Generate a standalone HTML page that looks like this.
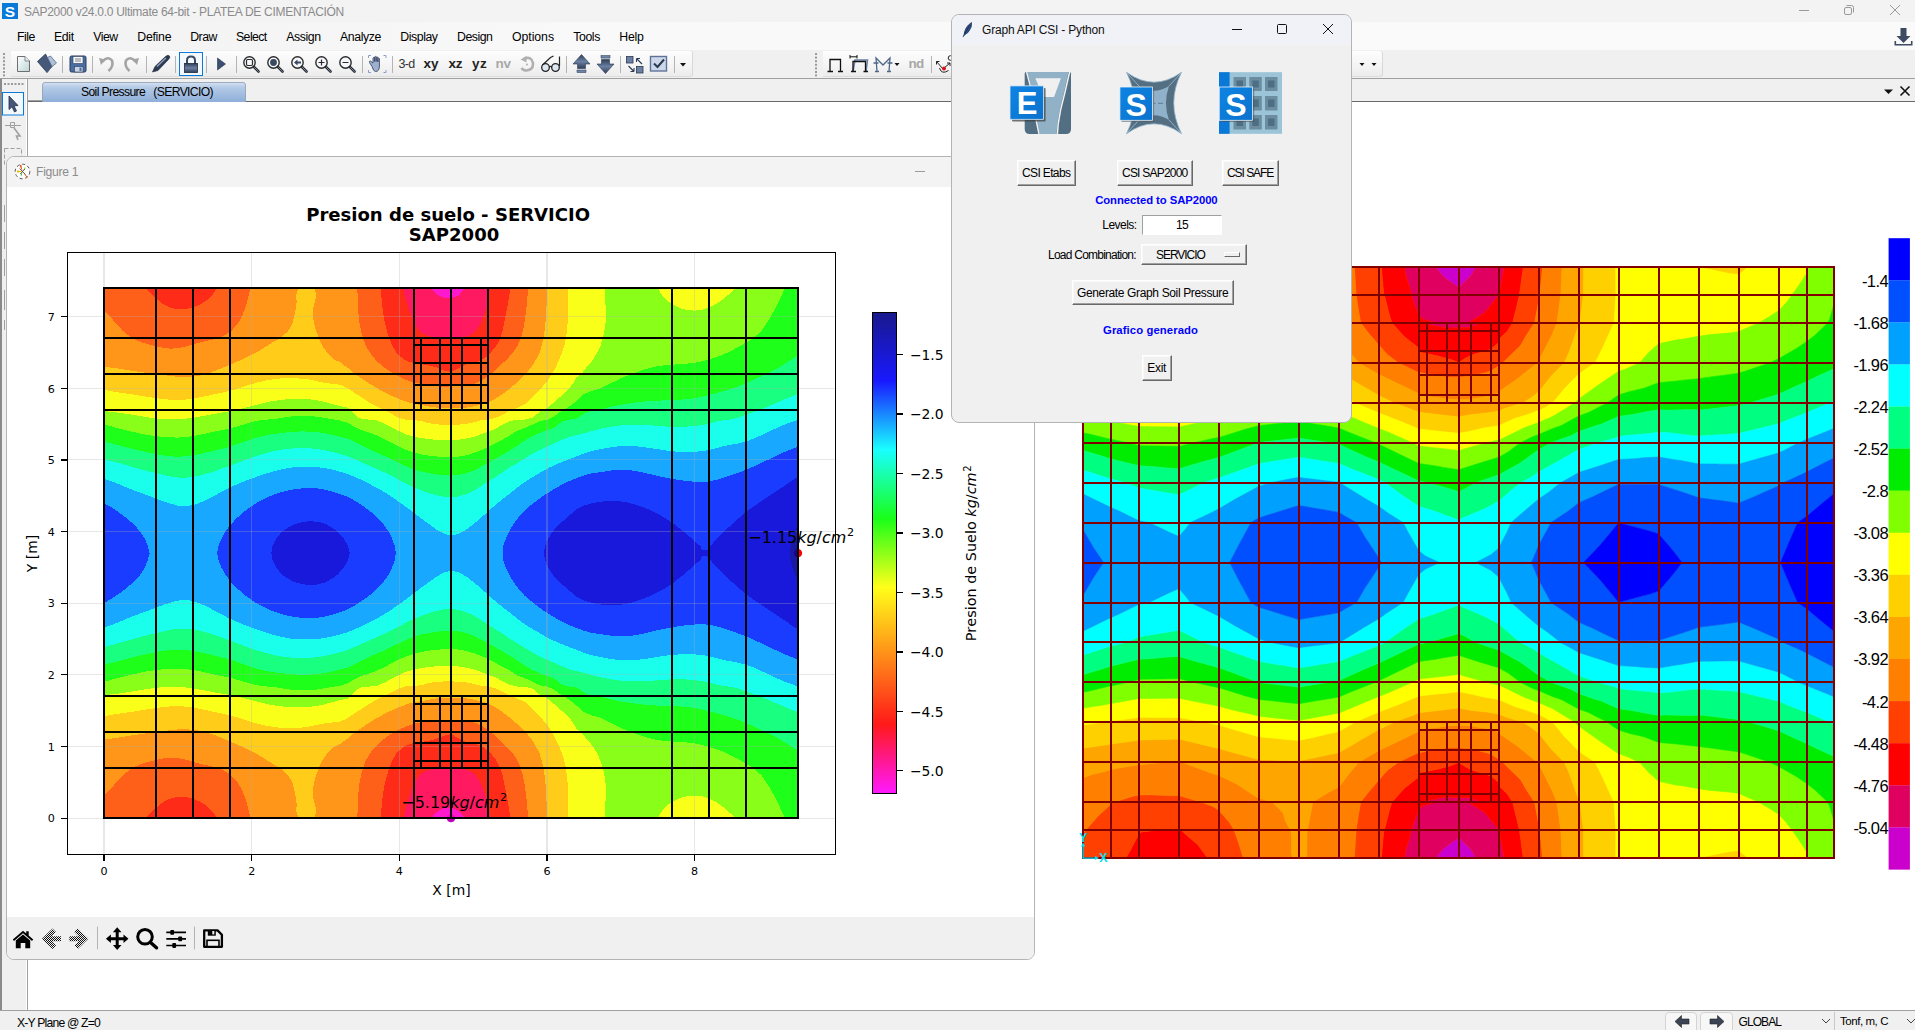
<!DOCTYPE html>
<html lang="en">
<head>
<meta charset="utf-8">
<title>SAP2000 - Soil Pressure</title>
<style>
html,body{margin:0;padding:0;}
body{width:1915px;height:1030px;overflow:hidden;background:#fff;position:relative;font-family:"Liberation Sans",sans-serif;font-size:12px;color:#000;}
.abs{position:absolute;}
.t{position:absolute;white-space:nowrap;line-height:1;}
#titlebar{left:0;top:0;width:1915px;height:22px;background:#f3f3f3;}
#menubar{left:0;top:22px;width:1915px;height:28px;background:linear-gradient(to right,#f3f3f3 0,#f3f3f3 110px,#f9f9f9 600px,#fafafa 100%);}
#toolbar{left:0;top:50px;width:1915px;height:28px;background:#f0f0f0;}
#tabrow{left:0;top:78px;width:1915px;height:24px;background:#f0f0f0;}
#leftstrip{left:0;top:79px;width:27px;height:931px;background:#f0f0f0;}
#status{left:0;top:1010px;width:1915px;height:20px;background:#f0f0f0;border-top:1px solid #a0a0a0;box-sizing:border-box;}
.menu{top:31px;font-size:12px;}
.tb{position:absolute;top:51px;height:26px;background:linear-gradient(#fdfdfd,#f4f4f4 60%,#ececec);border-right:1px solid #d8d8d8;border-bottom:1px solid #dcdcdc;box-sizing:border-box;}
.sep{position:absolute;top:55px;width:1px;height:18px;background:#b8b8b8;}
.ico{position:absolute;}
/* figure window */
#figwin{left:6px;top:156px;width:1029px;height:804px;border:1px solid #b4b4b4;border-radius:8px;box-sizing:border-box;background:#fff;overflow:hidden;}
#figtitle{left:0;top:0;width:1027px;height:30px;background:#f3f3f3;}
#figtool{left:0;top:760px;width:1027px;height:42px;background:#f0f0f0;}
/* tk window */
#tkwin{left:951px;top:14px;width:401px;height:409px;border:1px solid #b4b4b4;border-radius:8px;box-sizing:border-box;background:#f0f0f0;overflow:hidden;}
#tktitle{left:0;top:0;width:399px;height:30px;background:#f1f2f8;}
.tkbtn{position:absolute;box-sizing:border-box;background:#f0f0f0;border:1px solid;border-color:#fff #696969 #696969 #fff;box-shadow:inset -1px -1px 0 #a0a0a0, inset 1px 1px 0 #f8f8f8;font-size:12px;text-align:center;}
.tkblue{color:#1414ff;font-weight:bold;font-size:11px;}
.lg{position:absolute;left:1830px;width:58px;text-align:right;font-size:16.5px;letter-spacing:-0.6px;line-height:1;white-space:nowrap;}
</style>
</head>
<body>
<!-- ===== SAP2000 main window chrome ===== -->
<div id="titlebar" class="abs"></div>
<div id="menubar" class="abs"></div>
<div id="toolbar" class="abs"></div>
<div id="tabrow" class="abs"></div>
<div class="abs" style="left:0;top:78px;width:1915px;height:1px;background:#a0a0a0"></div>
<div class="abs" style="left:28px;top:101px;width:1887px;height:1px;background:#696969"></div>
<div id="leftstrip" class="abs"></div>
<div class="abs" style="left:0;top:79px;width:2px;height:931px;background:#8a8a8a"></div>
<div class="abs" style="left:26px;top:79px;width:1px;height:931px;background:#fff"></div>
<div class="abs" style="left:27px;top:79px;width:1px;height:931px;background:#a0a0a0"></div>
<div id="status" class="abs"></div>

<!-- toolbar backgrounds -->
<div class="tb" style="left:11px;width:682px;border-radius:0 3px 3px 0"></div>
<div class="tb" style="left:823px;width:560px;border-radius:0 3px 3px 0"></div>
<svg class="abs" style="left:0;top:0" width="1915" height="120" viewBox="0 0 1915 120">
<defs>
<linearGradient id="gdoc" x1="0" y1="0" x2="1" y2="1"><stop offset="0" stop-color="#ffffff"/><stop offset="1" stop-color="#bcd6d8"/></linearGradient>
<linearGradient id="gblue" x1="0" y1="0" x2="0" y2="1"><stop offset="0" stop-color="#2f3e58"/><stop offset="0.5" stop-color="#6b80a3"/><stop offset="1" stop-color="#2f3e58"/></linearGradient>
<linearGradient id="gtab" x1="0" y1="0" x2="0" y2="1"><stop offset="0" stop-color="#d6e2f1"/><stop offset="0.25" stop-color="#b4cae6"/><stop offset="1" stop-color="#8eafd9"/></linearGradient>
</defs>
<!-- title icon -->
<rect x="2" y="3" width="16" height="16" fill="#0a7ad8"/>
<text x="10" y="17" font-family="Liberation Sans, sans-serif" font-size="15.5" font-weight="bold" fill="#fff" text-anchor="middle">S</text>
<!-- window controls -->
<g stroke="#9a9a9a" stroke-width="1" fill="none">
<path d="M1799,10.5H1809"/>
<rect x="1844.5" y="7.5" width="7" height="7" rx="1.5"/><path d="M1846.5,5.500H1851.5Q1853.5,5.500 1853.5,7.500V12.5"/>
<path d="M1890,5L1900,15M1900,5L1890,15"/>
</g>
<!-- download icon -->
<g fill="#3d4b63" transform="translate(2.5,0)"><path d="M1898,28h6v8h4l-7,7l-7,-7h4z"/><path d="M1892,41v4.5h18V41h-1.6v2.9h-14.8V41z"/></g>
<!-- grips -->
<g fill="#9a9a9a">
<rect x="3" y="53" width="2" height="2"/><rect x="3" y="56.6" width="2" height="2"/><rect x="3" y="60.2" width="2" height="2"/><rect x="3" y="63.8" width="2" height="2"/><rect x="3" y="67.4" width="2" height="2"/><rect x="3" y="71" width="2" height="2"/><rect x="3" y="74.4" width="2" height="2"/>
<rect x="815" y="53" width="2" height="2"/><rect x="815" y="56.6" width="2" height="2"/><rect x="815" y="60.2" width="2" height="2"/><rect x="815" y="63.8" width="2" height="2"/><rect x="815" y="67.4" width="2" height="2"/><rect x="815" y="71" width="2" height="2"/><rect x="815" y="74.4" width="2" height="2"/>
<rect x="4" y="83" width="2" height="2"/><rect x="7.5" y="83" width="2" height="2"/><rect x="11" y="83" width="2" height="2"/><rect x="14.5" y="83" width="2" height="2"/><rect x="18" y="83" width="2" height="2"/><rect x="21.5" y="83" width="2" height="2"/>
</g>
<!-- separators -->
<g stroke="#b4b4b4" stroke-width="1">
<path d="M62.5,56V73M92.5,56V73M146.5,56V73M175.5,56V73M206.5,56V73M236.5,56V73M362.5,56V73M392.5,56V73M566.5,56V73M620.5,56V73M674.5,56V73M931.5,56V73"/>
</g>
<!-- new -->
<path d="M17.5,56.5H25L29.5,61V71.5H17.5Z" fill="url(#gdoc)" stroke="#6e6e6e"/><path d="M25,56.5V61H29.5" fill="#e8f0f0" stroke="#6e6e6e" stroke-width=".8"/>
<!-- open -->
<path d="M37.5,61.5L45.5,54L52,66.5L47,72.5Z" fill="#46587a" stroke="#2c3850" stroke-width=".8"/>
<path d="M47,72.5L52,66.5L56.5,63L50.5,56L47.5,57.5L52,66.5" fill="#aebfd9" stroke="#5a6c8c" stroke-width=".8"/>
<!-- save -->
<rect x="70" y="56" width="16" height="16" rx="1.5" fill="#4a6da3" stroke="#2c3c5a"/>
<rect x="73" y="56.5" width="10" height="7" fill="#f4f6fa" stroke="#2c3c5a" stroke-width=".6"/><path d="M75,59H81M75,61H81" stroke="#555" stroke-width=".7"/>
<rect x="74.5" y="66.5" width="8.5" height="5.5" fill="#c9d3e4" stroke="#2c3c5a" stroke-width=".6"/><rect x="79.5" y="67.5" width="2" height="3.5" fill="#4a6da3"/>
<!-- undo / redo -->
<g fill="none" stroke="#a4a4a4" stroke-width="2.6" stroke-linecap="butt">
<path d="M102.5,61.5Q108,55.5 112,60.5Q114,66 108.5,71"/>
<path d="M135.5,61.5Q130,55.5 126,60.5Q124,66 129.5,71"/>
</g>
<path d="M99,58L105.5,59.5L101,65Z" fill="#a4a4a4"/><path d="M139,58L132.500,59.5L137,65Z" fill="#a4a4a4"/>
<!-- pen -->
<path d="M152.500,72L155,66.500L165.500,56.500Q168,54.500 169.500,56Q170.500,57.500 168.500,59.500L158,70.500Z" fill="#2e3a52" stroke="#1e2738" stroke-width=".6"/>
<path d="M157,66.500L166,58" stroke="#8fa3c4" stroke-width="1.2"/>
<!-- lock -->
<rect x="179.5" y="52.5" width="23" height="23" fill="#f3f8fd" stroke="#0a7ad8"/>
<path d="M187,64V60.5Q187,56.500 191,56.500Q195,56.500 195,60.500V64" fill="none" stroke="#3a4962" stroke-width="2"/>
<rect x="184.500" y="63.500" width="13" height="9" fill="url(#gblue)" stroke="#1f2a3d" stroke-width=".8"/>
<!-- play -->
<path d="M217.500,58L225.500,64L217.500,70Z" fill="#3b4f73" stroke="#26344e" stroke-width=".6"/>
<!-- magnifiers -->
<g fill="#f6f8fb" stroke="#2c2c2c" stroke-width="1.4">
<circle cx="249.5" cy="62.5" r="5.7"/><circle cx="273.500" cy="62.5" r="5.7"/><circle cx="297.5" cy="62.5" r="5.7"/><circle cx="321.500" cy="62.500" r="5.7"/><circle cx="345.500" cy="62.500" r="5.7"/>
</g>
<g stroke="#2c2c2c" stroke-width="2.6" stroke-linecap="round"><path d="M254,67L258.500,71.500M278,67L282.500,71.500M302,67L306.500,71.500M326,67L330.500,71.500M350,67L354.500,71.500"/></g>
<g stroke="#6e86ad" stroke-width="1" stroke-linecap="round"><path d="M254.500,67.500L258.500,71.500M278.500,67.500L282.500,71.500M302.500,67.500L306.500,71.500M326.500,67.500L330.500,71.500M350.500,67.500L354.500,71.500"/></g>
<rect x="246.500" y="59.500" width="6" height="6" rx="1.2" fill="none" stroke="#2c2c2c" stroke-width="1.2"/>
<circle cx="273.500" cy="62.500" r="3.4" fill="#3a4860"/>
<path d="M294,62.500L297.500,59.500V61.500H301V63.500H297.500V65.500Z" fill="#3a4860"/>
<path d="M318.500,62.500H324.500M321.500,59.500V65.500M342.500,62.500H348.500" stroke="#2c2c2c" stroke-width="1.2"/>
<!-- hand -->
<path d="M368.5,58V55.5H371M383.500,55.500H386V58M368.500,70V72.500H371M383.500,72.500H386V70" fill="none" stroke="#8aa0c4" stroke-width="1"/>
<path d="M372,66.500L369.500,62.500Q369,61 370.500,61L373,63V58Q373.700,56.800 374.500,58V61.500V57Q375.300,55.800 376.100,57V61.500V57.300Q377,56.200 377.800,57.300V62V58.500Q378.600,57.500 379.400,58.500V66Q379.400,71.500 375.500,71.500Q373.500,71.500 372,66.500Z" fill="#9db0cf" stroke="#3b4a66" stroke-width=".9"/>
<!-- rotate gray -->
<path d="M524,58.500Q531.500,56 533,63Q533.500,70 526.500,70.500Q523,70.500 521.500,68" fill="none" stroke="#b0b0b0" stroke-width="2.6"/><path d="M520.500,59.500L526.500,56V62.500Z" fill="#b0b0b0"/><circle cx="527" cy="64.500" r="1" fill="#b0b0b0"/>
<!-- glasses -->
<g fill="#dfe7f3" stroke="#222" stroke-width="1.3"><circle cx="545.500" cy="67.500" r="3.800"/><circle cx="555.500" cy="67.500" r="3.800"/></g>
<path d="M542.500,65L550.500,57.500L553.500,56M559.500,66V56.500M549.300,67Q550.500,65.800 551.700,67" fill="none" stroke="#222" stroke-width="1.2"/>
<!-- up / down arrows -->
<path d="M581.500,54.500L590,64H585.500V68.500H577.500V64H573Z" fill="url(#gblue)" stroke="#2b3950" stroke-width=".6"/><rect x="577" y="70" width="9" height="2.600" fill="#6e84a8" stroke="#2b3950" stroke-width=".5"/>
<path d="M605.500,73.500L614,64H609.500V59.500H601.500V64H597Z" fill="url(#gblue)" stroke="#2b3950" stroke-width=".6"/><rect x="601" y="55.500" width="9" height="2.600" fill="#6e84a8" stroke="#2b3950" stroke-width=".5"/>
<!-- shrink -->
<rect x="626.500" y="56.500" width="6.500" height="6.500" fill="#6b80a3" stroke="#2b3950" stroke-width=".8"/><rect x="636.500" y="66.500" width="6.500" height="6.500" fill="#6b80a3" stroke="#2b3950" stroke-width=".8"/>
<path d="M636.500,58.500L642,64M636.500,58.500H640M636.500,58.500V62M634,71.500L628.500,66M634,71.500H630.500M634,71.500V68" stroke="#2b3950" stroke-width="1.1" fill="none"/>
<!-- check -->
<rect x="650.500" y="56.500" width="16" height="14.500" fill="#ccd8ea" stroke="#5f7398" stroke-width="1.400"/><path d="M654,63.500L657.500,67L664,59.500" fill="none" stroke="#2b3950" stroke-width="2"/>
<!-- dropdowns -->
<path d="M680,63H686L683,66.500Z" fill="#111"/>
<path d="M894.500,63H899.500L897,66Z" fill="#111"/>
<path d="M1359.500,63H1364.500L1362,66ZM1371.500,63H1376.500L1374,66Z" fill="#111"/>
<!-- portal frames -->
<path d="M827.500,71.500H833M830,71.500V59.500H840.500V71.500M838,71.500H843" fill="none" stroke="#111" stroke-width="1.300"/>
<path d="M850,55V58.500M850,56.800H857M857,55V58.500" fill="none" stroke="#111" stroke-width="1"/>
<path d="M853,71.500L855,60H867.500L866,71.500" fill="none" stroke="#6b80a3" stroke-width="1.600"/>
<path d="M851,71.500H856M853,71.500V61.500H865.500V71.500M863.500,71.500H868" fill="none" stroke="#111" stroke-width="1.300"/>
<path d="M875,71.500H879M887,71.500H891M877,71.500L876,58L883,65L890,58L889,71.500M873.500,63H878.500M887.500,63H892.500" fill="none" stroke="#4f6689" stroke-width="1.300"/>
<!-- snap icon -->
<path d="M936.500,61.500L943,69M936.500,61.500H939.500M936.500,61.500V64.500M939.500,68Q941.500,75 948.500,70.500M944,68L950,63M950,63H947M950,63V66" fill="none" stroke="#222" stroke-width="1"/><circle cx="944" cy="68.500" r="2" fill="#e0101a"/><circle cx="950.500" cy="58" r="2.300" fill="none" stroke="#222"/>
<!-- tab -->
<path d="M42.500,102V85Q42.500,82.500 45,82.500H243Q245.500,82.500 245.500,85V102Z" fill="url(#gtab)"/><path d="M42.500,102V85Q42.500,82.500 45,82.500H243Q245.500,82.500 245.500,85V102" fill="none" stroke="#8a9ab0" stroke-width=".8"/>
<path d="M28,100.500H42.500" stroke="#a0a0a0"/>
<!-- tab row right glyphs -->
<path d="M1884,89.500H1893L1888.500,94Z" fill="#111"/><path d="M1900.500,86.500L1909.500,95.500M1909.500,86.500L1900.500,95.500" stroke="#111" stroke-width="1.600"/>
<!-- left strip: select tool -->
<rect x="2.500" y="92.500" width="21" height="22.500" fill="#f3f8fd" stroke="#0a7ad8"/>
<path d="M9,96L18,105.500L14,105.800L16.500,111L14.500,112L12,106.800L9,109.500Z" fill="#46587a" stroke="#222d42" stroke-width=".8"/>
</svg>
<!-- left strip gray icons (mostly hidden) -->
<svg class="abs" style="left:0;top:115px" width="28" height="900" viewBox="0 115 28 900">
<g fill="none" stroke="#a0a0a0" stroke-width="1">
<path d="M5,125.500H21M10.500,122.500h4v5h-4z"/><path d="M14,128L20,136L16.500,136L18,140" stroke-width="1.6"/>
<path d="M4.500,148.500H21.500V164" stroke-dasharray="4 2"/><path d="M4.500,148.500V166" stroke-dasharray="4 2"/>
<path d="M4.500,205V222M4.500,232V249M4.500,259V276M4.500,290V310M4.500,320V330" />
</g>
</svg>
<!-- status bar items -->
<div class="abs" style="left:1665px;top:1012px;width:32px;height:22px;background:#f7f7f7;border:1px solid #d4d4d4;border-radius:4px;box-sizing:border-box"></div>
<div class="abs" style="left:1700px;top:1012px;width:33px;height:22px;background:#f7f7f7;border:1px solid #d4d4d4;border-radius:4px;box-sizing:border-box"></div>
<div class="abs" style="left:1834px;top:1012px;width:1px;height:18px;background:#c8c8c8"></div>
<svg class="abs" style="left:1660px;top:1011px" width="255" height="19" viewBox="1660 1011 255 19">
<path d="M1675,1021.500L1681.500,1015.500V1019H1689V1024H1681.500V1027.500Z" fill="#3a4454" stroke="#222" stroke-width=".6"/>
<path d="M1724,1021.500L1717.500,1015.500V1019H1710V1024H1717.500V1027.500Z" fill="#3a4454" stroke="#222" stroke-width=".6"/>
<path d="M1822,1019L1826,1023L1830,1019M1907,1019L1911,1023L1915,1019" fill="none" stroke="#444" stroke-width="1"/>
</svg>
<div class="t" style="left:24.0px;top:5.8px;font-size:12px;color:#8a8a8a;font-weight:normal;letter-spacing:-0.285px;">SAP2000 v24.0.0 Ultimate 64-bit - PLATEA DE CIMENTACIÓN</div>
<div class="t" style="left:17.0px;top:30.9px;font-size:12.3px;color:#000;font-weight:normal;letter-spacing:-0.457px;">File</div>
<div class="t" style="left:54.0px;top:30.9px;font-size:12.3px;color:#000;font-weight:normal;letter-spacing:-0.376px;">Edit</div>
<div class="t" style="left:93.2px;top:30.9px;font-size:12.3px;color:#000;font-weight:normal;letter-spacing:-0.459px;">View</div>
<div class="t" style="left:137.3px;top:30.9px;font-size:12.3px;color:#000;font-weight:normal;letter-spacing:-0.274px;">Define</div>
<div class="t" style="left:190.2px;top:30.9px;font-size:12.3px;color:#000;font-weight:normal;letter-spacing:-0.476px;">Draw</div>
<div class="t" style="left:236.0px;top:30.9px;font-size:12.3px;color:#000;font-weight:normal;letter-spacing:-0.581px;">Select</div>
<div class="t" style="left:286.2px;top:30.9px;font-size:12.3px;color:#000;font-weight:normal;letter-spacing:-0.420px;">Assign</div>
<div class="t" style="left:340.0px;top:30.9px;font-size:12.3px;color:#000;font-weight:normal;letter-spacing:-0.393px;">Analyze</div>
<div class="t" style="left:400.3px;top:30.9px;font-size:12.3px;color:#000;font-weight:normal;letter-spacing:-0.433px;">Display</div>
<div class="t" style="left:457.0px;top:30.9px;font-size:12.3px;color:#000;font-weight:normal;letter-spacing:-0.464px;">Design</div>
<div class="t" style="left:512.0px;top:30.9px;font-size:12.3px;color:#000;font-weight:normal;letter-spacing:-0.056px;">Options</div>
<div class="t" style="left:573.2px;top:30.9px;font-size:12.3px;color:#000;font-weight:normal;letter-spacing:-0.384px;">Tools</div>
<div class="t" style="left:619.3px;top:30.9px;font-size:12.3px;color:#000;font-weight:normal;letter-spacing:-0.224px;">Help</div>
<div class="t" style="left:81.0px;top:86.3px;font-size:12.2px;color:#000;font-weight:normal;letter-spacing:-0.645px;">Soil Pressure&nbsp;&nbsp;&nbsp;(SERVICIO)</div>
<div class="t" style="left:398.5px;top:57.9px;font-size:12.5px;color:#333;font-weight:normal;letter-spacing:-0.693px;">3-d</div>
<div class="t" style="left:423.6px;top:57.1px;font-size:13.5px;color:#222;font-weight:bold;letter-spacing:-0.016px;">xy</div>
<div class="t" style="left:448.6px;top:57.1px;font-size:13.5px;color:#222;font-weight:bold;letter-spacing:-0.233px;">xz</div>
<div class="t" style="left:472.0px;top:57.1px;font-size:13.5px;color:#222;font-weight:bold;letter-spacing:0.367px;">yz</div>
<div class="t" style="left:495.5px;top:57.1px;font-size:13.5px;color:#a8a8a8;font-weight:bold;letter-spacing:-0.333px;">nv</div>
<div class="t" style="left:908.6px;top:57.1px;font-size:13.5px;color:#a8a8a8;font-weight:bold;letter-spacing:-0.750px;">nd</div>
<div class="t" style="left:17.0px;top:1017.4px;font-size:12.2px;color:#000;font-weight:normal;letter-spacing:-0.809px;">X-Y Plane @ Z=0</div>
<div class="t" style="left:1738.5px;top:1015.8px;font-size:12px;color:#000;font-weight:normal;letter-spacing:-0.922px;">GLOBAL</div>
<div class="t" style="left:1840.0px;top:1016.3px;font-size:11.5px;color:#000;font-weight:normal;letter-spacing:-0.441px;">Tonf, m, C</div>

<!-- ===== SAP2000 contour view ===== -->
<svg class="abs" style="left:0;top:0" width="1915" height="1030" viewBox="0 0 1915 1030">
<rect x="1083.1" y="267.012" width="751.342" height="591.038" fill="#ffff00"/>
<path fill="#cc00cc" stroke="#cc00cc" stroke-width="0.6" fill-rule="evenodd" d="M1475.8,858 1471,849.5 1458.8,837.4 1444.1,847.8 1435.4,858 1458.8,858ZM1435.4,267 1444.1,277.3 1458.8,287.6 1471,275.5 1475.8,267 1458.8,267Z"/>
<path fill="#e00060" stroke="#e00060" stroke-width="0.6" fill-rule="evenodd" d="M1435.4,858 1444.1,847.8 1458.8,837.4 1471,849.5 1475.8,858 1498.7,858 1504.1,858 1503.7,854.6 1498.9,830.2 1498.9,830.1 1498.9,830 1498.7,829.5 1484.4,812.2 1468.4,802.1 1458.8,802.1 1436.2,802.1 1423.7,805.6 1418.8,809.1 1412.7,825.8 1411.5,830.1 1410.1,836.2 1406,849.1 1404.3,858 1418.8,858ZM1475.8,267 1471,275.5 1458.8,287.6 1444.1,277.3 1435.4,267 1418.8,267 1404.3,267 1406,276 1410.1,288.9 1411.5,295 1412.7,299.2 1418.8,315.9 1423.7,319.5 1436.2,322.9 1458.8,322.9 1468.4,322.9 1484.4,312.9 1498.7,295.5 1498.9,295.1 1498.9,295 1498.9,294.8 1503.7,270.5 1504.1,267 1498.7,267ZM1480.5,802.1 1476,800 1470.8,797.8 1465.5,797.6 1463.8,797.5 1458.8,797.4 1454.1,797.2 1451.4,797.2 1446.8,797.1 1438,798.6 1433.4,799.5 1426.8,800.7 1425.9,801.2 1424.6,802.1 1426.8,802.1 1446.8,802.1 1458.8,802.1 1470.8,802.1ZM1424.6,322.9 1425.9,323.8 1426.8,324.4 1433.4,325.6 1438,326.4 1446.8,328 1451.4,327.9 1454.1,327.8 1458.8,327.7 1463.8,327.5 1465.5,327.4 1470.8,327.3 1476,325 1480.5,322.9 1470.8,322.9 1458.8,322.9 1446.8,322.9 1426.8,322.9Z"/>
<path fill="#ff0000" stroke="#ff0000" stroke-width="0.6" fill-rule="evenodd" d="M1207.6,858 1197.9,844.8 1188.4,836.7 1181.2,830.1 1180.1,829.4 1179,828.9 1177.3,828.9 1159,830.1 1141.6,831.9 1139.1,833.6 1130.7,849.7 1126,858 1139.1,858 1179,858ZM1404.3,858 1406,849.1 1410.1,836.2 1411.5,830.1 1412.7,825.8 1418.8,809.1 1423.7,805.6 1436.2,802.1 1418.8,802.1 1418.8,776.9 1404.7,788 1391.9,802.1 1389.5,809.6 1385.6,825.4 1384.2,830.1 1383.5,833.3 1381.5,856.2 1381.1,858ZM1523.3,858 1521.6,846.1 1521.2,842.3 1519.4,830.1 1516.5,817.7 1515.5,813.8 1512.6,802.1 1507.2,793.7 1498.7,785.4 1498.7,802.1 1468.4,802.1 1484.4,812.2 1498.7,829.5 1498.9,830 1498.9,830.1 1498.9,830.2 1503.7,854.6 1504.1,858ZM1504.1,267 1503.7,270.5 1498.9,294.8 1498.9,295 1498.9,295.1 1498.7,295.5 1484.4,312.9 1468.4,322.9 1498.7,322.9 1498.7,339.6 1507.2,331.4 1512.6,322.9 1515.5,311.2 1516.5,307.4 1519.4,295 1521.2,282.7 1521.6,279 1523.3,267ZM1381.1,267 1381.5,268.8 1383.5,291.7 1384.2,295 1385.6,299.7 1389.5,315.4 1391.9,322.9 1404.7,337 1418.8,348.1 1418.8,322.9 1436.2,322.9 1423.7,319.5 1418.8,315.9 1412.7,299.2 1411.5,295 1410.1,288.9 1406,276 1404.3,267ZM1126,267 1130.7,275.4 1139.1,291.5 1141.6,293.2 1159,295 1177.3,296.1 1179,296.2 1180.1,295.7 1181.2,295 1188.4,288.4 1197.9,280.2 1207.6,267 1179,267 1139.1,267ZM1424.6,802.1 1425.9,801.2 1426.8,800.7 1433.4,799.5 1438,798.6 1446.8,797.1 1451.4,797.2 1454.1,797.2 1458.8,797.4 1463.8,797.5 1465.5,797.6 1470.8,797.8 1476,800 1480.5,802.1 1490.7,802.1 1498.7,802.1 1498.7,794.2 1498.7,782.3 1496.3,780.4 1491.7,776.5 1490.7,775.7 1489.6,775.4 1486,774.2 1475.6,771.3 1470.8,769.5 1465.9,767 1459.4,762.8 1458.8,762.4 1458.4,762.6 1450.3,765.8 1446.8,766.7 1438.1,769 1434.2,769.8 1426.8,771.4 1425.2,771.7 1420,772.5 1418.8,772.7 1418.8,774.2 1418.8,794.2 1418.8,802.1ZM1480.5,322.9 1476,325 1470.8,327.3 1465.5,327.4 1463.8,327.5 1458.8,327.7 1454.1,327.8 1451.4,327.9 1446.8,328 1438,326.4 1433.4,325.6 1426.8,324.4 1425.9,323.8 1424.6,322.9 1418.8,322.9 1418.8,330.9 1418.8,350.9 1418.8,352.4 1420,352.6 1425.2,353.3 1426.8,353.6 1434.2,355.3 1438.1,356.1 1446.8,358.4 1450.3,359.3 1458.4,362.5 1458.8,362.6 1459.4,362.2 1465.9,358 1470.8,355.6 1475.6,353.8 1486,350.9 1489.6,349.7 1490.7,349.3 1491.7,348.6 1496.3,344.7 1498.7,342.7 1498.7,330.9 1498.7,322.9 1490.7,322.9Z"/>
<path fill="#ff4000" stroke="#ff4000" stroke-width="0.6" fill-rule="evenodd" d="M1126,858 1130.7,849.7 1139.1,833.6 1141.6,831.9 1159,830.1 1177.3,828.9 1179,828.9 1180.1,829.4 1181.2,830.1 1188.4,836.7 1197.9,844.8 1207.6,858 1219,858 1243.3,858 1239.1,844.2 1239.1,844 1234.1,830.1 1229.7,822.6 1219,810.4 1213,806.4 1201.2,802.1 1184,797.1 1179,795.4 1172.5,795.6 1146.5,794.7 1139.1,794.9 1134.6,795.8 1114,802.1 1112,803.1 1111.1,803.9 1097.5,816.6 1085.7,830.1 1084.5,831.5 1083.1,833 1083.1,858 1111.1,858ZM1381.1,858 1381.5,856.2 1383.5,833.3 1384.2,830.1 1385.6,825.4 1389.5,809.6 1391.9,802.1 1404.7,788 1418.8,776.9 1418.8,762.2 1418.8,752.4 1412.2,755.6 1398.3,762.2 1387.2,770.5 1378.8,780 1368.6,791.9 1360.7,802.1 1358.3,815.7 1358.2,816.6 1356.1,830.1 1355.3,841.6 1355.1,846.7 1354.3,858 1378.8,858ZM1542.5,858 1542.4,855.5 1539.9,830.9 1539.9,830.1 1539.8,829.3 1538.7,823.9 1535,804.7 1534.4,802.1 1526.6,790.1 1520.9,780 1502.8,762.2 1500.5,760.4 1498.7,759.2 1498.7,762.2 1498.7,785.4 1507.2,793.7 1512.6,802.1 1515.5,813.8 1516.5,817.7 1519.4,830.1 1521.2,842.3 1521.6,846.1 1523.3,858 1538.7,858ZM1523.3,267 1521.6,279 1521.2,282.7 1519.4,295 1516.5,307.4 1515.5,311.2 1512.6,322.9 1507.2,331.4 1498.7,339.6 1498.7,362.9 1498.7,365.9 1500.5,364.7 1502.8,362.9 1520.9,345.1 1526.6,335 1534.4,322.9 1535,320.4 1538.7,301.2 1539.8,295.7 1539.9,295 1539.9,294.1 1542.4,269.6 1542.5,267 1538.7,267ZM1354.3,267 1355.1,278.3 1355.3,283.5 1356.1,295 1358.2,308.5 1358.3,309.4 1360.7,322.9 1368.6,333.2 1378.8,345.1 1387.2,354.5 1398.3,362.9 1412.2,369.5 1418.8,372.7 1418.8,362.9 1418.8,348.1 1404.7,337 1391.9,322.9 1389.5,315.4 1385.6,299.7 1384.2,295 1383.5,291.7 1381.5,268.8 1381.1,267 1378.8,267ZM1207.6,267 1197.9,280.2 1188.4,288.4 1181.2,295 1180.1,295.7 1179,296.2 1177.3,296.1 1159,295 1141.6,293.2 1139.1,291.5 1130.7,275.4 1126,267 1111.1,267 1083.1,267 1083.1,292.1 1084.5,293.5 1085.7,295 1097.5,308.5 1111.1,321.1 1112,322 1114,322.9 1134.6,329.2 1139.1,330.2 1146.5,330.4 1172.5,329.5 1179,329.6 1184,327.9 1201.2,322.9 1213,318.7 1219,314.7 1229.7,302.4 1234.1,295 1239.1,281.1 1239.1,280.9 1243.3,267 1219,267ZM1498.7,759.2 1495.1,756.8 1494.6,756.4 1490.7,754.1 1486.6,752.7 1476.6,750.2 1472.1,748.9 1470.8,748.6 1469.8,748.6 1460.1,748.1 1458.8,748 1457.5,748 1448.2,747.9 1446.8,748 1444.8,748.3 1433.1,750.2 1428,750.9 1426.8,751.2 1426.1,751.3 1420.3,752.4 1418.8,752.7 1418.8,762.2 1418.8,772.7 1420,772.5 1425.2,771.7 1426.8,771.4 1434.2,769.8 1438.1,769 1446.8,766.7 1450.3,765.8 1458.4,762.6 1458.8,762.4 1459.4,762.8 1465.9,767 1470.8,769.5 1475.6,771.3 1486,774.2 1489.6,775.4 1490.7,775.7 1491.7,776.5 1496.3,780.4 1498.7,782.3 1498.7,774.2 1498.7,762.2ZM1498.7,342.7 1496.3,344.7 1491.7,348.6 1490.7,349.3 1489.6,349.7 1486,350.9 1475.6,353.8 1470.8,355.6 1465.9,358 1459.4,362.2 1458.8,362.6 1458.4,362.5 1450.3,359.3 1446.8,358.4 1438.1,356.1 1434.2,355.3 1426.8,353.6 1425.2,353.3 1420,352.6 1418.8,352.4 1418.8,362.9 1418.8,372.4 1420.3,372.7 1426.1,373.7 1426.8,373.9 1428,374.1 1433.1,374.8 1444.8,376.8 1446.8,377.1 1448.2,377.1 1457.5,377 1458.8,377 1460.1,377 1469.8,376.5 1470.8,376.4 1472.1,376.1 1476.6,374.8 1486.6,372.4 1490.7,370.9 1494.6,368.6 1495.1,368.2 1498.7,365.9 1498.7,362.9 1498.7,350.9Z"/>
<path fill="#ff8000" stroke="#ff8000" stroke-width="0.6" fill-rule="evenodd" d="M1292.4,858 1291.6,852.9 1291.6,835.2 1290.4,830.1 1285.3,820.6 1283.3,813.1 1272.6,802.1 1262.1,798.9 1258.9,798.4 1248.9,792.1 1237,784.1 1219,775.4 1209,772.2 1182,762.2 1179.6,761.6 1179,761.5 1178.3,761.5 1167,762.2 1141.3,764.5 1139.1,764.6 1137.1,765 1115.5,768.5 1111.1,769.5 1104.5,771.6 1091.7,774.5 1083.1,777.7 1083.1,802.1 1083.1,830.1 1083.1,833 1084.5,831.5 1085.7,830.1 1097.5,816.6 1111.1,803.9 1112,803.1 1114,802.1 1134.6,795.8 1139.1,794.9 1146.5,794.7 1172.5,795.6 1179,795.4 1184,797.1 1201.2,802.1 1213,806.4 1219,810.4 1229.7,822.6 1234.1,830.1 1239.1,844 1239.1,844.2 1243.3,858 1258.9,858ZM1354.3,858 1355.1,846.7 1355.3,841.6 1356.1,830.1 1358.2,816.6 1358.3,815.7 1360.7,802.1 1368.6,791.9 1378.8,780 1387.2,770.5 1398.3,762.2 1412.2,755.6 1418.8,752.4 1418.8,731.3 1401.3,739.7 1397.9,741.4 1378.8,750.5 1371.4,754.8 1358.7,762.2 1349.5,772.9 1338.9,787 1328.9,792.1 1312.7,802.1 1311.2,810.7 1308.6,823.4 1307.3,830.1 1306.9,835.7 1307,852.4 1306.6,858 1338.9,858ZM1562.1,858 1561.5,846 1561.5,842.1 1560.8,830.1 1558.9,816.3 1558.9,816 1556.9,802.1 1551.6,789.2 1538.7,764 1538.1,762.9 1537.4,762.2 1516,745 1498.7,733.2 1498.7,759.2 1500.5,760.4 1502.8,762.2 1520.9,780 1526.6,790.1 1534.4,802.1 1535,804.7 1538.7,823.9 1539.8,829.3 1539.9,830.1 1539.9,830.9 1542.4,855.5 1542.5,858ZM1542.5,267 1542.4,269.6 1539.9,294.1 1539.9,295 1539.8,295.7 1538.7,301.2 1535,320.4 1534.4,322.9 1526.6,335 1520.9,345.1 1502.8,362.9 1500.5,364.7 1498.7,365.9 1498.7,391.8 1516,380.1 1537.4,362.9 1538.1,362.2 1538.7,361.1 1551.6,335.9 1556.9,322.9 1558.9,309.1 1558.9,308.8 1560.8,295 1561.5,282.9 1561.5,279 1562.1,267ZM1306.6,267 1307,272.6 1306.9,289.4 1307.3,295 1308.6,301.7 1311.2,314.4 1312.7,322.9 1328.9,332.9 1338.9,338 1349.5,352.2 1358.7,362.9 1371.4,370.3 1378.8,374.5 1397.9,383.7 1401.3,385.3 1418.8,393.7 1418.8,372.7 1412.2,369.5 1398.3,362.9 1387.2,354.5 1378.8,345.1 1368.6,333.2 1360.7,322.9 1358.3,309.4 1358.2,308.5 1356.1,295 1355.3,283.5 1355.1,278.3 1354.3,267 1338.9,267ZM1243.3,267 1239.1,280.9 1239.1,281.1 1234.1,295 1229.7,302.4 1219,314.7 1213,318.7 1201.2,322.9 1184,327.9 1179,329.6 1172.5,329.5 1146.5,330.4 1139.1,330.2 1134.6,329.2 1114,322.9 1112,322 1111.1,321.1 1097.5,308.5 1085.7,295 1084.5,293.5 1083.1,292.1 1083.1,295 1083.1,322.9 1083.1,347.3 1091.7,350.6 1104.5,353.4 1111.1,355.5 1115.5,356.6 1137.1,360.1 1139.1,360.5 1141.3,360.6 1167,362.9 1178.3,363.6 1179,363.6 1179.6,363.5 1182,362.9 1209,352.9 1219,349.7 1237,341 1248.9,332.9 1258.9,326.6 1262.1,326.1 1272.6,322.9 1283.3,312 1285.3,304.5 1290.4,295 1291.6,289.8 1291.6,272.2 1292.4,267 1258.9,267ZM1498.7,732.1 1498.1,731.8 1494.1,730.3 1491.6,729.4 1490.7,729.3 1486.3,728.5 1478.5,727.2 1470.8,725.8 1465.7,725.6 1463.7,725.5 1458.8,725.4 1453.8,725.6 1451.9,725.7 1446.8,725.9 1439.2,727.2 1432.3,728.1 1426.8,728.8 1425.6,729 1418.9,730.2 1418.8,730.2 1418.8,730.3 1418.8,750.2 1418.8,752.7 1420.3,752.4 1426.1,751.3 1426.8,751.2 1428,750.9 1433.1,750.2 1444.8,748.3 1446.8,748 1448.2,747.9 1457.5,748 1458.8,748 1460.1,748.1 1469.8,748.6 1470.8,748.6 1472.1,748.9 1476.6,750.2 1486.6,752.7 1490.7,754.1 1494.6,756.4 1495.1,756.8 1498.7,759.2 1498.7,750.2ZM1498.7,365.9 1495.1,368.2 1494.6,368.6 1490.7,370.9 1486.6,372.4 1476.6,374.8 1472.1,376.1 1470.8,376.4 1469.8,376.5 1460.1,377 1458.8,377 1457.5,377 1448.2,377.1 1446.8,377.1 1444.8,376.8 1433.1,374.8 1428,374.1 1426.8,373.9 1426.1,373.7 1420.3,372.7 1418.8,372.4 1418.8,374.8 1418.8,394.8 1418.8,394.9 1418.9,394.9 1425.6,396 1426.8,396.2 1432.3,397 1439.2,397.8 1446.8,399.1 1451.9,399.3 1453.8,399.5 1458.8,399.7 1463.7,399.5 1465.7,399.4 1470.8,399.3 1478.5,397.9 1486.3,396.6 1490.7,395.8 1491.6,395.6 1494.1,394.8 1498.1,393.2 1498.7,392.9 1498.7,374.8Z"/>
<path fill="#ffa500" stroke="#ffa500" stroke-width="0.6" fill-rule="evenodd" d="M1306.6,858 1307,852.4 1306.9,835.7 1307.3,830.1 1308.6,823.4 1311.2,810.7 1312.7,802.1 1328.9,792.1 1338.9,787 1349.5,772.9 1358.7,762.2 1371.4,754.8 1378.8,750.5 1397.9,741.4 1401.3,739.7 1418.8,731.3 1418.8,722.3 1458.8,722.3 1498.7,722.3 1498.7,733.2 1516,745 1537.4,762.2 1538.1,762.9 1538.7,764 1551.6,789.2 1556.9,802.1 1558.9,816 1558.9,816.3 1560.8,830.1 1561.5,842.1 1561.5,846 1562.1,858 1578.7,858 1583.6,858 1583.6,854.6 1583.4,833.4 1583.4,830.1 1583.1,827 1580,803.1 1579.9,802.1 1579.5,801.3 1578.7,799.6 1568.8,772.1 1564.2,762.2 1551.6,749.3 1538.7,733.2 1532.6,728.4 1523.3,722.3 1504.5,716.5 1498.7,713.9 1488.7,712.3 1470.7,710.3 1458.8,708.1 1446,709.5 1429.6,711.5 1418.8,712.7 1412.1,715.6 1393.9,722.3 1383.7,727.2 1378.8,729.5 1361.8,739.3 1358.1,741.5 1338.9,752.6 1331,754.3 1300.6,760.5 1298.9,760.9 1297.5,760.8 1261.4,759.7 1258.9,759.5 1255.2,758.5 1229.6,751.6 1219,748.5 1200.9,744.2 1197.9,743.4 1179,739 1161.8,739.5 1156.3,739.5 1139.1,740 1125.2,742.1 1125,742.1 1111.1,744.1 1099.6,745.8 1094.1,746.5 1083.1,748.1 1083.1,762.2 1083.1,777.7 1091.7,774.5 1104.5,771.6 1111.1,769.5 1115.5,768.5 1137.1,765 1139.1,764.6 1141.3,764.5 1167,762.2 1178.3,761.5 1179,761.5 1179.6,761.6 1182,762.2 1209,772.2 1219,775.4 1237,784.1 1248.9,792.1 1258.9,798.4 1262.1,798.9 1272.6,802.1 1283.3,813.1 1285.3,820.6 1290.4,830.1 1291.6,835.2 1291.6,852.9 1292.4,858 1298.9,858ZM1562.1,267 1561.5,279 1561.5,282.9 1560.8,295 1558.9,308.8 1558.9,309.1 1556.9,322.9 1551.6,335.9 1538.7,361.1 1538.1,362.2 1537.4,362.9 1516,380.1 1498.7,391.8 1498.7,402.8 1458.8,402.8 1418.8,402.8 1418.8,393.7 1401.3,385.3 1397.9,383.7 1378.8,374.5 1371.4,370.3 1358.7,362.9 1349.5,352.2 1338.9,338 1328.9,332.9 1312.7,322.9 1311.2,314.4 1308.6,301.7 1307.3,295 1306.9,289.4 1307,272.6 1306.6,267 1298.9,267 1292.4,267 1291.6,272.2 1291.6,289.8 1290.4,295 1285.3,304.5 1283.3,312 1272.6,322.9 1262.1,326.1 1258.9,326.6 1248.9,332.9 1237,341 1219,349.7 1209,352.9 1182,362.9 1179.6,363.5 1179,363.6 1178.3,363.6 1167,362.9 1141.3,360.6 1139.1,360.5 1137.1,360.1 1115.5,356.6 1111.1,355.5 1104.5,353.4 1091.7,350.6 1083.1,347.3 1083.1,362.9 1083.1,377 1094.1,378.5 1099.6,379.3 1111.1,381 1125,383 1125.2,383 1139.1,385.1 1156.3,385.6 1161.8,385.6 1179,386 1197.9,381.7 1200.9,380.9 1219,376.5 1229.6,373.5 1255.2,366.6 1258.9,365.5 1261.4,365.3 1297.5,364.3 1298.9,364.2 1300.6,364.6 1331,370.7 1338.9,372.5 1358.1,383.6 1361.8,385.7 1378.8,395.6 1383.7,397.9 1393.9,402.8 1412.1,409.5 1418.8,412.3 1429.6,413.5 1446,415.5 1458.8,416.9 1470.7,414.7 1488.7,412.8 1498.7,411.2 1504.5,408.6 1523.3,402.8 1532.6,396.7 1538.7,391.9 1551.6,375.8 1564.2,362.9 1568.8,353 1578.7,325.5 1579.5,323.8 1579.9,322.9 1580,322 1583.1,298.1 1583.4,295 1583.4,291.7 1583.6,270.5 1583.6,267 1578.7,267ZM1418.8,730.2 1418.9,730.2 1425.6,729 1426.8,728.8 1432.3,728.1 1439.2,727.2 1446.8,725.9 1451.9,725.7 1453.8,725.6 1458.8,725.4 1463.7,725.5 1465.7,725.6 1470.8,725.8 1478.5,727.2 1486.3,728.5 1490.7,729.3 1491.6,729.4 1494.1,730.3 1498.1,731.8 1498.7,732.1 1498.7,730.3 1498.7,722.3 1490.7,722.3 1470.8,722.3 1458.8,722.3 1446.8,722.3 1426.8,722.3 1418.8,722.3ZM1498.7,392.9 1498.1,393.2 1494.1,394.8 1491.6,395.6 1490.7,395.8 1486.3,396.6 1478.5,397.9 1470.8,399.3 1465.7,399.4 1463.7,399.5 1458.8,399.7 1453.8,399.5 1451.9,399.3 1446.8,399.1 1439.2,397.8 1432.3,397 1426.8,396.2 1425.6,396 1418.9,394.9 1418.8,394.9 1418.8,402.8 1426.8,402.8 1446.8,402.8 1458.8,402.8 1470.8,402.8 1490.7,402.8 1498.7,402.8 1498.7,394.8Z"/>
<path fill="#ffd000" stroke="#ffd000" stroke-width="0.6" fill-rule="evenodd" d="M1615.7,858 1615.7,856 1615.9,832 1615.9,830.1 1615.7,828.1 1614.3,805.1 1614,802.1 1610,793.5 1603,777.9 1595.1,762.2 1585.2,755.6 1578.7,751 1564.5,736.4 1552.9,722.3 1544.1,716.9 1538.7,714.6 1526.5,710.1 1514.6,706.4 1498.7,699.4 1484,697 1470.3,693.8 1458.8,691.7 1448.2,692.9 1431.1,694.6 1418.8,696 1400.3,703.8 1395.6,705.5 1378.8,712.1 1371.6,715 1354.8,722.3 1344.7,728.1 1338.9,731.4 1327.1,734.1 1313.9,737.2 1298.9,740.4 1282,739.1 1274.9,738.2 1258.9,736.8 1247.6,733.6 1223,726.3 1219,725.2 1216.6,724.6 1205.8,722.3 1183.1,718.2 1179,717.4 1174.2,717.4 1144.1,717.3 1139.1,717.3 1135.9,717.8 1111.9,721.1 1111.1,721.3 1110.5,721.4 1102.1,722.3 1084.9,724.8 1083.1,725 1083.1,748.1 1094.1,746.5 1099.6,745.8 1111.1,744.1 1125,742.1 1125.2,742.1 1139.1,740 1156.3,739.5 1161.8,739.5 1179,739 1197.9,743.4 1200.9,744.2 1219,748.5 1229.6,751.6 1255.2,758.5 1258.9,759.5 1261.4,759.7 1297.5,760.8 1298.9,760.9 1300.6,760.5 1331,754.3 1338.9,752.6 1358.1,741.5 1361.8,739.3 1378.8,729.5 1383.7,727.2 1393.9,722.3 1412.1,715.6 1418.8,712.7 1429.6,711.5 1446,709.5 1458.8,708.1 1470.7,710.3 1488.7,712.3 1498.7,713.9 1504.5,716.5 1523.3,722.3 1532.6,728.4 1538.7,733.2 1551.6,749.3 1564.2,762.2 1568.8,772.1 1578.7,799.6 1579.5,801.3 1579.9,802.1 1580,803.1 1583.1,827 1583.4,830.1 1583.4,833.4 1583.6,854.6 1583.6,858ZM1748.1,858 1743.8,854.4 1738.5,850.5 1729.2,851.5 1698.9,857.8 1698.6,857.8 1698.4,857.9 1698.3,858 1698.6,858 1738.5,858ZM1698.3,267 1698.4,267.1 1698.6,267.2 1698.9,267.3 1729.2,273.5 1738.5,274.6 1743.8,270.7 1748.1,267 1738.5,267 1698.6,267ZM1583.6,267 1583.6,270.5 1583.4,291.7 1583.4,295 1583.1,298.1 1580,322 1579.9,322.9 1579.5,323.8 1578.7,325.5 1568.8,353 1564.2,362.9 1551.6,375.8 1538.7,391.9 1532.6,396.7 1523.3,402.8 1504.5,408.6 1498.7,411.2 1488.7,412.8 1470.7,414.7 1458.8,416.9 1446,415.5 1429.6,413.5 1418.8,412.3 1412.1,409.5 1393.9,402.8 1383.7,397.9 1378.8,395.6 1361.8,385.7 1358.1,383.6 1338.9,372.5 1331,370.7 1300.6,364.6 1298.9,364.2 1297.5,364.3 1261.4,365.3 1258.9,365.5 1255.2,366.6 1229.6,373.5 1219,376.5 1200.9,380.9 1197.9,381.7 1179,386 1161.8,385.6 1156.3,385.6 1139.1,385.1 1125.2,383 1125,383 1111.1,381 1099.6,379.3 1094.1,378.5 1083.1,377 1083.1,400 1084.9,400.3 1102.1,402.8 1110.5,403.7 1111.1,403.8 1111.9,403.9 1135.9,407.2 1139.1,407.8 1144.1,407.8 1174.2,407.6 1179,407.6 1183.1,406.8 1205.8,402.8 1216.6,400.5 1219,399.9 1223,398.7 1247.6,391.4 1258.9,388.2 1274.9,386.9 1282,385.9 1298.9,384.6 1313.9,387.9 1327.1,391 1338.9,393.7 1344.7,397 1354.8,402.8 1371.6,410 1378.8,413 1395.6,419.5 1400.3,421.3 1418.8,429 1431.1,430.4 1448.2,432.2 1458.8,433.3 1470.3,431.2 1484,428 1498.7,425.7 1514.6,418.6 1526.5,414.9 1538.7,410.5 1544.1,408.2 1552.9,402.8 1564.5,388.6 1578.7,374.1 1585.2,369.4 1595.1,362.9 1603,347.2 1610,331.5 1614,322.9 1614.3,319.9 1615.7,297 1615.9,295 1615.9,293.1 1615.7,269.1 1615.7,267Z"/>
<path fill="#ffff00" stroke="#ffff00" stroke-width="0.6" fill-rule="evenodd" d="M1698.3,858 1698.4,857.9 1698.6,857.8 1698.9,857.8 1729.2,851.5 1738.5,850.5 1743.8,854.4 1748.1,858 1778.5,858 1806.5,858 1809.1,858 1808.5,856 1806.5,851.4 1798,838.6 1792,830.1 1786.2,822.4 1778.5,814.2 1769.5,808.4 1758.6,802.1 1744.6,796.1 1738.5,793.3 1728.4,792 1710.3,790.4 1698.6,788.7 1682.1,785.7 1675.8,785 1658.6,781.3 1648.5,772.3 1639.6,762.2 1625.1,755.8 1618.6,753.8 1599.8,741.1 1591.7,735.3 1578.7,726.1 1576.8,724.2 1575.2,722.3 1552.5,708.5 1538.7,702.6 1523.9,697.1 1503.4,687 1498.7,684.9 1496.5,684.5 1487,682.3 1464.9,676.2 1458.8,674.2 1451.8,675.3 1422.5,678.6 1418.8,679.1 1416.6,680.2 1412.1,682.3 1389,692.5 1378.8,696.5 1360.5,704 1354.7,706.5 1338.9,713.1 1331,714.4 1301.2,720 1298.9,720.4 1296.8,720.2 1264.4,716.8 1258.9,716.2 1250.8,714.1 1231.5,709.7 1219,706.1 1199,702.3 1198.9,702.2 1179,698.2 1163.1,698.3 1155.1,698.4 1139.1,698.4 1126.1,700.8 1124.3,701.2 1111.1,703.5 1099.5,705.7 1094.3,706.3 1083.1,708.2 1083.1,722.3 1083.1,725 1084.9,724.8 1102.1,722.3 1110.5,721.4 1111.1,721.3 1111.9,721.1 1135.9,717.8 1139.1,717.3 1144.1,717.3 1174.2,717.4 1179,717.4 1183.1,718.2 1205.8,722.3 1216.6,724.6 1219,725.2 1223,726.3 1247.6,733.6 1258.9,736.8 1274.9,738.2 1282,739.1 1298.9,740.4 1313.9,737.2 1327.1,734.1 1338.9,731.4 1344.7,728.1 1354.8,722.3 1371.6,715 1378.8,712.1 1395.6,705.5 1400.3,703.8 1418.8,696 1431.1,694.6 1448.2,692.9 1458.8,691.7 1470.3,693.8 1484,697 1498.7,699.4 1514.6,706.4 1526.5,710.1 1538.7,714.6 1544.1,716.9 1552.9,722.3 1564.5,736.4 1578.7,751 1585.2,755.6 1595.1,762.2 1603,777.9 1610,793.5 1614,802.1 1614.3,805.1 1615.7,828.1 1615.9,830.1 1615.9,832 1615.7,856 1615.7,858 1618.6,858 1658.6,858ZM1748.1,267 1743.8,270.7 1738.5,274.6 1729.2,273.5 1698.9,267.3 1698.6,267.2 1698.4,267.1 1698.3,267 1658.6,267 1618.6,267 1615.7,267 1615.7,269.1 1615.9,293.1 1615.9,295 1615.7,297 1614.3,319.9 1614,322.9 1610,331.5 1603,347.2 1595.1,362.9 1585.2,369.4 1578.7,374.1 1564.5,388.6 1552.9,402.8 1544.1,408.2 1538.7,410.5 1526.5,414.9 1514.6,418.6 1498.7,425.7 1484,428 1470.3,431.2 1458.8,433.3 1448.2,432.2 1431.1,430.4 1418.8,429 1400.3,421.3 1395.6,419.5 1378.8,413 1371.6,410 1354.8,402.8 1344.7,397 1338.9,393.7 1327.1,391 1313.9,387.9 1298.9,384.6 1282,385.9 1274.9,386.9 1258.9,388.2 1247.6,391.4 1223,398.7 1219,399.9 1216.6,400.5 1205.8,402.8 1183.1,406.8 1179,407.6 1174.2,407.6 1144.1,407.8 1139.1,407.8 1135.9,407.2 1111.9,403.9 1111.1,403.8 1110.5,403.7 1102.1,402.8 1084.9,400.3 1083.1,400 1083.1,402.8 1083.1,416.9 1094.3,418.8 1099.5,419.3 1111.1,421.5 1124.3,423.8 1126.1,424.2 1139.1,426.6 1155.1,426.7 1163.1,426.8 1179,426.9 1198.9,422.8 1199,422.8 1219,418.9 1231.5,415.3 1250.8,411 1258.9,408.8 1264.4,408.2 1296.8,404.9 1298.9,404.6 1301.2,405 1331,410.6 1338.9,411.9 1354.7,418.6 1360.5,421.1 1378.8,428.6 1389,432.5 1412.1,442.7 1416.6,444.9 1418.8,445.9 1422.5,446.5 1451.8,449.7 1458.8,450.8 1464.9,448.8 1487,442.7 1496.5,440.5 1498.7,440.2 1503.4,438.1 1523.9,427.9 1538.7,422.5 1552.5,416.6 1575.2,402.8 1576.8,400.9 1578.7,399 1591.7,389.7 1599.8,384 1618.6,371.3 1625.1,369.3 1639.6,362.9 1648.5,352.7 1658.6,343.8 1675.8,340.1 1682.1,339.3 1698.6,336.3 1710.3,334.6 1728.4,333.1 1738.5,331.7 1744.6,329 1758.6,322.9 1769.5,316.6 1778.5,310.8 1786.2,302.7 1792,295 1798,286.5 1806.5,273.7 1808.5,269.1 1809.1,267 1806.5,267 1778.5,267Z"/>
<path fill="#80ff00" stroke="#80ff00" stroke-width="0.6" fill-rule="evenodd" d="M1834.4,823 1829.9,806.7 1827.7,802.1 1815,789.9 1806.5,783.3 1796.4,776.6 1783.3,769.1 1778.5,766.2 1775.7,765 1769.7,762.2 1746.4,754.3 1738.5,751.8 1726.5,750.2 1712.4,748.3 1698.6,746.4 1681,744.6 1676.8,744 1658.6,742.4 1644,736.8 1629.8,733.5 1618.6,730 1614,726.9 1607.5,722.3 1588.5,712.5 1578.7,709.1 1561.4,699.6 1553,696.7 1538.7,690.6 1532.7,688.4 1520.5,682.3 1508.1,673 1498.7,667.7 1479.2,661.9 1477.8,661.4 1458.8,655.3 1443.5,657.7 1435.6,659.2 1418.8,661.6 1404.7,668.3 1381.9,679.3 1378.8,680.8 1377.7,681.2 1375.3,682.3 1349.2,692.6 1338.9,697 1321.3,699.9 1317.2,700.6 1298.9,703.7 1279.6,701.7 1278.1,701.5 1258.9,699.4 1245.4,695.9 1226.5,689.9 1219,687.7 1214.5,686.8 1193.9,682.3 1182,679.4 1179,678.5 1175.4,678.7 1142.1,679.2 1139.1,679.4 1137.3,679.9 1127.1,682.3 1113.2,685.4 1111.1,685.8 1108.3,686.3 1089.2,691.1 1083.1,692.2 1083.1,708.2 1094.3,706.3 1099.5,705.7 1111.1,703.5 1124.3,701.2 1126.1,700.8 1139.1,698.4 1155.1,698.4 1163.1,698.3 1179,698.2 1198.9,702.2 1199,702.3 1219,706.1 1231.5,709.7 1250.8,714.1 1258.9,716.2 1264.4,716.8 1296.8,720.2 1298.9,720.4 1301.2,720 1331,714.4 1338.9,713.1 1354.7,706.5 1360.5,704 1378.8,696.5 1389,692.5 1412.1,682.3 1416.6,680.2 1418.8,679.1 1422.5,678.6 1451.8,675.3 1458.8,674.2 1464.9,676.2 1487,682.3 1496.5,684.5 1498.7,684.9 1503.4,687 1523.9,697.1 1538.7,702.6 1552.5,708.5 1575.2,722.3 1576.8,724.2 1578.7,726.1 1591.7,735.3 1599.8,741.1 1618.6,753.8 1625.1,755.8 1639.6,762.2 1648.5,772.3 1658.6,781.3 1675.8,785 1682.1,785.7 1698.6,788.7 1710.3,790.4 1728.4,792 1738.5,793.3 1744.6,796.1 1758.6,802.1 1769.5,808.4 1778.5,814.2 1786.2,822.4 1792,830.1 1798,838.6 1806.5,851.4 1808.5,856 1809.1,858 1834.4,858 1834.4,830.1ZM1809.1,267 1808.5,269.1 1806.5,273.7 1798,286.5 1792,295 1786.2,302.7 1778.5,310.8 1769.5,316.6 1758.6,322.9 1744.6,329 1738.5,331.7 1728.4,333.1 1710.3,334.6 1698.6,336.3 1682.1,339.3 1675.8,340.1 1658.6,343.8 1648.5,352.7 1639.6,362.9 1625.1,369.3 1618.6,371.3 1599.8,384 1591.7,389.7 1578.7,399 1576.8,400.9 1575.2,402.8 1552.5,416.6 1538.7,422.5 1523.9,427.9 1503.4,438.1 1498.7,440.2 1496.5,440.5 1487,442.7 1464.9,448.8 1458.8,450.8 1451.8,449.7 1422.5,446.5 1418.8,445.9 1416.6,444.9 1412.1,442.7 1389,432.5 1378.8,428.6 1360.5,421.1 1354.7,418.6 1338.9,411.9 1331,410.6 1301.2,405 1298.9,404.6 1296.8,404.9 1264.4,408.2 1258.9,408.8 1250.8,411 1231.5,415.3 1219,418.9 1199,422.8 1198.9,422.8 1179,426.9 1163.1,426.8 1155.1,426.7 1139.1,426.6 1126.1,424.2 1124.3,423.8 1111.1,421.5 1099.5,419.3 1094.3,418.8 1083.1,416.9 1083.1,432.9 1089.2,434 1108.3,438.8 1111.1,439.3 1113.2,439.7 1127.1,442.7 1137.3,445.2 1139.1,445.6 1142.1,445.8 1175.4,446.3 1179,446.6 1182,445.7 1193.9,442.7 1214.5,438.2 1219,437.4 1226.5,435.2 1245.4,429.2 1258.9,425.7 1278.1,423.6 1279.6,423.4 1298.9,421.3 1317.2,424.5 1321.3,425.1 1338.9,428.1 1349.2,432.4 1375.3,442.7 1377.7,443.8 1378.8,444.3 1381.9,445.8 1404.7,456.8 1418.8,463.5 1435.6,465.9 1443.5,467.4 1458.8,469.8 1477.8,463.7 1479.2,463.2 1498.7,457.3 1508.1,452 1520.5,442.7 1532.7,436.7 1538.7,434.5 1553,428.4 1561.4,425.5 1578.7,416 1588.5,412.6 1607.5,402.8 1614,398.2 1618.6,395 1629.8,391.6 1644,388.2 1658.6,382.7 1676.8,381.1 1681,380.4 1698.6,378.7 1712.4,376.7 1726.5,374.9 1738.5,373.2 1746.4,370.8 1769.7,362.9 1775.7,360.1 1778.5,358.9 1783.3,356 1796.4,348.4 1806.5,341.8 1815,335.2 1827.7,322.9 1829.9,318.4 1834.4,302.1 1834.4,295 1834.4,267Z"/>
<path fill="#00ec00" stroke="#00ec00" stroke-width="0.6" fill-rule="evenodd" d="M1834.4,756.6 1828.6,753.9 1816.2,748.3 1806.5,743.4 1795.1,738.4 1787.3,734.8 1778.5,730.8 1772,728.7 1750.2,722.3 1740.8,720 1738.5,719.4 1735.4,719.2 1705.2,715.6 1698.6,715 1691.7,715.4 1666,714.9 1658.6,715.3 1650.4,714.1 1630.6,710.3 1618.6,708.7 1600.4,700.6 1595.7,699.4 1578.7,693.5 1571.5,689.5 1550.9,682.3 1543.2,677.8 1538.7,675.3 1519.5,661.6 1516.4,660 1498.7,650 1492.9,648.3 1475.8,642.4 1464.9,636.2 1458.8,633.4 1452,635.6 1427.9,642.4 1420.3,643.8 1418.8,644.1 1415.6,645.6 1392.8,656.4 1378.8,663.1 1365.2,668.7 1342,679.2 1338.9,680.6 1337.4,680.8 1329.1,682.3 1302.9,686.4 1298.9,687.1 1294.6,686.6 1259.2,682.6 1258.9,682.6 1258.8,682.5 1258.2,682.3 1229.8,671.6 1219,667.7 1199.1,662.3 1198.8,662.2 1179,656.4 1164.1,657.3 1155,658.3 1139.1,659.2 1125.3,662.6 1124.8,662.8 1111.1,666.1 1101.8,669 1089.9,672.6 1083.1,674.7 1083.1,682.3 1083.1,692.2 1089.2,691.1 1108.3,686.3 1111.1,685.8 1113.2,685.4 1127.1,682.3 1137.3,679.9 1139.1,679.4 1142.1,679.2 1175.4,678.7 1179,678.5 1182,679.4 1193.9,682.3 1214.5,686.8 1219,687.7 1226.5,689.9 1245.4,695.9 1258.9,699.4 1278.1,701.5 1279.6,701.7 1298.9,703.7 1317.2,700.6 1321.3,699.9 1338.9,697 1349.2,692.6 1375.3,682.3 1377.7,681.2 1378.8,680.8 1381.9,679.3 1404.7,668.3 1418.8,661.6 1435.6,659.2 1443.5,657.7 1458.8,655.3 1477.8,661.4 1479.2,661.9 1498.7,667.7 1508.1,673 1520.5,682.3 1532.7,688.4 1538.7,690.6 1553,696.7 1561.4,699.6 1578.7,709.1 1588.5,712.5 1607.5,722.3 1614,726.9 1618.6,730 1629.8,733.5 1644,736.8 1658.6,742.4 1676.8,744 1681,744.6 1698.6,746.4 1712.4,748.3 1726.5,750.2 1738.5,751.8 1746.4,754.3 1769.7,762.2 1775.7,765 1778.5,766.2 1783.3,769.1 1796.4,776.6 1806.5,783.3 1815,789.9 1827.7,802.1 1829.9,806.7 1834.4,823 1834.4,802.1 1834.4,762.2ZM1834.4,302.1 1829.9,318.4 1827.7,322.9 1815,335.2 1806.5,341.8 1796.4,348.4 1783.3,356 1778.5,358.9 1775.7,360.1 1769.7,362.9 1746.4,370.8 1738.5,373.2 1726.5,374.9 1712.4,376.7 1698.6,378.7 1681,380.4 1676.8,381.1 1658.6,382.7 1644,388.2 1629.8,391.6 1618.6,395 1614,398.2 1607.5,402.8 1588.5,412.6 1578.7,416 1561.4,425.5 1553,428.4 1538.7,434.5 1532.7,436.7 1520.5,442.7 1508.1,452 1498.7,457.3 1479.2,463.2 1477.8,463.7 1458.8,469.8 1443.5,467.4 1435.6,465.9 1418.8,463.5 1404.7,456.8 1381.9,445.8 1378.8,444.3 1377.7,443.8 1375.3,442.7 1349.2,432.4 1338.9,428.1 1321.3,425.1 1317.2,424.5 1298.9,421.3 1279.6,423.4 1278.1,423.6 1258.9,425.7 1245.4,429.2 1226.5,435.2 1219,437.4 1214.5,438.2 1193.9,442.7 1182,445.7 1179,446.6 1175.4,446.3 1142.1,445.8 1139.1,445.6 1137.3,445.2 1127.1,442.7 1113.2,439.7 1111.1,439.3 1108.3,438.8 1089.2,434 1083.1,432.9 1083.1,442.7 1083.1,450.4 1089.9,452.5 1101.8,456 1111.1,458.9 1124.8,462.3 1125.3,462.4 1139.1,465.8 1155,466.8 1164.1,467.7 1179,468.7 1198.8,462.9 1199.1,462.8 1219,457.4 1229.8,453.5 1258.2,442.7 1258.8,442.5 1258.9,442.5 1259.2,442.5 1294.6,438.5 1298.9,438 1302.9,438.7 1329.1,442.7 1337.4,444.2 1338.9,444.5 1342,445.8 1365.2,456.4 1378.8,462 1392.8,468.7 1415.6,479.5 1418.8,481 1420.3,481.2 1427.9,482.7 1452,489.4 1458.8,491.7 1464.9,488.8 1475.8,482.7 1492.9,476.8 1498.7,475.1 1516.4,465.1 1519.5,463.4 1538.7,449.7 1543.2,447.2 1550.9,442.7 1571.5,435.5 1578.7,431.6 1595.7,425.7 1600.4,424.5 1618.6,416.4 1630.6,414.8 1650.4,411 1658.6,409.8 1666,410.2 1691.7,409.6 1698.6,410 1705.2,409.5 1735.4,405.9 1738.5,405.6 1740.8,405.1 1750.2,402.8 1772,396.3 1778.5,394.2 1787.3,390.3 1795.1,386.6 1806.5,381.7 1816.2,376.8 1828.6,371.2 1834.4,368.4 1834.4,362.9 1834.4,322.9Z"/>
<path fill="#00ff80" stroke="#00ff80" stroke-width="0.6" fill-rule="evenodd" d="M1834.4,724.6 1833.2,724 1829.8,722.3 1811.9,714.6 1806.5,712.4 1796.9,708.6 1789.9,706 1778.5,701.2 1763.3,697.5 1750.7,694.5 1738.5,691.6 1730,690.8 1705.8,689.6 1698.6,689 1691.5,689.4 1668.6,692.3 1658.6,692.8 1649.4,691.5 1625.8,689.5 1618.6,688.6 1614.3,686.6 1597.8,682.3 1583.7,677.3 1578.7,675.7 1563,666.6 1557.6,663.5 1538.7,653 1532.5,648.6 1520.5,642.4 1508.6,632.5 1498.7,623.8 1484.8,616.4 1463.7,607.4 1458.8,605.1 1454.8,606.5 1431.3,614.9 1418.8,618.8 1404.6,628.2 1385.1,642.4 1380.9,644.4 1378.8,645.4 1373.8,647.4 1352.3,655.8 1338.9,661.6 1320.8,664.3 1316.1,665.2 1298.9,667.9 1281.6,665.1 1276.9,664.4 1258.9,661.3 1245.1,656.2 1226.2,649.7 1219,647.1 1215.3,646.1 1203.8,642.4 1187.2,634.2 1179,630.2 1168.6,632 1145.6,635.8 1139.1,636.9 1136.2,638.3 1125.6,642.4 1113.3,645.5 1111.1,646.1 1107.8,647.1 1090.3,652.7 1083.1,654.9 1083.1,674.7 1089.9,672.6 1101.8,669 1111.1,666.1 1124.8,662.8 1125.3,662.6 1139.1,659.2 1155,658.3 1164.1,657.3 1179,656.4 1198.8,662.2 1199.1,662.3 1219,667.7 1229.8,671.6 1258.2,682.3 1258.8,682.5 1258.9,682.6 1259.2,682.6 1294.6,686.6 1298.9,687.1 1302.9,686.4 1329.1,682.3 1337.4,680.8 1338.9,680.6 1342,679.2 1365.2,668.7 1378.8,663.1 1392.8,656.4 1415.6,645.6 1418.8,644.1 1420.3,643.8 1427.9,642.4 1452,635.6 1458.8,633.4 1464.9,636.2 1475.8,642.4 1492.9,648.3 1498.7,650 1516.4,660 1519.5,661.6 1538.7,675.3 1543.2,677.8 1550.9,682.3 1571.5,689.5 1578.7,693.5 1595.7,699.4 1600.4,700.6 1618.6,708.7 1630.6,710.3 1650.4,714.1 1658.6,715.3 1666,714.9 1691.7,715.4 1698.6,715 1705.2,715.6 1735.4,719.2 1738.5,719.4 1740.8,720 1750.2,722.3 1772,728.7 1778.5,730.8 1787.3,734.8 1795.1,738.4 1806.5,743.4 1816.2,748.3 1828.6,753.9 1834.4,756.6ZM1834.4,368.4 1828.6,371.2 1816.2,376.8 1806.5,381.7 1795.1,386.6 1787.3,390.3 1778.5,394.2 1772,396.3 1750.2,402.8 1740.8,405.1 1738.5,405.6 1735.4,405.9 1705.2,409.5 1698.6,410 1691.7,409.6 1666,410.2 1658.6,409.8 1650.4,411 1630.6,414.8 1618.6,416.4 1600.4,424.5 1595.7,425.7 1578.7,431.6 1571.5,435.5 1550.9,442.7 1543.2,447.2 1538.7,449.7 1519.5,463.4 1516.4,465.1 1498.7,475.1 1492.9,476.8 1475.8,482.7 1464.9,488.8 1458.8,491.7 1452,489.4 1427.9,482.7 1420.3,481.2 1418.8,481 1415.6,479.5 1392.8,468.7 1378.8,462 1365.2,456.4 1342,445.8 1338.9,444.5 1337.4,444.2 1329.1,442.7 1302.9,438.7 1298.9,438 1294.6,438.5 1259.2,442.5 1258.9,442.5 1258.8,442.5 1258.2,442.7 1229.8,453.5 1219,457.4 1199.1,462.8 1198.8,462.9 1179,468.7 1164.1,467.7 1155,466.8 1139.1,465.8 1125.3,462.4 1124.8,462.3 1111.1,458.9 1101.8,456 1089.9,452.5 1083.1,450.4 1083.1,470.2 1090.3,472.4 1107.8,478 1111.1,479 1113.3,479.5 1125.6,482.7 1136.2,486.8 1139.1,488.1 1145.6,489.3 1168.6,493.1 1179,494.8 1187.2,490.9 1203.8,482.7 1215.3,479 1219,478 1226.2,475.4 1245.1,468.8 1258.9,463.7 1276.9,460.7 1281.6,460 1298.9,457.2 1316.1,459.9 1320.8,460.8 1338.9,463.4 1352.3,469.3 1373.8,477.6 1378.8,479.7 1380.9,480.7 1385.1,482.7 1404.6,496.9 1418.8,506.3 1431.3,510.1 1454.8,518.6 1458.8,519.9 1463.7,517.6 1484.8,508.7 1498.7,501.2 1508.6,492.6 1520.5,482.7 1532.5,476.5 1538.7,472 1557.6,461.6 1563,458.4 1578.7,449.4 1583.7,447.7 1597.8,442.7 1614.3,438.4 1618.6,436.5 1625.8,435.6 1649.4,433.6 1658.6,432.2 1668.6,432.7 1691.5,435.6 1698.6,436.1 1705.8,435.5 1730,434.2 1738.5,433.5 1750.7,430.5 1763.3,427.5 1778.5,423.8 1789.9,419.1 1796.9,416.5 1806.5,412.7 1811.9,410.5 1829.8,402.8 1833.2,401 1834.4,400.4Z"/>
<path fill="#00ffff" stroke="#00ffff" stroke-width="0.6" fill-rule="evenodd" d="M1834.4,696.9 1826.6,693.6 1809.6,686.8 1806.5,685.5 1804.7,684.8 1798.9,682.3 1783.9,674.6 1778.5,672 1764.2,668 1755.3,665.6 1738.5,660.8 1720,660.9 1717.3,661.1 1698.6,661.2 1680.6,664.4 1675.8,665.1 1658.6,668.1 1643.5,667.3 1634.6,666.4 1618.6,665.6 1601.3,659.7 1593.6,657.3 1578.7,652.4 1572.3,648.8 1560.6,642.4 1548.4,632.7 1538.7,626.1 1525.9,615.3 1511.2,602.5 1507.4,593.8 1498.7,576.9 1490.9,570.3 1475.9,562.5 1490.9,554.7 1498.7,548.2 1507.4,531.3 1511.2,522.6 1525.9,509.8 1538.7,499 1548.4,492.4 1560.6,482.7 1572.3,476.3 1578.7,472.6 1593.6,467.8 1601.3,465.3 1618.6,459.5 1634.6,458.7 1643.5,457.8 1658.6,457 1675.8,459.9 1680.6,460.6 1698.6,463.9 1717.3,464 1720,464.2 1738.5,464.2 1755.3,459.5 1764.2,457 1778.5,453 1783.9,450.5 1798.9,442.7 1804.7,440.2 1806.5,439.5 1809.6,438.2 1826.6,431.5 1834.4,428.2 1834.4,402.8 1834.4,400.4 1833.2,401 1829.8,402.8 1811.9,410.5 1806.5,412.7 1796.9,416.5 1789.9,419.1 1778.5,423.8 1763.3,427.5 1750.7,430.5 1738.5,433.5 1730,434.2 1705.8,435.5 1698.6,436.1 1691.5,435.6 1668.6,432.7 1658.6,432.2 1649.4,433.6 1625.8,435.6 1618.6,436.5 1614.3,438.4 1597.8,442.7 1583.7,447.7 1578.7,449.4 1563,458.4 1557.6,461.6 1538.7,472 1532.5,476.5 1520.5,482.7 1508.6,492.6 1498.7,501.2 1484.8,508.7 1463.7,517.6 1458.8,519.9 1454.8,518.6 1431.3,510.1 1418.8,506.3 1404.6,496.9 1385.1,482.7 1380.9,480.7 1378.8,479.7 1373.8,477.6 1352.3,469.3 1338.9,463.4 1320.8,460.8 1316.1,459.9 1298.9,457.2 1281.6,460 1276.9,460.7 1258.9,463.7 1245.1,468.8 1226.2,475.4 1219,478 1215.3,479 1203.8,482.7 1187.2,490.9 1179,494.8 1168.6,493.1 1145.6,489.3 1139.1,488.1 1136.2,486.8 1125.6,482.7 1113.3,479.5 1111.1,479 1107.8,478 1090.3,472.4 1083.1,470.2 1083.1,482.7 1083.1,494 1095.2,499.9 1098,501.3 1111.1,507.6 1119.1,511.1 1137.2,520 1139.1,520.8 1140.6,521.1 1149,522.6 1169.3,532.3 1179,536.5 1185.5,529.1 1190.4,522.6 1209.8,513.4 1219,508.8 1235.4,499.1 1250.9,490.7 1258.9,486.2 1261.7,485.4 1270.9,482.7 1294.4,478.1 1298.9,477.4 1303.5,478.1 1338.5,482.3 1338.9,482.4 1339.1,482.5 1339.6,482.7 1363.8,497.7 1378.8,506.4 1388.3,513.2 1403,522.6 1408.5,532.9 1418.8,550.8 1425.4,556 1439.4,562.5 1425.4,569.1 1418.8,574.3 1408.5,592.2 1403,602.5 1388.3,611.9 1378.8,618.7 1363.8,627.4 1339.6,642.4 1339.1,642.6 1338.9,642.7 1338.5,642.7 1303.5,647 1298.9,647.7 1294.4,647 1270.9,642.4 1261.7,639.7 1258.9,638.9 1250.9,634.4 1235.4,626 1219,616.2 1209.8,611.7 1190.4,602.5 1185.5,596 1179,588.5 1169.3,592.7 1149,602.5 1140.6,604 1139.1,604.2 1137.2,605.1 1119.1,614 1111.1,617.4 1098,623.8 1095.2,625.2 1083.1,631.1 1083.1,642.4 1083.1,654.9 1090.3,652.7 1107.8,647.1 1111.1,646.1 1113.3,645.5 1125.6,642.4 1136.2,638.3 1139.1,636.9 1145.6,635.8 1168.6,632 1179,630.2 1187.2,634.2 1203.8,642.4 1215.3,646.1 1219,647.1 1226.2,649.7 1245.1,656.2 1258.9,661.3 1276.9,664.4 1281.6,665.1 1298.9,667.9 1316.1,665.2 1320.8,664.3 1338.9,661.6 1352.3,655.8 1373.8,647.4 1378.8,645.4 1380.9,644.4 1385.1,642.4 1404.6,628.2 1418.8,618.8 1431.3,614.9 1454.8,606.5 1458.8,605.1 1463.7,607.4 1484.8,616.4 1498.7,623.8 1508.6,632.5 1520.5,642.4 1532.5,648.6 1538.7,653 1557.6,663.5 1563,666.6 1578.7,675.7 1583.7,677.3 1597.8,682.3 1614.3,686.6 1618.6,688.6 1625.8,689.5 1649.4,691.5 1658.6,692.8 1668.6,692.3 1691.5,689.4 1698.6,689 1705.8,689.6 1730,690.8 1738.5,691.6 1750.7,694.5 1763.3,697.5 1778.5,701.2 1789.9,706 1796.9,708.6 1806.5,712.4 1811.9,714.6 1829.8,722.3 1833.2,724 1834.4,724.6 1834.4,722.3Z"/>
<path fill="#00a0ff" stroke="#00a0ff" stroke-width="0.6" fill-rule="evenodd" d="M1834.4,667.3 1821.5,660.8 1818.1,659 1806.5,653 1801,650.2 1783.4,642.4 1780.1,640.1 1778.5,639 1772.6,636.5 1753.1,627.9 1738.5,621.9 1720.6,624.5 1716,625 1698.6,627.3 1687.4,631.3 1661.4,639.6 1658.6,640.6 1656.8,640.6 1620.3,640.7 1618.6,640.8 1615.6,639.3 1592.8,628.3 1578.7,622.1 1567.6,613.5 1551,602.5 1546.8,594.4 1538.7,579.8 1533.7,567.6 1531.2,562.5 1533.7,557.5 1538.7,545.3 1546.8,530.6 1551,522.6 1567.6,511.6 1578.7,502.9 1592.8,496.8 1615.6,485.7 1618.6,484.3 1620.3,484.4 1656.8,484.4 1658.6,484.5 1661.4,485.4 1687.4,493.8 1698.6,497.8 1716,500.1 1720.6,500.6 1738.5,503.2 1753.1,497.2 1772.6,488.6 1778.5,486 1780.1,484.9 1783.4,482.7 1801,474.8 1806.5,472.1 1818.1,466.1 1821.5,464.2 1834.4,457.8 1834.4,442.7 1834.4,428.2 1826.6,431.5 1809.6,438.2 1806.5,439.5 1804.7,440.2 1798.9,442.7 1783.9,450.5 1778.5,453 1764.2,457 1755.3,459.5 1738.5,464.2 1720,464.2 1717.3,464 1698.6,463.9 1680.6,460.6 1675.8,459.9 1658.6,457 1643.5,457.8 1634.6,458.7 1618.6,459.5 1601.3,465.3 1593.6,467.8 1578.7,472.6 1572.3,476.3 1560.6,482.7 1548.4,492.4 1538.7,499 1525.9,509.8 1511.2,522.6 1507.4,531.3 1498.7,548.2 1490.9,554.7 1475.9,562.5 1490.9,570.3 1498.7,576.9 1507.4,593.8 1511.2,602.5 1525.9,615.3 1538.7,626.1 1548.4,632.7 1560.6,642.4 1572.3,648.8 1578.7,652.4 1593.6,657.3 1601.3,659.7 1618.6,665.6 1634.6,666.4 1643.5,667.3 1658.6,668.1 1675.8,665.1 1680.6,664.4 1698.6,661.2 1717.3,661.1 1720,660.9 1738.5,660.8 1755.3,665.6 1764.2,668 1778.5,672 1783.9,674.6 1798.9,682.3 1804.7,684.8 1806.5,685.5 1809.6,686.8 1826.6,693.6 1834.4,696.9 1834.4,682.3ZM1083.1,529.9 1093.5,547.7 1103.5,562.5 1093.5,577.4 1083.1,595.2 1083.1,602.5 1083.1,631.1 1095.2,625.2 1098,623.8 1111.1,617.4 1119.1,614 1137.2,605.1 1139.1,604.2 1140.6,604 1149,602.5 1169.3,592.7 1179,588.5 1185.5,596 1190.4,602.5 1209.8,611.7 1219,616.2 1235.4,626 1250.9,634.4 1258.9,638.9 1261.7,639.7 1270.9,642.4 1294.4,647 1298.9,647.7 1303.5,647 1338.5,642.7 1338.9,642.7 1339.1,642.6 1339.6,642.4 1363.8,627.4 1378.8,618.7 1388.3,611.9 1403,602.5 1408.5,592.2 1418.8,574.3 1425.4,569.1 1439.4,562.5 1425.4,556 1418.8,550.8 1408.5,532.9 1403,522.6 1388.3,513.2 1378.8,506.4 1363.8,497.7 1339.6,482.7 1339.1,482.5 1338.9,482.4 1338.5,482.3 1303.5,478.1 1298.9,477.4 1294.4,478.1 1270.9,482.7 1261.7,485.4 1258.9,486.2 1250.9,490.7 1235.4,499.1 1219,508.8 1209.8,513.4 1190.4,522.6 1185.5,529.1 1179,536.5 1169.3,532.3 1149,522.6 1140.6,521.1 1139.1,520.8 1137.2,520 1119.1,511.1 1111.1,507.6 1098,501.3 1095.2,499.9 1083.1,494 1083.1,522.6ZM1255.9,605.5 1251,602.5 1241.5,585.1 1239.7,581.8 1229.7,562.5 1239.7,543.3 1241.5,540 1251,522.6 1255.9,519.6 1258.9,517.9 1265.7,515.8 1285.8,509.5 1298.9,505.5 1313.4,508.1 1326.5,510.2 1338.9,512.4 1345.2,516.3 1356.5,522.6 1364.7,536.7 1378.8,558.1 1380.4,561 1381.2,562.5 1380.4,564.1 1378.8,567 1364.7,588.3 1356.5,602.5 1345.2,608.8 1338.9,612.7 1326.5,614.8 1313.4,617 1298.9,619.6 1285.8,615.6 1265.7,609.2 1258.9,607.2Z"/>
<path fill="#0050ff" stroke="#0050ff" stroke-width="0.6" fill-rule="evenodd" d="M1834.4,631.6 1821.4,621 1816.7,617 1806.5,608.5 1803.6,606.6 1797.8,602.5 1790.3,585.6 1783.7,569.9 1780.5,562.5 1783.7,555.1 1790.3,539.5 1797.8,522.6 1803.6,518.5 1806.5,516.5 1816.7,508.1 1821.4,504 1834.4,493.5 1834.4,482.7 1834.4,457.8 1821.5,464.2 1818.1,466.1 1806.5,472.1 1801,474.8 1783.4,482.7 1780.1,484.9 1778.5,486 1772.6,488.6 1753.1,497.2 1738.5,503.2 1720.6,500.6 1716,500.1 1698.6,497.8 1687.4,493.8 1661.4,485.4 1658.6,484.5 1656.8,484.4 1620.3,484.4 1618.6,484.3 1615.6,485.7 1592.8,496.8 1578.7,502.9 1567.6,511.6 1551,522.6 1546.8,530.6 1538.7,545.3 1533.7,557.5 1531.2,562.5 1533.7,567.6 1538.7,579.8 1546.8,594.4 1551,602.5 1567.6,613.5 1578.7,622.1 1592.8,628.3 1615.6,639.3 1618.6,640.8 1620.3,640.7 1656.8,640.6 1658.6,640.6 1661.4,639.6 1687.4,631.3 1698.6,627.3 1716,625 1720.6,624.5 1738.5,621.9 1753.1,627.9 1772.6,636.5 1778.5,639 1780.1,640.1 1783.4,642.4 1801,650.2 1806.5,653 1818.1,659 1821.5,660.8 1834.4,667.3 1834.4,642.4ZM1083.1,595.2 1093.5,577.4 1103.5,562.5 1093.5,547.7 1083.1,529.9 1083.1,562.5ZM1258.9,607.2 1265.7,609.2 1285.8,615.6 1298.9,619.6 1313.4,617 1326.5,614.8 1338.9,612.7 1345.2,608.8 1356.5,602.5 1364.7,588.3 1378.8,567 1380.4,564.1 1381.2,562.5 1380.4,561 1378.8,558.1 1364.7,536.7 1356.5,522.6 1345.2,516.3 1338.9,512.4 1326.5,510.2 1313.4,508.1 1298.9,505.5 1285.8,509.5 1265.7,515.8 1258.9,517.9 1255.9,519.6 1251,522.6 1241.5,540 1239.7,543.3 1229.7,562.5 1239.7,581.8 1241.5,585.1 1251,602.5 1255.9,605.5ZM1600.7,580.5 1583.6,562.5 1600.7,544.6 1618.6,522.9 1619.1,523.1 1650,531.2 1658.6,534 1671.8,549.3 1682.1,562.5 1671.8,575.7 1658.6,591.1 1650,593.8 1619.1,602 1618.6,602.1Z"/>
<path fill="#0000ff" stroke="#0000ff" stroke-width="0.6" fill-rule="evenodd" d="M1834.4,493.5 1821.4,504 1816.7,508.1 1806.5,516.5 1803.6,518.5 1797.8,522.6 1790.3,539.5 1783.7,555.1 1780.5,562.5 1783.7,569.9 1790.3,585.6 1797.8,602.5 1803.6,606.6 1806.5,608.5 1816.7,617 1821.4,621 1834.4,631.6 1834.4,602.5 1834.4,562.5 1834.4,522.6ZM1618.6,602.1 1619.1,602 1650,593.8 1658.6,591.1 1671.8,575.7 1682.1,562.5 1671.8,549.3 1658.6,534 1650,531.2 1619.1,523.1 1618.6,522.9 1600.7,544.6 1583.6,562.5 1600.7,580.5Z"/>
<path d="M1083.1,267V858M1111.1,267V858M1139.1,267V858M1179,267V858M1219,267V858M1258.9,267V858M1298.9,267V858M1338.9,267V858M1378.8,267V858M1418.8,267V858M1458.8,267V858M1498.7,267V858M1538.7,267V858M1578.7,267V858M1618.6,267V858M1658.6,267V858M1698.6,267V858M1738.5,267V858M1778.5,267V858M1806.5,267V858M1834.4,267V858M1083.1,858H1834.4M1083.1,830.1H1834.4M1083.1,802.1H1834.4M1083.1,762.2H1834.4M1083.1,722.3H1834.4M1083.1,682.3H1834.4M1083.1,642.4H1834.4M1083.1,602.5H1834.4M1083.1,562.5H1834.4M1083.1,522.6H1834.4M1083.1,482.7H1834.4M1083.1,442.7H1834.4M1083.1,402.8H1834.4M1083.1,362.9H1834.4M1083.1,322.9H1834.4M1083.1,295H1834.4M1083.1,267H1834.4M1426.8,722.3V802.1M1446.8,722.3V802.1M1470.8,722.3V802.1M1490.7,722.3V802.1M1418.8,794.2H1498.7M1418.8,774.2H1498.7M1418.8,750.2H1498.7M1418.8,730.3H1498.7M1426.8,322.9V402.8M1446.8,322.9V402.8M1470.8,322.9V402.8M1490.7,322.9V402.8M1418.8,394.8H1498.7M1418.8,374.8H1498.7M1418.8,350.9H1498.7M1418.8,330.9H1498.7" fill="none" stroke="#800000" stroke-width="2" stroke-linecap="square" shape-rendering="crispEdges"/>
<path d="M1083.1,846V858.05H1097" fill="none" stroke="#00e0f0" stroke-width="1.3"/>
<path d="M1083.1,842.500L1081,846.500H1085.200ZM1099,858.050L1095,856V860.100Z" fill="#00e0f0"/>
<text x="1083.1" y="841.800" text-anchor="middle" font-family="Liberation Sans, sans-serif" font-size="12.500" font-weight="bold" fill="#00e0f0">Y</text>
<text x="1099.300" y="861.700" font-family="Liberation Sans, sans-serif" font-size="12.500" font-weight="bold" fill="#00e0f0">X</text>
<rect x="1888.6" y="238.20" width="21.3" height="42.3" fill="#0000ff"/>
<rect x="1888.6" y="280.28" width="21.3" height="42.3" fill="#0050ff"/>
<rect x="1888.6" y="322.36" width="21.3" height="42.3" fill="#00a0ff"/>
<rect x="1888.6" y="364.44" width="21.3" height="42.3" fill="#00ffff"/>
<rect x="1888.6" y="406.52" width="21.3" height="42.3" fill="#00ff80"/>
<rect x="1888.6" y="448.60" width="21.3" height="42.3" fill="#00ec00"/>
<rect x="1888.6" y="490.68" width="21.3" height="42.3" fill="#80ff00"/>
<rect x="1888.6" y="532.76" width="21.3" height="42.3" fill="#ffff00"/>
<rect x="1888.6" y="574.84" width="21.3" height="42.3" fill="#ffd000"/>
<rect x="1888.6" y="616.92" width="21.3" height="42.3" fill="#ffa500"/>
<rect x="1888.6" y="659.00" width="21.3" height="42.3" fill="#ff8000"/>
<rect x="1888.6" y="701.08" width="21.3" height="42.3" fill="#ff4000"/>
<rect x="1888.6" y="743.16" width="21.3" height="42.3" fill="#ff0000"/>
<rect x="1888.6" y="785.24" width="21.3" height="42.3" fill="#e00060"/>
<rect x="1888.6" y="827.32" width="21.3" height="42.3" fill="#cc00cc"/>
</svg>
<div class="lg" style="top:272.7px">-1.4</div>
<div class="lg" style="top:314.8px">-1.68</div>
<div class="lg" style="top:356.9px">-1.96</div>
<div class="lg" style="top:398.9px">-2.24</div>
<div class="lg" style="top:441.0px">-2.52</div>
<div class="lg" style="top:483.1px">-2.8</div>
<div class="lg" style="top:525.2px">-3.08</div>
<div class="lg" style="top:567.3px">-3.36</div>
<div class="lg" style="top:609.3px">-3.64</div>
<div class="lg" style="top:651.4px">-3.92</div>
<div class="lg" style="top:693.5px">-4.2</div>
<div class="lg" style="top:735.6px">-4.48</div>
<div class="lg" style="top:777.7px">-4.76</div>
<div class="lg" style="top:819.7px">-5.04</div>

<!-- ===== Figure 1 window ===== -->
<div id="figwin" class="abs">
 <div id="figtitle" class="abs"></div>
 <div class="t" style="left:29px;top:9px;font-size:12.2px;letter-spacing:-0.3px;color:#8c8c8c">Figure 1</div>
 <svg class="abs" style="left:0;top:0" width="60" height="30" viewBox="7 157 60 30">
<circle cx="22.500" cy="171.500" r="7.300" fill="#fff" stroke="#5a5a5a" stroke-width="1" stroke-dasharray="3.2 2.4"/>
<path d="M22.500,171.500L19.300,165.300L21.300,164.800Z" fill="#e8591a"/>
<path d="M22.500,171.500L17,170.300L17.200,172.800Z" fill="#f0b400"/>
<path d="M22.500,171.500L24.800,167.200L25.900,168Z" fill="#8cc63f"/>
<path d="M22.500,171.500L20.500,175.200L21.600,175.800Z" fill="#2ca02c"/>
<path d="M22.500,171.500L27.800,177L26.800,177.800Z" fill="#e8591a"/>
<path d="M19.500,168.500L25.500,174.500M25,169L20,174" stroke="#333" stroke-width=".7"/>
</svg>

 <div class="abs" style="left:908px;top:14px;width:10px;height:1px;background:#9a9a9a"></div>
 <div class="abs" style="left:0;top:30px;width:1027px;height:730px;background:#fff">
<svg width="1027" height="730" viewBox="0 0 739.44 525.6" style="position:absolute;left:0;top:0">
<defs>
<style type="text/css">#figure_1 *{stroke-linejoin: round; stroke-linecap: butt} #figure_1 path{shape-rendering:crispEdges} #PathCollection_1 path,#PathCollection_2 path{shape-rendering:auto}</style>
</defs>
<g id="figure_1">
<g id="patch_1">
<path d="M 0 525.6 L 739.4 525.6 L 739.4 0 L 0 0 z" style="fill: #ffffff"/>
</g>
<g id="axes_1">
<g id="patch_2">
<path d="M 43.6 480.6 L 596.5 480.6 L 596.5 47.2 L 43.6 47.2 z" style="fill: #ffffff"/>
</g>
<g id="PathCollection_1">
<defs>
<path id="mac9bf0a3c5" d="M 0 2.5 C 0.7 2.5 1.3 2.2 1.8 1.8 C 2.2 1.3 2.5 0.7 2.5 0 C 2.5 -0.7 2.2 -1.3 1.8 -1.8 C 1.3 -2.2 0.7 -2.5 0 -2.5 C -0.7 -2.5 -1.3 -2.2 -1.8 -1.8 C -2.2 -1.3 -2.5 -0.7 -2.5 0 C -2.5 0.7 -2.2 1.3 -1.8 1.8 C -1.3 2.2 -0.7 2.5 0 2.5 z" style="stroke: #bf00bf"/>
</defs>
<g>
<use href="#mac9bf0a3c5" x="319.68" y="454.46" style="fill: #bf00bf; stroke: #bf00bf"/>
</g>
</g>
<g id="PathCollection_2">
<defs>
<path id="m86cee3a490" d="M 0 2.5 C 0.7 2.5 1.3 2.2 1.8 1.8 C 2.2 1.3 2.5 0.7 2.5 0 C 2.5 -0.7 2.2 -1.3 1.8 -1.8 C 1.3 -2.2 0.7 -2.5 0 -2.5 C -0.7 -2.5 -1.3 -2.2 -1.8 -1.8 C -2.2 -1.3 -2.5 -0.7 -2.5 0 C -2.5 0.7 -2.2 1.3 -1.8 1.8 C -1.3 2.2 -0.7 2.5 0 2.5 z" style="stroke: #ff0000"/>
</defs>
<g>
<use href="#m86cee3a490" x="569.52" y="263.59" style="fill: #ff0000; stroke: #ff0000"/>
</g>
</g>
<g id="QuadContourSet_1">
<path d="M 309 454.5 L 314.4 454.5 L 319.7 454.5 L 325 454.5 L 330.2 454.5 L 325.4 449.3 L 325 449 L 319.7 446.9 L 314.4 447.3 L 310.6 449.3 L 309 450.3 L 305.3 454.5 z M 314.4 79.8 L 319.7 80.2 L 325 78.2 L 325.4 77.9 L 330.2 72.7 L 325 72.7 L 319.7 72.7 L 314.4 72.7 L 309 72.7 L 305.3 72.7 L 309 76.9 L 310.6 77.9 z" clip-path="url(#p965ad97212)" style="fill: #ff00c7; fill-opacity: 0.9"/>
<path d="M 287.8 454.5 L 293.1 454.5 L 298.4 454.5 L 303.7 454.5 L 305.3 454.5 L 309 450.3 L 310.6 449.3 L 314.4 447.3 L 319.7 446.9 L 325 449 L 325.4 449.3 L 330.2 454.5 L 330.3 454.5 L 335.6 454.5 L 340.9 454.5 L 346.3 454.5 L 348.2 454.5 L 347.3 449.3 L 346.3 444.7 L 346.1 444.1 L 344.6 439 L 342.9 433.8 L 340.9 428.8 L 340.9 428.7 L 337.4 423.5 L 335.6 421.7 L 330.3 419.4 L 325 418.9 L 319.7 419 L 314.4 418.8 L 309 418.9 L 303.7 419.7 L 298.4 422 L 296.9 423.5 L 293.5 428.7 L 293.1 429.4 L 291.4 433.8 L 289.5 439 L 287.9 444.1 L 287.8 444.4 L 286.5 449.3 L 285.2 454.5 z M 298.4 105.1 L 303.7 107.4 L 309 108.3 L 314.4 108.4 L 319.7 108.1 L 325 108.3 L 330.3 107.8 L 335.6 105.5 L 337.4 103.7 L 340.9 98.5 L 340.9 98.4 L 342.9 93.3 L 344.6 88.2 L 346.1 83 L 346.3 82.4 L 347.3 77.9 L 348.2 72.7 L 346.3 72.7 L 340.9 72.7 L 335.6 72.7 L 330.3 72.7 L 330.2 72.7 L 325.4 77.9 L 325 78.2 L 319.7 80.2 L 314.4 79.8 L 310.6 77.9 L 309 76.9 L 305.3 72.7 L 303.7 72.7 L 298.4 72.7 L 293.1 72.7 L 287.8 72.7 L 285.2 72.7 L 286.5 77.9 L 287.8 82.8 L 287.9 83 L 289.5 88.2 L 291.4 93.3 L 293.1 97.7 L 293.5 98.5 L 296.9 103.7 z" clip-path="url(#p965ad97212)" style="fill: #ff0050; fill-opacity: 0.9"/>
<path d="M 101.7 454.5 L 107.1 454.5 L 112.4 454.5 L 117.7 454.5 L 123 454.5 L 128.3 454.5 L 133.6 454.5 L 138.9 454.5 L 144.3 454.5 L 149.6 454.5 L 151.1 454.5 L 149.6 451.8 L 147.6 449.3 L 144.3 446 L 141.6 444.1 L 138.9 442.5 L 133.6 440.3 L 128.3 439.2 L 123 439.1 L 117.7 440.3 L 112.4 442.9 L 110.7 444.1 L 107.1 447.2 L 104.8 449.3 L 101.7 452.4 L 99.9 454.5 z M 271.8 454.5 L 277.2 454.5 L 282.5 454.5 L 285.2 454.5 L 286.5 449.3 L 287.8 444.4 L 287.9 444.1 L 289.5 439 L 291.4 433.8 L 293.1 429.4 L 293.5 428.7 L 296.9 423.5 L 298.4 422 L 303.7 419.7 L 309 418.9 L 314.4 418.8 L 319.7 419 L 325 418.9 L 330.3 419.4 L 335.6 421.7 L 337.4 423.5 L 340.9 428.7 L 340.9 428.8 L 342.9 433.8 L 344.6 439 L 346.1 444.1 L 346.3 444.7 L 347.3 449.3 L 348.2 454.5 L 351.6 454.5 L 356.9 454.5 L 362.2 454.5 L 362.4 454.5 L 362.2 453 L 361.7 449.3 L 360.8 444.1 L 359.9 439 L 358.9 433.8 L 357.8 428.7 L 356.9 424.1 L 356.8 423.5 L 355.2 418.4 L 352.5 413.2 L 351.6 412 L 348.4 408 L 346.3 405.8 L 342.2 402.9 L 340.9 402.1 L 335.6 400.5 L 330.3 399.4 L 326.9 397.7 L 325 396.8 L 319.7 393.9 L 314.4 395.1 L 309 397.3 L 307.6 397.7 L 303.7 398.8 L 298.4 399.5 L 293.1 400.3 L 287.8 401.9 L 286 402.9 L 282.5 405.7 L 280.3 408 L 277.2 413.2 L 277.2 413.4 L 275.2 418.4 L 273.6 423.5 L 272.3 428.7 L 271.8 431 L 271.3 433.8 L 270.5 439 L 269.9 444.1 L 269.5 449.3 L 269 454.5 z M 309 129.8 L 314.4 132.1 L 319.7 133.2 L 325 130.4 L 326.9 129.5 L 330.3 127.8 L 335.6 126.7 L 340.9 125.1 L 342.2 124.3 L 346.3 121.4 L 348.4 119.1 L 351.6 115.2 L 352.5 114 L 355.2 108.8 L 356.8 103.7 L 356.9 103 L 357.8 98.5 L 358.9 93.3 L 359.9 88.2 L 360.8 83 L 361.7 77.9 L 362.2 74.2 L 362.4 72.7 L 362.2 72.7 L 356.9 72.7 L 351.6 72.7 L 348.2 72.7 L 347.3 77.9 L 346.3 82.4 L 346.1 83 L 344.6 88.2 L 342.9 93.3 L 340.9 98.4 L 340.9 98.5 L 337.4 103.7 L 335.6 105.5 L 330.3 107.8 L 325 108.3 L 319.7 108.1 L 314.4 108.4 L 309 108.3 L 303.7 107.4 L 298.4 105.1 L 296.9 103.7 L 293.5 98.5 L 293.1 97.7 L 291.4 93.3 L 289.5 88.2 L 287.9 83 L 287.8 82.8 L 286.5 77.9 L 285.2 72.7 L 282.5 72.7 L 277.2 72.7 L 271.8 72.7 L 269 72.7 L 269.5 77.9 L 269.9 83 L 270.5 88.2 L 271.3 93.3 L 271.8 96.2 L 272.3 98.5 L 273.6 103.7 L 275.2 108.8 L 277.2 113.8 L 277.2 114 L 280.3 119.1 L 282.5 121.4 L 286 124.3 L 287.8 125.3 L 293.1 126.8 L 298.4 127.7 L 303.7 128.4 L 307.6 129.5 z M 112.4 84.3 L 117.7 86.9 L 123 88.1 L 128.3 88 L 133.6 86.8 L 138.9 84.7 L 141.6 83 L 144.3 81.1 L 147.6 77.9 L 149.6 75.3 L 151.1 72.7 L 149.6 72.7 L 144.3 72.7 L 138.9 72.7 L 133.6 72.7 L 128.3 72.7 L 123 72.7 L 117.7 72.7 L 112.4 72.7 L 107.1 72.7 L 101.7 72.7 L 99.9 72.7 L 101.7 74.7 L 104.8 77.9 L 107.1 80 L 110.7 83 z" clip-path="url(#p965ad97212)" style="fill: #ff1400; fill-opacity: 0.9"/>
<path d="M 75.2 454.5 L 80.5 454.5 L 85.8 454.5 L 91.1 454.5 L 96.4 454.5 L 99.9 454.5 L 101.7 452.4 L 104.8 449.3 L 107.1 447.2 L 110.7 444.1 L 112.4 442.9 L 117.7 440.3 L 123 439.1 L 128.3 439.2 L 133.6 440.3 L 138.9 442.5 L 141.6 444.1 L 144.3 446 L 147.6 449.3 L 149.6 451.8 L 151.1 454.5 L 154.9 454.5 L 160.2 454.5 L 165.5 454.5 L 170.8 454.5 L 175.4 454.5 L 174.1 449.3 L 172.8 444.1 L 171.1 439 L 170.8 438.2 L 169 433.8 L 166.1 428.7 L 165.5 427.9 L 161.4 423.5 L 160.2 422.6 L 154.9 419.4 L 152 418.4 L 149.6 417.6 L 144.3 416.5 L 138.9 415.3 L 133.6 413.8 L 131.6 413.2 L 128.3 412.2 L 123 411.1 L 117.7 410.8 L 112.4 411.4 L 107.1 412.6 L 104.3 413.2 L 101.7 413.9 L 96.4 415.5 L 91.1 417.8 L 90 418.4 L 85.8 421.6 L 83.5 423.5 L 80.5 426.7 L 78.6 428.7 L 75.2 432.7 L 74.1 433.8 L 69.8 438.4 L 69.8 439 L 69.8 444.1 L 69.8 449.3 L 69.8 454.5 z M 255.9 454.5 L 261.2 454.5 L 266.5 454.5 L 269 454.5 L 269.5 449.3 L 269.9 444.1 L 270.5 439 L 271.3 433.8 L 271.8 431 L 272.3 428.7 L 273.6 423.5 L 275.2 418.4 L 277.2 413.4 L 277.2 413.2 L 280.3 408 L 282.5 405.7 L 286 402.9 L 287.8 401.9 L 293.1 400.3 L 298.4 399.5 L 303.7 398.8 L 307.6 397.7 L 309 397.3 L 314.4 395.1 L 319.7 393.9 L 325 396.8 L 326.9 397.7 L 330.3 399.4 L 335.6 400.5 L 340.9 402.1 L 342.2 402.9 L 346.3 405.8 L 348.4 408 L 351.6 412 L 352.5 413.2 L 355.2 418.4 L 356.8 423.5 L 356.9 424.1 L 357.8 428.7 L 358.9 433.8 L 359.9 439 L 360.8 444.1 L 361.7 449.3 L 362.2 453 L 362.4 454.5 L 367.5 454.5 L 372.8 454.5 L 375.2 454.5 L 374.8 449.3 L 374.4 444.1 L 373.9 439 L 373.2 433.8 L 372.8 431.3 L 372.4 428.7 L 371.4 423.5 L 369.9 418.4 L 367.7 413.2 L 367.5 412.9 L 364.4 408 L 362.2 405.5 L 359.7 402.9 L 356.9 400.3 L 354.1 397.7 L 351.6 395.2 L 348.5 392.6 L 346.3 390.7 L 340.9 387.5 L 340.8 387.4 L 335.6 385.3 L 330.3 384.2 L 325 383.7 L 319.7 383.6 L 314.4 383.4 L 309 383.9 L 303.7 384.7 L 298.4 385.4 L 293.1 386.5 L 290.2 387.4 L 287.8 388.2 L 282.5 390.5 L 278.6 392.6 L 277.2 393.4 L 271.8 397.1 L 271 397.7 L 266.5 401.7 L 265.3 402.9 L 261.2 408 L 261.2 408 L 258.2 413.2 L 256.3 418.4 L 255.9 419.8 L 254.9 423.5 L 253.9 428.7 L 253.2 433.8 L 252.9 439 L 252.7 444.1 L 252.5 449.3 L 252 454.5 z M 293.1 140.7 L 298.4 141.8 L 303.7 142.4 L 309 143.3 L 314.4 143.8 L 319.7 143.6 L 325 143.5 L 330.3 143 L 335.6 141.9 L 340.8 139.8 L 340.9 139.7 L 346.3 136.5 L 348.5 134.6 L 351.6 132 L 354.1 129.5 L 356.9 126.9 L 359.7 124.3 L 362.2 121.6 L 364.4 119.1 L 367.5 114.3 L 367.7 114 L 369.9 108.8 L 371.4 103.7 L 372.4 98.5 L 372.8 95.8 L 373.2 93.3 L 373.9 88.2 L 374.4 83 L 374.8 77.9 L 375.2 72.7 L 372.8 72.7 L 367.5 72.7 L 362.4 72.7 L 362.2 74.2 L 361.7 77.9 L 360.8 83 L 359.9 88.2 L 358.9 93.3 L 357.8 98.5 L 356.9 103 L 356.8 103.7 L 355.2 108.8 L 352.5 114 L 351.6 115.2 L 348.4 119.1 L 346.3 121.4 L 342.2 124.3 L 340.9 125.1 L 335.6 126.7 L 330.3 127.8 L 326.9 129.5 L 325 130.4 L 319.7 133.2 L 314.4 132.1 L 309 129.8 L 307.6 129.5 L 303.7 128.4 L 298.4 127.7 L 293.1 126.8 L 287.8 125.3 L 286 124.3 L 282.5 121.4 L 280.3 119.1 L 277.2 114 L 277.2 113.8 L 275.2 108.8 L 273.6 103.7 L 272.3 98.5 L 271.8 96.2 L 271.3 93.3 L 270.5 88.2 L 269.9 83 L 269.5 77.9 L 269 72.7 L 266.5 72.7 L 261.2 72.7 L 255.9 72.7 L 252 72.7 L 252.5 77.9 L 252.7 83 L 252.9 88.2 L 253.2 93.3 L 253.9 98.5 L 254.9 103.7 L 255.9 107.4 L 256.3 108.8 L 258.2 114 L 261.2 119.1 L 261.2 119.1 L 265.3 124.3 L 266.5 125.5 L 271 129.5 L 271.8 130.1 L 277.2 133.8 L 278.6 134.6 L 282.5 136.7 L 287.8 139 L 290.2 139.8 z M 107.1 114.6 L 112.4 115.7 L 117.7 116.4 L 123 116.1 L 128.3 115 L 131.6 114 L 133.6 113.4 L 138.9 111.9 L 144.3 110.6 L 149.6 109.6 L 152 108.8 L 154.9 107.7 L 160.2 104.6 L 161.4 103.7 L 165.5 99.3 L 166.1 98.5 L 169 93.3 L 170.8 89 L 171.1 88.2 L 172.8 83 L 174.1 77.9 L 175.4 72.7 L 170.8 72.7 L 165.5 72.7 L 160.2 72.7 L 154.9 72.7 L 151.1 72.7 L 149.6 75.3 L 147.6 77.9 L 144.3 81.1 L 141.6 83 L 138.9 84.7 L 133.6 86.8 L 128.3 88 L 123 88.1 L 117.7 86.9 L 112.4 84.3 L 110.7 83 L 107.1 80 L 104.8 77.9 L 101.7 74.7 L 99.9 72.7 L 96.4 72.7 L 91.1 72.7 L 85.8 72.7 L 80.5 72.7 L 75.2 72.7 L 69.8 72.7 L 69.8 77.9 L 69.8 83 L 69.8 88.2 L 69.8 88.8 L 74.1 93.3 L 75.2 94.4 L 78.6 98.5 L 80.5 100.5 L 83.5 103.7 L 85.8 105.6 L 90 108.8 L 91.1 109.4 L 96.4 111.6 L 101.7 113.3 L 104.3 114 z" clip-path="url(#p965ad97212)" style="fill: #ff4f00; fill-opacity: 0.9"/>
<path d="M 176.2 454.5 L 181.5 454.5 L 186.8 454.5 L 192.1 454.5 L 197.4 454.5 L 202.7 454.5 L 208 454.5 L 209.8 454.5 L 208.2 449.3 L 208.6 444.1 L 208 441.3 L 207.8 439 L 206.8 433.8 L 205.5 428.7 L 202.7 424.1 L 202.5 423.5 L 197.4 419 L 196.6 418.4 L 192.1 415.9 L 188 413.2 L 186.8 412.5 L 181.5 409.2 L 179.6 408 L 176.2 406.3 L 170.8 403.7 L 169.2 402.9 L 165.5 401.3 L 160.2 399.1 L 157 397.7 L 154.9 396.8 L 149.6 394.7 L 144.3 392.7 L 143.6 392.6 L 138.9 391.5 L 133.6 390.8 L 128.3 390.4 L 123 390.5 L 117.7 391.1 L 112.4 391.9 L 107.9 392.6 L 107.1 392.7 L 101.7 393.2 L 96.4 393.8 L 91.1 394.7 L 85.8 395.5 L 80.5 396.4 L 75.2 397.1 L 70.7 397.7 L 69.8 397.9 L 69.8 402.9 L 69.8 408 L 69.8 413.2 L 69.8 418.4 L 69.8 423.5 L 69.8 428.7 L 69.8 433.8 L 69.8 438.4 L 74.1 433.8 L 75.2 432.7 L 78.6 428.7 L 80.5 426.7 L 83.5 423.5 L 85.8 421.6 L 90 418.4 L 91.1 417.8 L 96.4 415.5 L 101.7 413.9 L 104.3 413.2 L 107.1 412.6 L 112.4 411.4 L 117.7 410.8 L 123 411.1 L 128.3 412.2 L 131.6 413.2 L 133.6 413.8 L 138.9 415.3 L 144.3 416.5 L 149.6 417.6 L 152 418.4 L 154.9 419.4 L 160.2 422.6 L 161.4 423.5 L 165.5 427.9 L 166.1 428.7 L 169 433.8 L 170.8 438.2 L 171.1 439 L 172.8 444.1 L 174.1 449.3 L 175.4 454.5 z M 224 454.5 L 229.3 454.5 L 234.6 454.5 L 239.9 454.5 L 245.3 454.5 L 250.6 454.5 L 252 454.5 L 252.5 449.3 L 252.7 444.1 L 252.9 439 L 253.2 433.8 L 253.9 428.7 L 254.9 423.5 L 255.9 419.8 L 256.3 418.4 L 258.2 413.2 L 261.2 408 L 261.2 408 L 265.3 402.9 L 266.5 401.7 L 271 397.7 L 271.8 397.1 L 277.2 393.4 L 278.6 392.6 L 282.5 390.5 L 287.8 388.2 L 290.2 387.4 L 293.1 386.5 L 298.4 385.4 L 303.7 384.7 L 309 383.9 L 314.4 383.4 L 319.7 383.6 L 325 383.7 L 330.3 384.2 L 335.6 385.3 L 340.8 387.4 L 340.9 387.5 L 346.3 390.7 L 348.5 392.6 L 351.6 395.2 L 354.1 397.7 L 356.9 400.3 L 359.7 402.9 L 362.2 405.5 L 364.4 408 L 367.5 412.9 L 367.7 413.2 L 369.9 418.4 L 371.4 423.5 L 372.4 428.7 L 372.8 431.3 L 373.2 433.8 L 373.9 439 L 374.4 444.1 L 374.8 449.3 L 375.2 454.5 L 378.2 454.5 L 383.5 454.5 L 388.8 454.5 L 388.9 454.5 L 388.8 453.1 L 388.6 449.3 L 388.5 444.1 L 388.4 439 L 388.1 433.8 L 387.6 428.7 L 387 423.5 L 386.2 418.4 L 385.1 413.2 L 383.5 408 L 383.5 407.9 L 380.9 402.9 L 378.2 398.4 L 377.7 397.7 L 373.5 392.6 L 372.8 391.8 L 368.2 387.4 L 367.5 386.8 L 362.4 382.2 L 362.2 382.1 L 356.9 378.1 L 355.3 377.1 L 351.6 374.6 L 346.4 371.9 L 346.3 371.9 L 340.9 370.3 L 335.6 369 L 330.3 368.2 L 325 367.9 L 319.7 367.7 L 314.4 368 L 309 368.3 L 303.7 369.1 L 298.4 370.2 L 293.1 371 L 289.6 371.9 L 287.8 372.5 L 282.5 374.5 L 277.2 376.8 L 276.5 377.1 L 271.8 379.4 L 266.5 382.2 L 266.5 382.2 L 261.2 385.5 L 258.2 387.4 L 255.9 389 L 250.7 392.6 L 250.6 392.6 L 245.3 397.1 L 244.2 397.7 L 239.9 401.1 L 235.8 402.9 L 234.6 403.8 L 230.2 408 L 229.3 409.6 L 226.8 413.2 L 224.5 418.4 L 224 420.1 L 222.4 423.5 L 221.2 428.7 L 220.2 433.8 L 220.2 439 L 221.6 444.1 L 222.7 449.3 L 221.2 454.5 z M 293.1 156.1 L 298.4 157 L 303.7 158 L 309 158.8 L 314.4 159.2 L 319.7 159.4 L 325 159.3 L 330.3 158.9 L 335.6 158.1 L 340.9 156.8 L 346.3 155.3 L 346.4 155.3 L 351.6 152.5 L 355.3 150.1 L 356.9 149 L 362.2 145.1 L 362.4 144.9 L 367.5 140.4 L 368.2 139.8 L 372.8 135.3 L 373.5 134.6 L 377.7 129.5 L 378.2 128.8 L 380.9 124.3 L 383.5 119.3 L 383.5 119.1 L 385.1 114 L 386.2 108.8 L 387 103.7 L 387.6 98.5 L 388.1 93.3 L 388.4 88.2 L 388.5 83 L 388.6 77.9 L 388.8 74.1 L 388.9 72.7 L 388.8 72.7 L 383.5 72.7 L 378.2 72.7 L 375.2 72.7 L 374.8 77.9 L 374.4 83 L 373.9 88.2 L 373.2 93.3 L 372.8 95.8 L 372.4 98.5 L 371.4 103.7 L 369.9 108.8 L 367.7 114 L 367.5 114.3 L 364.4 119.1 L 362.2 121.6 L 359.7 124.3 L 356.9 126.9 L 354.1 129.5 L 351.6 132 L 348.5 134.6 L 346.3 136.5 L 340.9 139.7 L 340.8 139.8 L 335.6 141.9 L 330.3 143 L 325 143.5 L 319.7 143.6 L 314.4 143.8 L 309 143.3 L 303.7 142.4 L 298.4 141.8 L 293.1 140.7 L 290.2 139.8 L 287.8 139 L 282.5 136.7 L 278.6 134.6 L 277.2 133.8 L 271.8 130.1 L 271 129.5 L 266.5 125.5 L 265.3 124.3 L 261.2 119.1 L 261.2 119.1 L 258.2 114 L 256.3 108.8 L 255.9 107.4 L 254.9 103.7 L 253.9 98.5 L 253.2 93.3 L 252.9 88.2 L 252.7 83 L 252.5 77.9 L 252 72.7 L 250.6 72.7 L 245.3 72.7 L 239.9 72.7 L 234.6 72.7 L 229.3 72.7 L 224 72.7 L 221.2 72.7 L 222.7 77.9 L 221.6 83 L 220.2 88.2 L 220.2 93.3 L 221.2 98.5 L 222.4 103.7 L 224 107.1 L 224.5 108.8 L 226.8 114 L 229.3 117.6 L 230.2 119.1 L 234.6 123.4 L 235.8 124.3 L 239.9 126.1 L 244.2 129.5 L 245.3 130.1 L 250.6 134.5 L 250.7 134.6 L 255.9 138.2 L 258.2 139.8 L 261.2 141.6 L 266.5 144.9 L 266.5 144.9 L 271.8 147.8 L 276.5 150.1 L 277.2 150.4 L 282.5 152.7 L 287.8 154.7 L 289.6 155.3 z M 112.4 135.2 L 117.7 136.1 L 123 136.7 L 128.3 136.8 L 133.6 136.4 L 138.9 135.7 L 143.6 134.6 L 144.3 134.5 L 149.6 132.5 L 154.9 130.3 L 157 129.5 L 160.2 128.1 L 165.5 125.8 L 169.2 124.3 L 170.8 123.5 L 176.2 120.9 L 179.6 119.1 L 181.5 118 L 186.8 114.6 L 188 114 L 192.1 111.3 L 196.6 108.8 L 197.4 108.1 L 202.5 103.7 L 202.7 103.1 L 205.5 98.5 L 206.8 93.3 L 207.8 88.2 L 208 85.9 L 208.6 83 L 208.2 77.9 L 209.8 72.7 L 208 72.7 L 202.7 72.7 L 197.4 72.7 L 192.1 72.7 L 186.8 72.7 L 181.5 72.7 L 176.2 72.7 L 175.4 72.7 L 174.1 77.9 L 172.8 83 L 171.1 88.2 L 170.8 89 L 169 93.3 L 166.1 98.5 L 165.5 99.3 L 161.4 103.7 L 160.2 104.6 L 154.9 107.7 L 152 108.8 L 149.6 109.6 L 144.3 110.6 L 138.9 111.9 L 133.6 113.4 L 131.6 114 L 128.3 115 L 123 116.1 L 117.7 116.4 L 112.4 115.7 L 107.1 114.6 L 104.3 114 L 101.7 113.3 L 96.4 111.6 L 91.1 109.4 L 90 108.8 L 85.8 105.6 L 83.5 103.7 L 80.5 100.5 L 78.6 98.5 L 75.2 94.4 L 74.1 93.3 L 69.8 88.8 L 69.8 93.3 L 69.8 98.5 L 69.8 103.7 L 69.8 108.8 L 69.8 114 L 69.8 119.1 L 69.8 124.3 L 69.8 129.3 L 70.7 129.5 L 75.2 130.1 L 80.5 130.8 L 85.8 131.6 L 91.1 132.5 L 96.4 133.3 L 101.7 134 L 107.1 134.5 L 107.9 134.6 z" clip-path="url(#p965ad97212)" style="fill: #ff8b00; fill-opacity: 0.9"/>
<path d="M 213.4 454.5 L 218.7 454.5 L 221.2 454.5 L 222.7 449.3 L 221.6 444.1 L 220.2 439 L 220.2 433.8 L 221.2 428.7 L 222.4 423.5 L 224 420.1 L 224.5 418.4 L 226.8 413.2 L 229.3 409.6 L 230.2 408 L 234.6 403.8 L 235.8 402.9 L 239.9 401.1 L 244.2 397.7 L 245.3 397.1 L 250.6 392.6 L 250.7 392.6 L 255.9 389 L 258.2 387.4 L 261.2 385.5 L 266.5 382.2 L 266.5 382.2 L 271.8 379.4 L 276.5 377.1 L 277.2 376.8 L 282.5 374.5 L 287.8 372.5 L 289.6 371.9 L 293.1 371 L 298.4 370.2 L 303.7 369.1 L 309 368.3 L 314.4 368 L 319.7 367.7 L 325 367.9 L 330.3 368.2 L 335.6 369 L 340.9 370.3 L 346.3 371.9 L 346.4 371.9 L 351.6 374.6 L 355.3 377.1 L 356.9 378.1 L 362.2 382.1 L 362.4 382.2 L 367.5 386.8 L 368.2 387.4 L 372.8 391.8 L 373.5 392.6 L 377.7 397.7 L 378.2 398.4 L 380.9 402.9 L 383.5 407.9 L 383.5 408 L 385.1 413.2 L 386.2 418.4 L 387 423.5 L 387.6 428.7 L 388.1 433.8 L 388.4 439 L 388.5 444.1 L 388.6 449.3 L 388.8 453.1 L 388.9 454.5 L 394.1 454.5 L 399.4 454.5 L 404 454.5 L 403.8 449.3 L 403.9 444.1 L 404 439 L 404 433.8 L 403.6 428.7 L 403.1 423.5 L 402.4 418.4 L 401.3 413.2 L 399.7 408 L 399.4 407.5 L 397.6 402.9 L 395.2 397.7 L 394.1 395.5 L 392.5 392.6 L 389 387.4 L 388.8 387.2 L 384.6 382.2 L 383.5 381 L 379.3 377.1 L 378.2 375.9 L 374.3 371.9 L 372.8 370.7 L 367.5 368.4 L 364.3 366.8 L 362.2 366.2 L 356.9 363.4 L 353.3 361.6 L 351.6 360.9 L 346.3 359.7 L 340.9 359.1 L 335.6 357.6 L 330.3 356.6 L 328.9 356.4 L 325 356.1 L 319.7 356 L 314.4 356 L 309 356.3 L 308.3 356.4 L 303.7 357.2 L 298.4 358.6 L 293.1 359.4 L 287.8 359.4 L 282.5 360.8 L 280.9 361.6 L 277.2 363.7 L 271.8 366.4 L 271 366.8 L 266.5 369 L 261.2 371.9 L 261.1 371.9 L 255.9 375.3 L 253.2 377.1 L 250.6 378.7 L 245.5 382.2 L 245.3 382.4 L 239.9 384.8 L 234.6 385.5 L 229.3 386.1 L 224 387.2 L 222.9 387.4 L 218.7 388.3 L 213.4 389.1 L 208 389.4 L 202.7 389.6 L 197.4 389.4 L 192.1 388.8 L 186.8 387.9 L 184.5 387.4 L 181.5 386.7 L 176.2 385.3 L 170.8 383.5 L 166.9 382.2 L 165.5 381.8 L 160.2 380.3 L 154.9 379.1 L 149.6 378 L 145.4 377.1 L 144.3 376.8 L 138.9 375.7 L 133.6 374.7 L 128.3 374.1 L 123 373.8 L 117.7 373.9 L 112.4 374.5 L 107.1 375.2 L 101.7 376 L 96.4 376.8 L 94.7 377.1 L 91.1 377.7 L 85.8 378.5 L 80.5 379.2 L 75.2 380 L 69.8 381.2 L 69.8 382.2 L 69.8 387.4 L 69.8 392.6 L 69.8 397.7 L 69.8 397.9 L 70.7 397.7 L 75.2 397.1 L 80.5 396.4 L 85.8 395.5 L 91.1 394.7 L 96.4 393.8 L 101.7 393.2 L 107.1 392.7 L 107.9 392.6 L 112.4 391.9 L 117.7 391.1 L 123 390.5 L 128.3 390.4 L 133.6 390.8 L 138.9 391.5 L 143.6 392.6 L 144.3 392.7 L 149.6 394.7 L 154.9 396.8 L 157 397.7 L 160.2 399.1 L 165.5 401.3 L 169.2 402.9 L 170.8 403.7 L 176.2 406.3 L 179.6 408 L 181.5 409.2 L 186.8 412.5 L 188 413.2 L 192.1 415.9 L 196.6 418.4 L 197.4 419 L 202.5 423.5 L 202.7 424.1 L 205.5 428.7 L 206.8 433.8 L 207.8 439 L 208 441.3 L 208.6 444.1 L 208.2 449.3 L 209.8 454.5 z M 309 170.9 L 314.4 171.2 L 319.7 171.2 L 325 171.1 L 328.9 170.7 L 330.3 170.6 L 335.6 169.5 L 340.9 168.1 L 346.3 167.5 L 351.6 166.3 L 353.3 165.6 L 356.9 163.8 L 362.2 161 L 364.3 160.4 L 367.5 158.8 L 372.8 156.5 L 374.3 155.3 L 378.2 151.3 L 379.3 150.1 L 383.5 146.2 L 384.6 144.9 L 388.8 140 L 389 139.8 L 392.5 134.6 L 394.1 131.7 L 395.2 129.5 L 397.6 124.3 L 399.4 119.7 L 399.7 119.1 L 401.3 114 L 402.4 108.8 L 403.1 103.7 L 403.6 98.5 L 404 93.3 L 404 88.2 L 403.9 83 L 403.8 77.9 L 404 72.7 L 399.4 72.7 L 394.1 72.7 L 388.9 72.7 L 388.8 74.1 L 388.6 77.9 L 388.5 83 L 388.4 88.2 L 388.1 93.3 L 387.6 98.5 L 387 103.7 L 386.2 108.8 L 385.1 114 L 383.5 119.1 L 383.5 119.3 L 380.9 124.3 L 378.2 128.8 L 377.7 129.5 L 373.5 134.6 L 372.8 135.3 L 368.2 139.8 L 367.5 140.4 L 362.4 144.9 L 362.2 145.1 L 356.9 149 L 355.3 150.1 L 351.6 152.5 L 346.4 155.3 L 346.3 155.3 L 340.9 156.8 L 335.6 158.1 L 330.3 158.9 L 325 159.3 L 319.7 159.4 L 314.4 159.2 L 309 158.8 L 303.7 158 L 298.4 157 L 293.1 156.1 L 289.6 155.3 L 287.8 154.7 L 282.5 152.7 L 277.2 150.4 L 276.5 150.1 L 271.8 147.8 L 266.5 144.9 L 266.5 144.9 L 261.2 141.6 L 258.2 139.8 L 255.9 138.2 L 250.7 134.6 L 250.6 134.5 L 245.3 130.1 L 244.2 129.5 L 239.9 126.1 L 235.8 124.3 L 234.6 123.4 L 230.2 119.1 L 229.3 117.6 L 226.8 114 L 224.5 108.8 L 224 107.1 L 222.4 103.7 L 221.2 98.5 L 220.2 93.3 L 220.2 88.2 L 221.6 83 L 222.7 77.9 L 221.2 72.7 L 218.7 72.7 L 213.4 72.7 L 209.8 72.7 L 208.2 77.9 L 208.6 83 L 208 85.9 L 207.8 88.2 L 206.8 93.3 L 205.5 98.5 L 202.7 103.1 L 202.5 103.7 L 197.4 108.1 L 196.6 108.8 L 192.1 111.3 L 188 114 L 186.8 114.6 L 181.5 118 L 179.6 119.1 L 176.2 120.9 L 170.8 123.5 L 169.2 124.3 L 165.5 125.8 L 160.2 128.1 L 157 129.5 L 154.9 130.3 L 149.6 132.5 L 144.3 134.5 L 143.6 134.6 L 138.9 135.7 L 133.6 136.4 L 128.3 136.8 L 123 136.7 L 117.7 136.1 L 112.4 135.2 L 107.9 134.6 L 107.1 134.5 L 101.7 134 L 96.4 133.3 L 91.1 132.5 L 85.8 131.6 L 80.5 130.8 L 75.2 130.1 L 70.7 129.5 L 69.8 129.3 L 69.8 129.5 L 69.8 134.6 L 69.8 139.8 L 69.8 144.9 L 69.8 145.9 L 75.2 147.1 L 80.5 148 L 85.8 148.7 L 91.1 149.5 L 94.7 150.1 L 96.4 150.4 L 101.7 151.2 L 107.1 151.9 L 112.4 152.7 L 117.7 153.2 L 123 153.4 L 128.3 153.1 L 133.6 152.5 L 138.9 151.5 L 144.3 150.3 L 145.4 150.1 L 149.6 149.2 L 154.9 148.1 L 160.2 146.8 L 165.5 145.4 L 166.9 144.9 L 170.8 143.6 L 176.2 141.9 L 181.5 140.4 L 184.5 139.8 L 186.8 139.3 L 192.1 138.3 L 197.4 137.8 L 202.7 137.6 L 208 137.7 L 213.4 138.1 L 218.7 138.8 L 222.9 139.8 L 224 140 L 229.3 141.1 L 234.6 141.7 L 239.9 142.4 L 245.3 144.8 L 245.5 144.9 L 250.6 148.5 L 253.2 150.1 L 255.9 151.9 L 261.1 155.3 L 261.2 155.3 L 266.5 158.2 L 271 160.4 L 271.8 160.8 L 277.2 163.5 L 280.9 165.6 L 282.5 166.4 L 287.8 167.7 L 293.1 167.8 L 298.4 168.6 L 303.7 170 L 308.3 170.7 z" clip-path="url(#p965ad97212)" style="fill: #ffc600; fill-opacity: 0.9"/>
<path d="M 404.7 454.5 L 410 454.5 L 415.4 454.5 L 420.7 454.5 L 426 454.5 L 430.9 454.5 L 430.3 449.3 L 430.7 444.1 L 431.3 439.2 L 431.3 439 L 431.4 433.8 L 431.3 433.2 L 430.9 428.7 L 430.1 423.5 L 429 418.4 L 427.4 413.2 L 426 410.2 L 425 408 L 421.9 402.9 L 420.7 401.3 L 417.4 397.7 L 415.4 394.8 L 413.6 392.6 L 410 390.1 L 408.7 387.4 L 404.9 382.2 L 404.7 382.1 L 399.4 377.1 L 399.4 377.1 L 394.1 372.5 L 393.5 371.9 L 388.8 368 L 387.1 366.8 L 383.5 365.4 L 379 361.6 L 378.2 361.1 L 372.8 359.8 L 367.5 359.7 L 362.2 358.5 L 357.4 356.4 L 356.9 356.1 L 351.6 352.9 L 346.8 351.3 L 346.3 351.1 L 340.9 349 L 335.6 347.2 L 331 346.1 L 330.3 346 L 325 345.2 L 319.7 344.9 L 314.4 344.9 L 309 345.1 L 303.7 345.6 L 300 346.1 L 298.4 346.3 L 293.1 347.4 L 287.8 348.9 L 282.5 351.1 L 282.2 351.3 L 277.2 354 L 272.6 356.4 L 271.8 356.8 L 266.5 359.1 L 261.2 359.7 L 255.9 360 L 252.2 361.6 L 250.6 363 L 247.1 366.8 L 245.3 368.4 L 239.9 369.4 L 234.6 370.8 L 230.6 371.9 L 229.3 372.3 L 224 373.5 L 218.7 374.2 L 213.4 374.6 L 208 374.7 L 202.7 374.4 L 197.4 373.9 L 192.1 373.2 L 186.8 372.2 L 185.9 371.9 L 181.5 370.8 L 176.2 369.4 L 170.8 368.1 L 165.5 366.8 L 165.3 366.8 L 160.2 365.7 L 154.9 364.8 L 149.6 363.9 L 144.3 362.9 L 138.9 361.9 L 137.5 361.6 L 133.6 361 L 128.3 360.3 L 123 359.9 L 117.7 359.9 L 112.4 360.1 L 107.1 360.6 L 101.7 361.3 L 99.9 361.6 L 96.4 362.2 L 91.1 363.1 L 85.8 363.9 L 80.5 364.7 L 75.2 365.3 L 69.8 365.9 L 69.8 366.8 L 69.8 371.9 L 69.8 377.1 L 69.8 381.2 L 75.2 380 L 80.5 379.2 L 85.8 378.5 L 91.1 377.7 L 94.7 377.1 L 96.4 376.8 L 101.7 376 L 107.1 375.2 L 112.4 374.5 L 117.7 373.9 L 123 373.8 L 128.3 374.1 L 133.6 374.7 L 138.9 375.7 L 144.3 376.8 L 145.4 377.1 L 149.6 378 L 154.9 379.1 L 160.2 380.3 L 165.5 381.8 L 166.9 382.2 L 170.8 383.5 L 176.2 385.3 L 181.5 386.7 L 184.5 387.4 L 186.8 387.9 L 192.1 388.8 L 197.4 389.4 L 202.7 389.6 L 208 389.4 L 213.4 389.1 L 218.7 388.3 L 222.9 387.4 L 224 387.2 L 229.3 386.1 L 234.6 385.5 L 239.9 384.8 L 245.3 382.4 L 245.5 382.2 L 250.6 378.7 L 253.2 377.1 L 255.9 375.3 L 261.1 371.9 L 261.2 371.9 L 266.5 369 L 271 366.8 L 271.8 366.4 L 277.2 363.7 L 280.9 361.6 L 282.5 360.8 L 287.8 359.4 L 293.1 359.4 L 298.4 358.6 L 303.7 357.2 L 308.3 356.4 L 309 356.3 L 314.4 356 L 319.7 356 L 325 356.1 L 328.9 356.4 L 330.3 356.6 L 335.6 357.6 L 340.9 359.1 L 346.3 359.7 L 351.6 360.9 L 353.3 361.6 L 356.9 363.4 L 362.2 366.2 L 364.3 366.8 L 367.5 368.4 L 372.8 370.7 L 374.3 371.9 L 378.2 375.9 L 379.3 377.1 L 383.5 381 L 384.6 382.2 L 388.8 387.2 L 389 387.4 L 392.5 392.6 L 394.1 395.5 L 395.2 397.7 L 397.6 402.9 L 399.4 407.5 L 399.7 408 L 401.3 413.2 L 402.4 418.4 L 403.1 423.5 L 403.6 428.7 L 404 433.8 L 404 439 L 403.9 444.1 L 403.8 449.3 L 404 454.5 z M 468.5 454.5 L 473.8 454.5 L 479.2 454.5 L 484.5 454.5 L 489.8 454.5 L 495.1 454.5 L 500.4 454.5 L 505.7 454.5 L 511 454.5 L 516.4 454.5 L 521.7 454.5 L 524.8 454.5 L 521.7 451.7 L 519 449.3 L 516.4 447.1 L 512.5 444.1 L 511 443.1 L 505.7 440.4 L 501.2 439 L 500.4 438.7 L 495.1 438.2 L 489.8 438.6 L 488.1 439 L 484.5 440 L 479.2 442.7 L 476.8 444.1 L 473.8 446.7 L 471.6 449.3 L 468.5 454.4 L 468.5 454.5 z M 303.7 181.5 L 309 182.1 L 314.4 182.3 L 319.7 182.3 L 325 182 L 330.3 181.2 L 331 181 L 335.6 180 L 340.9 178.2 L 346.3 176.1 L 346.8 175.9 L 351.6 174.3 L 356.9 171 L 357.4 170.7 L 362.2 168.6 L 367.5 167.5 L 372.8 167.4 L 378.2 166.1 L 379 165.6 L 383.5 161.8 L 387.1 160.4 L 388.8 159.1 L 393.5 155.3 L 394.1 154.7 L 399.4 150.1 L 399.4 150.1 L 404.7 145.1 L 404.9 144.9 L 408.7 139.8 L 410 137.1 L 413.6 134.6 L 415.4 132.4 L 417.4 129.5 L 420.7 125.9 L 421.9 124.3 L 425 119.1 L 426 117 L 427.4 114 L 429 108.8 L 430.1 103.7 L 430.9 98.5 L 431.3 93.9 L 431.4 93.3 L 431.3 88.2 L 431.3 88 L 430.7 83 L 430.3 77.9 L 430.9 72.7 L 426 72.7 L 420.7 72.7 L 415.4 72.7 L 410 72.7 L 404.7 72.7 L 404 72.7 L 403.8 77.9 L 403.9 83 L 404 88.2 L 404 93.3 L 403.6 98.5 L 403.1 103.7 L 402.4 108.8 L 401.3 114 L 399.7 119.1 L 399.4 119.7 L 397.6 124.3 L 395.2 129.5 L 394.1 131.7 L 392.5 134.6 L 389 139.8 L 388.8 140 L 384.6 144.9 L 383.5 146.2 L 379.3 150.1 L 378.2 151.3 L 374.3 155.3 L 372.8 156.5 L 367.5 158.8 L 364.3 160.4 L 362.2 161 L 356.9 163.8 L 353.3 165.6 L 351.6 166.3 L 346.3 167.5 L 340.9 168.1 L 335.6 169.5 L 330.3 170.6 L 328.9 170.7 L 325 171.1 L 319.7 171.2 L 314.4 171.2 L 309 170.9 L 308.3 170.7 L 303.7 170 L 298.4 168.6 L 293.1 167.8 L 287.8 167.7 L 282.5 166.4 L 280.9 165.6 L 277.2 163.5 L 271.8 160.8 L 271 160.4 L 266.5 158.2 L 261.2 155.3 L 261.1 155.3 L 255.9 151.9 L 253.2 150.1 L 250.6 148.5 L 245.5 144.9 L 245.3 144.8 L 239.9 142.4 L 234.6 141.7 L 229.3 141.1 L 224 140 L 222.9 139.8 L 218.7 138.8 L 213.4 138.1 L 208 137.7 L 202.7 137.6 L 197.4 137.8 L 192.1 138.3 L 186.8 139.3 L 184.5 139.8 L 181.5 140.4 L 176.2 141.9 L 170.8 143.6 L 166.9 144.9 L 165.5 145.4 L 160.2 146.8 L 154.9 148.1 L 149.6 149.2 L 145.4 150.1 L 144.3 150.3 L 138.9 151.5 L 133.6 152.5 L 128.3 153.1 L 123 153.4 L 117.7 153.2 L 112.4 152.7 L 107.1 151.9 L 101.7 151.2 L 96.4 150.4 L 94.7 150.1 L 91.1 149.5 L 85.8 148.7 L 80.5 148 L 75.2 147.1 L 69.8 145.9 L 69.8 150.1 L 69.8 155.3 L 69.8 160.4 L 69.8 161.3 L 75.2 161.9 L 80.5 162.5 L 85.8 163.3 L 91.1 164.1 L 96.4 165 L 99.9 165.6 L 101.7 165.9 L 107.1 166.6 L 112.4 167.1 L 117.7 167.3 L 123 167.2 L 128.3 166.9 L 133.6 166.2 L 137.5 165.6 L 138.9 165.3 L 144.3 164.3 L 149.6 163.3 L 154.9 162.4 L 160.2 161.5 L 165.3 160.4 L 165.5 160.4 L 170.8 159.1 L 176.2 157.8 L 181.5 156.3 L 185.9 155.3 L 186.8 155 L 192.1 154 L 197.4 153.3 L 202.7 152.7 L 208 152.5 L 213.4 152.6 L 218.7 153 L 224 153.7 L 229.3 154.9 L 230.6 155.3 L 234.6 156.4 L 239.9 157.8 L 245.3 158.8 L 247.1 160.4 L 250.6 164.2 L 252.2 165.6 L 255.9 167.2 L 261.2 167.5 L 266.5 168.1 L 271.8 170.4 L 272.6 170.7 L 277.2 173.2 L 282.2 175.9 L 282.5 176 L 287.8 178.3 L 293.1 179.8 L 298.4 180.8 L 300 181 z M 489.8 88.6 L 495.1 89 L 500.4 88.4 L 501.2 88.2 L 505.7 86.8 L 511 84 L 512.5 83 L 516.4 80.1 L 519 77.9 L 521.7 75.5 L 524.8 72.7 L 521.7 72.7 L 516.4 72.7 L 511 72.7 L 505.7 72.7 L 500.4 72.7 L 495.1 72.7 L 489.8 72.7 L 484.5 72.7 L 479.2 72.7 L 473.8 72.7 L 468.5 72.7 L 468.5 72.7 L 468.5 72.8 L 471.6 77.9 L 473.8 80.4 L 476.8 83 L 479.2 84.5 L 484.5 87.2 L 488.1 88.2 z" clip-path="url(#p965ad97212)" style="fill: #faff00; fill-opacity: 0.9"/>
<path d="M 431.3 454.5 L 436.6 454.5 L 441.9 454.5 L 447.3 454.5 L 452.6 454.5 L 457.9 454.5 L 463.2 454.5 L 468.5 454.5 L 468.5 454.4 L 471.6 449.3 L 473.8 446.7 L 476.8 444.1 L 479.2 442.7 L 484.5 440 L 488.1 439 L 489.8 438.6 L 495.1 438.2 L 500.4 438.7 L 501.2 439 L 505.7 440.4 L 511 443.1 L 512.5 444.1 L 516.4 447.1 L 519 449.3 L 521.7 451.7 L 524.8 454.5 L 527 454.5 L 532.3 454.5 L 537.6 454.5 L 542.9 454.5 L 548.3 454.5 L 553.6 454.5 L 558.9 454.5 L 560 454.5 L 558.9 451.5 L 557.8 449.3 L 555.3 444.1 L 553.6 440.5 L 552.8 439 L 549.9 433.8 L 548.3 431.1 L 546.7 428.7 L 543.1 423.5 L 542.9 423.3 L 537.6 418.4 L 537.6 418.4 L 532.3 415.3 L 528.7 413.2 L 527 412.2 L 521.7 409.4 L 519 408 L 516.4 406.9 L 511 404.8 L 505.7 403.1 L 505.1 402.9 L 500.4 401.7 L 495.1 400.6 L 489.8 400 L 484.5 399.6 L 479.2 399.3 L 473.8 398.9 L 468.5 398.2 L 466.5 397.7 L 463.2 397 L 457.9 395.5 L 452.6 393.6 L 450.2 392.6 L 447.3 391.6 L 441.9 389.4 L 438.1 387.4 L 436.6 386.8 L 431.3 384.1 L 427.5 382.2 L 426 381.7 L 420.7 380.3 L 415.4 378.2 L 414.1 377.1 L 410 373.3 L 408.6 371.9 L 404.7 369.1 L 401.3 366.8 L 399.4 365.9 L 394.1 362.1 L 393.2 361.6 L 388.8 359.6 L 383.5 358.7 L 379 356.4 L 378.2 356 L 372.8 353.8 L 367.5 351.7 L 366.6 351.3 L 362.2 348.3 L 358.3 346.1 L 356.9 345.4 L 351.6 342.6 L 348.5 341 L 346.3 339.8 L 340.9 337.5 L 336.4 335.8 L 335.6 335.5 L 330.3 334 L 325 333 L 319.7 332.7 L 314.4 332.8 L 309 333.2 L 303.7 333.8 L 298.4 334.7 L 293.7 335.8 L 293.1 336 L 287.8 337.8 L 282.5 340.1 L 280.7 341 L 277.2 342.8 L 271.8 345.7 L 270.9 346.1 L 266.5 348.2 L 261.2 350.2 L 258.1 351.3 L 255.9 351.8 L 250.6 354.2 L 246.9 356.4 L 245.3 357.4 L 239.9 359 L 234.6 359.9 L 229.3 360.8 L 224.5 361.6 L 224 361.7 L 218.7 362.2 L 213.4 362.4 L 208 362.3 L 202.7 361.7 L 202 361.6 L 197.4 360.9 L 192.1 360 L 186.8 359.6 L 181.5 359 L 176.2 357.8 L 171.2 356.4 L 170.8 356.3 L 165.5 354.7 L 160.2 353.3 L 154.9 352.1 L 150.6 351.3 L 149.6 351.1 L 144.3 349.9 L 138.9 348.7 L 133.6 347.7 L 128.3 347.1 L 123 346.8 L 117.7 346.9 L 112.4 347.2 L 107.1 347.8 L 101.7 348.6 L 96.4 349.6 L 91.1 350.8 L 88.9 351.3 L 85.8 352 L 80.5 353.4 L 75.2 354.8 L 69.8 356.2 L 69.8 356.4 L 69.8 361.6 L 69.8 365.9 L 75.2 365.3 L 80.5 364.7 L 85.8 363.9 L 91.1 363.1 L 96.4 362.2 L 99.9 361.6 L 101.7 361.3 L 107.1 360.6 L 112.4 360.1 L 117.7 359.9 L 123 359.9 L 128.3 360.3 L 133.6 361 L 137.5 361.6 L 138.9 361.9 L 144.3 362.9 L 149.6 363.9 L 154.9 364.8 L 160.2 365.7 L 165.3 366.8 L 165.5 366.8 L 170.8 368.1 L 176.2 369.4 L 181.5 370.8 L 185.9 371.9 L 186.8 372.2 L 192.1 373.2 L 197.4 373.9 L 202.7 374.4 L 208 374.7 L 213.4 374.6 L 218.7 374.2 L 224 373.5 L 229.3 372.3 L 230.6 371.9 L 234.6 370.8 L 239.9 369.4 L 245.3 368.4 L 247.1 366.8 L 250.6 363 L 252.2 361.6 L 255.9 360 L 261.2 359.7 L 266.5 359.1 L 271.8 356.8 L 272.6 356.4 L 277.2 354 L 282.2 351.3 L 282.5 351.1 L 287.8 348.9 L 293.1 347.4 L 298.4 346.3 L 300 346.1 L 303.7 345.6 L 309 345.1 L 314.4 344.9 L 319.7 344.9 L 325 345.2 L 330.3 346 L 331 346.1 L 335.6 347.2 L 340.9 349 L 346.3 351.1 L 346.8 351.3 L 351.6 352.9 L 356.9 356.1 L 357.4 356.4 L 362.2 358.5 L 367.5 359.7 L 372.8 359.8 L 378.2 361.1 L 379 361.6 L 383.5 365.4 L 387.1 366.8 L 388.8 368 L 393.5 371.9 L 394.1 372.5 L 399.4 377.1 L 399.4 377.1 L 404.7 382.1 L 404.9 382.2 L 408.7 387.4 L 410 390.1 L 413.6 392.6 L 415.4 394.8 L 417.4 397.7 L 420.7 401.3 L 421.9 402.9 L 425 408 L 426 410.2 L 427.4 413.2 L 429 418.4 L 430.1 423.5 L 430.9 428.7 L 431.3 433.2 L 431.4 433.8 L 431.3 439 L 431.3 439.2 L 430.7 444.1 L 430.3 449.3 L 430.9 454.5 z M 298.4 192.5 L 303.7 193.4 L 309 194 L 314.4 194.4 L 319.7 194.5 L 325 194.1 L 330.3 193.2 L 335.6 191.7 L 336.4 191.4 L 340.9 189.7 L 346.3 187.4 L 348.5 186.2 L 351.6 184.6 L 356.9 181.8 L 358.3 181 L 362.2 178.8 L 366.6 175.9 L 367.5 175.5 L 372.8 173.4 L 378.2 171.2 L 379 170.7 L 383.5 168.5 L 388.8 167.6 L 393.2 165.6 L 394.1 165 L 399.4 161.2 L 401.3 160.4 L 404.7 158.1 L 408.6 155.3 L 410 153.8 L 414.1 150.1 L 415.4 149 L 420.7 146.9 L 426 145.5 L 427.5 144.9 L 431.3 143 L 436.6 140.4 L 438.1 139.8 L 441.9 137.8 L 447.3 135.6 L 450.2 134.6 L 452.6 133.6 L 457.9 131.7 L 463.2 130.2 L 466.5 129.5 L 468.5 129 L 473.8 128.3 L 479.2 127.9 L 484.5 127.6 L 489.8 127.2 L 495.1 126.5 L 500.4 125.5 L 505.1 124.3 L 505.7 124.1 L 511 122.4 L 516.4 120.3 L 519 119.1 L 521.7 117.8 L 527 114.9 L 528.7 114 L 532.3 111.9 L 537.6 108.8 L 537.6 108.8 L 542.9 103.9 L 543.1 103.7 L 546.7 98.5 L 548.3 96.1 L 549.9 93.3 L 552.8 88.2 L 553.6 86.7 L 555.3 83 L 557.8 77.9 L 558.9 75.6 L 560 72.7 L 558.9 72.7 L 553.6 72.7 L 548.3 72.7 L 542.9 72.7 L 537.6 72.7 L 532.3 72.7 L 527 72.7 L 524.8 72.7 L 521.7 75.5 L 519 77.9 L 516.4 80.1 L 512.5 83 L 511 84 L 505.7 86.8 L 501.2 88.2 L 500.4 88.4 L 495.1 89 L 489.8 88.6 L 488.1 88.2 L 484.5 87.2 L 479.2 84.5 L 476.8 83 L 473.8 80.4 L 471.6 77.9 L 468.5 72.8 L 468.5 72.7 L 463.2 72.7 L 457.9 72.7 L 452.6 72.7 L 447.3 72.7 L 441.9 72.7 L 436.6 72.7 L 431.3 72.7 L 430.9 72.7 L 430.3 77.9 L 430.7 83 L 431.3 88 L 431.3 88.2 L 431.4 93.3 L 431.3 93.9 L 430.9 98.5 L 430.1 103.7 L 429 108.8 L 427.4 114 L 426 117 L 425 119.1 L 421.9 124.3 L 420.7 125.9 L 417.4 129.5 L 415.4 132.4 L 413.6 134.6 L 410 137.1 L 408.7 139.8 L 404.9 144.9 L 404.7 145.1 L 399.4 150.1 L 399.4 150.1 L 394.1 154.7 L 393.5 155.3 L 388.8 159.1 L 387.1 160.4 L 383.5 161.8 L 379 165.6 L 378.2 166.1 L 372.8 167.4 L 367.5 167.5 L 362.2 168.6 L 357.4 170.7 L 356.9 171 L 351.6 174.3 L 346.8 175.9 L 346.3 176.1 L 340.9 178.2 L 335.6 180 L 331 181 L 330.3 181.2 L 325 182 L 319.7 182.3 L 314.4 182.3 L 309 182.1 L 303.7 181.5 L 300 181 L 298.4 180.8 L 293.1 179.8 L 287.8 178.3 L 282.5 176 L 282.2 175.9 L 277.2 173.2 L 272.6 170.7 L 271.8 170.4 L 266.5 168.1 L 261.2 167.5 L 255.9 167.2 L 252.2 165.6 L 250.6 164.2 L 247.1 160.4 L 245.3 158.8 L 239.9 157.8 L 234.6 156.4 L 230.6 155.3 L 229.3 154.9 L 224 153.7 L 218.7 153 L 213.4 152.6 L 208 152.5 L 202.7 152.7 L 197.4 153.3 L 192.1 154 L 186.8 155 L 185.9 155.3 L 181.5 156.3 L 176.2 157.8 L 170.8 159.1 L 165.5 160.4 L 165.3 160.4 L 160.2 161.5 L 154.9 162.4 L 149.6 163.3 L 144.3 164.3 L 138.9 165.3 L 137.5 165.6 L 133.6 166.2 L 128.3 166.9 L 123 167.2 L 117.7 167.3 L 112.4 167.1 L 107.1 166.6 L 101.7 165.9 L 99.9 165.6 L 96.4 165 L 91.1 164.1 L 85.8 163.3 L 80.5 162.5 L 75.2 161.9 L 69.8 161.3 L 69.8 165.6 L 69.8 170.7 L 69.8 170.9 L 75.2 172.4 L 80.5 173.8 L 85.8 175.1 L 88.9 175.9 L 91.1 176.4 L 96.4 177.6 L 101.7 178.6 L 107.1 179.4 L 112.4 180 L 117.7 180.3 L 123 180.4 L 128.3 180.1 L 133.6 179.4 L 138.9 178.4 L 144.3 177.2 L 149.6 176.1 L 150.6 175.9 L 154.9 175 L 160.2 173.8 L 165.5 172.4 L 170.8 170.9 L 171.2 170.7 L 176.2 169.3 L 181.5 168.1 L 186.8 167.5 L 192.1 167.1 L 197.4 166.3 L 202 165.6 L 202.7 165.4 L 208 164.9 L 213.4 164.7 L 218.7 164.9 L 224 165.5 L 224.5 165.6 L 229.3 166.3 L 234.6 167.3 L 239.9 168.2 L 245.3 169.8 L 246.9 170.7 L 250.6 173 L 255.9 175.3 L 258.1 175.9 L 261.2 177 L 266.5 179 L 270.9 181 L 271.8 181.5 L 277.2 184.4 L 280.7 186.2 L 282.5 187.1 L 287.8 189.4 L 293.1 191.2 L 293.7 191.4 z" clip-path="url(#p965ad97212)" style="fill: #7cff00; fill-opacity: 0.9"/>
<path d="M 558.9 451.5 L 560 454.5 L 564.2 454.5 L 569.5 454.5 L 569.5 449.3 L 569.5 444.1 L 569.5 439 L 569.5 433.8 L 569.5 428.7 L 569.5 423.5 L 569.5 418.4 L 569.5 413.2 L 569.5 408 L 569.5 406.2 L 564.9 402.9 L 564.2 402.4 L 558.9 399.2 L 556.4 397.7 L 553.6 396.1 L 548.3 393.4 L 546.5 392.6 L 542.9 390.8 L 537.6 388.3 L 535.5 387.4 L 532.3 386 L 527 383.9 L 522.4 382.2 L 521.7 382 L 516.4 380.4 L 511 378.9 L 505.7 377.5 L 503.9 377.1 L 500.4 376.2 L 495.1 375.1 L 489.8 374.4 L 484.5 374 L 479.2 373.8 L 473.8 373.6 L 468.5 373.4 L 463.2 373.1 L 457.9 372.6 L 452.6 372 L 452.1 371.9 L 447.3 371.2 L 441.9 370.4 L 436.6 369.3 L 431.3 368 L 427.4 366.8 L 426 366.3 L 420.7 365.9 L 415.4 364.1 L 412.1 361.6 L 410 360.4 L 404.7 359.7 L 399.4 358.3 L 397.1 356.4 L 394.1 354 L 388.8 351.9 L 386.6 351.3 L 383.5 350.1 L 378.2 347.8 L 375.3 346.1 L 372.8 344.6 L 367.5 341 L 367.5 341 L 362.2 337.6 L 359 335.8 L 356.9 334.5 L 351.6 331.4 L 350.2 330.7 L 346.3 328.4 L 340.9 325.6 L 340.8 325.5 L 335.6 322.9 L 330.3 321 L 327.1 320.3 L 325 319.9 L 319.7 319.4 L 314.4 319.6 L 309 320.3 L 308.9 320.3 L 303.7 321.2 L 298.4 322.2 L 293.1 323.7 L 288.8 325.5 L 287.8 325.9 L 282.5 328.4 L 277.8 330.7 L 277.2 330.9 L 271.8 333.5 L 266.6 335.8 L 266.5 335.8 L 261.2 338.2 L 255.9 340.8 L 255.5 341 L 250.6 343.6 L 245.3 346 L 244.8 346.1 L 239.9 347.3 L 234.6 348.7 L 229.3 349.8 L 224 350.6 L 218.7 351 L 213.4 351.2 L 208 351.1 L 202.7 350.6 L 197.4 350 L 192.1 349.4 L 186.8 348.6 L 181.5 347.3 L 177.7 346.1 L 176.2 345.6 L 170.8 343.8 L 165.5 341.9 L 162.7 341 L 160.2 340.1 L 154.9 338.7 L 149.6 337.5 L 144.3 336.2 L 142.5 335.8 L 138.9 335 L 133.6 334 L 128.3 333.2 L 123 333 L 117.7 333.3 L 112.4 334 L 107.1 334.9 L 102.5 335.8 L 101.7 336 L 96.4 337.2 L 91.1 338.4 L 85.8 339.8 L 81.5 341 L 80.5 341.2 L 75.2 342.7 L 69.8 344 L 69.8 346.1 L 69.8 351.3 L 69.8 356.2 L 75.2 354.8 L 80.5 353.4 L 85.8 352 L 88.9 351.3 L 91.1 350.8 L 96.4 349.6 L 101.7 348.6 L 107.1 347.8 L 112.4 347.2 L 117.7 346.9 L 123 346.8 L 128.3 347.1 L 133.6 347.7 L 138.9 348.7 L 144.3 349.9 L 149.6 351.1 L 150.6 351.3 L 154.9 352.1 L 160.2 353.3 L 165.5 354.7 L 170.8 356.3 L 171.2 356.4 L 176.2 357.8 L 181.5 359 L 186.8 359.6 L 192.1 360 L 197.4 360.9 L 202 361.6 L 202.7 361.7 L 208 362.3 L 213.4 362.4 L 218.7 362.2 L 224 361.7 L 224.5 361.6 L 229.3 360.8 L 234.6 359.9 L 239.9 359 L 245.3 357.4 L 246.9 356.4 L 250.6 354.2 L 255.9 351.8 L 258.1 351.3 L 261.2 350.2 L 266.5 348.2 L 270.9 346.1 L 271.8 345.7 L 277.2 342.8 L 280.7 341 L 282.5 340.1 L 287.8 337.8 L 293.1 336 L 293.7 335.8 L 298.4 334.7 L 303.7 333.8 L 309 333.2 L 314.4 332.8 L 319.7 332.7 L 325 333 L 330.3 334 L 335.6 335.5 L 336.4 335.8 L 340.9 337.5 L 346.3 339.8 L 348.5 341 L 351.6 342.6 L 356.9 345.4 L 358.3 346.1 L 362.2 348.3 L 366.6 351.3 L 367.5 351.7 L 372.8 353.8 L 378.2 356 L 379 356.4 L 383.5 358.7 L 388.8 359.6 L 393.2 361.6 L 394.1 362.1 L 399.4 365.9 L 401.3 366.8 L 404.7 369.1 L 408.6 371.9 L 410 373.3 L 414.1 377.1 L 415.4 378.2 L 420.7 380.3 L 426 381.7 L 427.5 382.2 L 431.3 384.1 L 436.6 386.8 L 438.1 387.4 L 441.9 389.4 L 447.3 391.6 L 450.2 392.6 L 452.6 393.6 L 457.9 395.5 L 463.2 397 L 466.5 397.7 L 468.5 398.2 L 473.8 398.9 L 479.2 399.3 L 484.5 399.6 L 489.8 400 L 495.1 400.6 L 500.4 401.7 L 505.1 402.9 L 505.7 403.1 L 511 404.8 L 516.4 406.9 L 519 408 L 521.7 409.4 L 527 412.2 L 528.7 413.2 L 532.3 415.3 L 537.6 418.4 L 537.6 418.4 L 542.9 423.3 L 543.1 423.5 L 546.7 428.7 L 548.3 431.1 L 549.9 433.8 L 552.8 439 L 553.6 440.5 L 555.3 444.1 L 557.8 449.3 z M 309 206.9 L 314.4 207.5 L 319.7 207.8 L 325 207.3 L 327.1 206.8 L 330.3 206.2 L 335.6 204.3 L 340.8 201.7 L 340.9 201.6 L 346.3 198.8 L 350.2 196.5 L 351.6 195.8 L 356.9 192.7 L 359 191.4 L 362.2 189.5 L 367.5 186.2 L 367.5 186.2 L 372.8 182.5 L 375.3 181 L 378.2 179.4 L 383.5 177 L 386.6 175.9 L 388.8 175.3 L 394.1 173.2 L 397.1 170.7 L 399.4 168.9 L 404.7 167.5 L 410 166.8 L 412.1 165.6 L 415.4 163.1 L 420.7 161.3 L 426 160.9 L 427.4 160.4 L 431.3 159.2 L 436.6 157.8 L 441.9 156.8 L 447.3 156 L 452.1 155.3 L 452.6 155.2 L 457.9 154.5 L 463.2 154.1 L 468.5 153.8 L 473.8 153.6 L 479.2 153.4 L 484.5 153.2 L 489.8 152.8 L 495.1 152.1 L 500.4 151 L 503.9 150.1 L 505.7 149.6 L 511 148.3 L 516.4 146.8 L 521.7 145.2 L 522.4 144.9 L 527 143.3 L 532.3 141.1 L 535.5 139.8 L 537.6 138.8 L 542.9 136.3 L 546.5 134.6 L 548.3 133.8 L 553.6 131 L 556.4 129.5 L 558.9 128 L 564.2 124.7 L 564.9 124.3 L 569.5 121 L 569.5 119.1 L 569.5 114 L 569.5 108.8 L 569.5 103.7 L 569.5 98.5 L 569.5 93.3 L 569.5 88.2 L 569.5 83 L 569.5 77.9 L 569.5 72.7 L 564.2 72.7 L 560 72.7 L 558.9 75.6 L 557.8 77.9 L 555.3 83 L 553.6 86.7 L 552.8 88.2 L 549.9 93.3 L 548.3 96.1 L 546.7 98.5 L 543.1 103.7 L 542.9 103.9 L 537.6 108.8 L 537.6 108.8 L 532.3 111.9 L 528.7 114 L 527 114.9 L 521.7 117.8 L 519 119.1 L 516.4 120.3 L 511 122.4 L 505.7 124.1 L 505.1 124.3 L 500.4 125.5 L 495.1 126.5 L 489.8 127.2 L 484.5 127.6 L 479.2 127.9 L 473.8 128.3 L 468.5 129 L 466.5 129.5 L 463.2 130.2 L 457.9 131.7 L 452.6 133.6 L 450.2 134.6 L 447.3 135.6 L 441.9 137.8 L 438.1 139.8 L 436.6 140.4 L 431.3 143 L 427.5 144.9 L 426 145.5 L 420.7 146.9 L 415.4 149 L 414.1 150.1 L 410 153.8 L 408.6 155.3 L 404.7 158.1 L 401.3 160.4 L 399.4 161.2 L 394.1 165 L 393.2 165.6 L 388.8 167.6 L 383.5 168.5 L 379 170.7 L 378.2 171.2 L 372.8 173.4 L 367.5 175.5 L 366.6 175.9 L 362.2 178.8 L 358.3 181 L 356.9 181.8 L 351.6 184.6 L 348.5 186.2 L 346.3 187.4 L 340.9 189.7 L 336.4 191.4 L 335.6 191.7 L 330.3 193.2 L 325 194.1 L 319.7 194.5 L 314.4 194.4 L 309 194 L 303.7 193.4 L 298.4 192.5 L 293.7 191.4 L 293.1 191.2 L 287.8 189.4 L 282.5 187.1 L 280.7 186.2 L 277.2 184.4 L 271.8 181.5 L 270.9 181 L 266.5 179 L 261.2 177 L 258.1 175.9 L 255.9 175.3 L 250.6 173 L 246.9 170.7 L 245.3 169.8 L 239.9 168.2 L 234.6 167.3 L 229.3 166.3 L 224.5 165.6 L 224 165.5 L 218.7 164.9 L 213.4 164.7 L 208 164.9 L 202.7 165.4 L 202 165.6 L 197.4 166.3 L 192.1 167.1 L 186.8 167.5 L 181.5 168.1 L 176.2 169.3 L 171.2 170.7 L 170.8 170.9 L 165.5 172.4 L 160.2 173.8 L 154.9 175 L 150.6 175.9 L 149.6 176.1 L 144.3 177.2 L 138.9 178.4 L 133.6 179.4 L 128.3 180.1 L 123 180.4 L 117.7 180.3 L 112.4 180 L 107.1 179.4 L 101.7 178.6 L 96.4 177.6 L 91.1 176.4 L 88.9 175.9 L 85.8 175.1 L 80.5 173.8 L 75.2 172.4 L 69.8 170.9 L 69.8 175.9 L 69.8 181 L 69.8 183.2 L 75.2 184.5 L 80.5 185.9 L 81.5 186.2 L 85.8 187.4 L 91.1 188.8 L 96.4 190 L 101.7 191.2 L 102.5 191.4 L 107.1 192.3 L 112.4 193.2 L 117.7 193.9 L 123 194.2 L 128.3 193.9 L 133.6 193.2 L 138.9 192.2 L 142.5 191.4 L 144.3 191 L 149.6 189.7 L 154.9 188.4 L 160.2 187 L 162.7 186.2 L 165.5 185.3 L 170.8 183.4 L 176.2 181.5 L 177.7 181 L 181.5 179.9 L 186.8 178.6 L 192.1 177.8 L 197.4 177.2 L 202.7 176.6 L 208 176.1 L 213.4 176 L 218.7 176.2 L 224 176.6 L 229.3 177.4 L 234.6 178.5 L 239.9 179.8 L 244.8 181 L 245.3 181.2 L 250.6 183.5 L 255.5 186.2 L 255.9 186.4 L 261.2 189 L 266.5 191.3 L 266.6 191.4 L 271.8 193.7 L 277.2 196.2 L 277.8 196.5 L 282.5 198.8 L 287.8 201.3 L 288.8 201.7 L 293.1 203.5 L 298.4 204.9 L 303.7 206 L 308.9 206.8 z" clip-path="url(#p965ad97212)" style="fill: #05ff00; fill-opacity: 0.9"/>
<path d="M 569.5 406.2 L 569.5 402.9 L 569.5 397.7 L 569.5 392.6 L 569.5 387.4 L 569.5 382.2 L 569.5 378.5 L 566.7 377.1 L 564.2 376 L 558.9 373.8 L 554.3 371.9 L 553.6 371.6 L 548.3 369.3 L 542.9 367 L 542.4 366.8 L 537.6 365.2 L 532.3 363.3 L 527.9 361.6 L 527 361.3 L 521.7 359.8 L 516.4 359.5 L 511 358.3 L 505.7 356.8 L 504.1 356.4 L 500.4 355.8 L 495.1 355.1 L 489.8 354.6 L 484.5 354.4 L 479.2 354.4 L 473.8 354.8 L 468.5 355.2 L 463.2 355.6 L 457.9 355.9 L 452.6 356 L 447.3 355.8 L 441.9 355.4 L 436.6 354.8 L 431.3 353.8 L 426 352.7 L 420.7 351.4 L 420.5 351.3 L 415.4 349.8 L 410 348.5 L 404.7 347.2 L 402.1 346.1 L 399.4 345 L 394.1 342.6 L 390.3 341 L 388.8 340.3 L 383.5 337.9 L 379.5 335.8 L 378.2 335 L 372.8 331.8 L 371 330.7 L 367.5 328.5 L 362.4 325.5 L 362.2 325.4 L 356.9 321.7 L 354.6 320.3 L 351.6 318.3 L 346.3 315.2 L 346.2 315.2 L 340.9 311.5 L 338.4 310 L 335.6 308.3 L 330.3 305.9 L 326.5 304.9 L 325 304.4 L 319.7 303.8 L 314.4 304.1 L 311.1 304.9 L 309 305.3 L 303.7 306.8 L 298.4 308.7 L 295.4 310 L 293.1 310.9 L 287.8 313.4 L 284.5 315.2 L 282.5 316.2 L 277.2 319.1 L 274.6 320.3 L 271.8 321.6 L 266.5 324 L 263.2 325.5 L 261.2 326.3 L 255.9 328.7 L 251.6 330.7 L 250.6 331.1 L 245.3 333.3 L 239.9 335 L 236.7 335.8 L 234.6 336.4 L 229.3 337.5 L 224 338.4 L 218.7 339 L 213.4 339.2 L 208 339.1 L 202.7 338.7 L 197.4 338 L 192.1 337 L 187.2 335.8 L 186.8 335.7 L 181.5 334.1 L 176.2 332.4 L 171.4 330.7 L 170.8 330.4 L 165.5 328.4 L 160.2 326.4 L 157.6 325.5 L 154.9 324.5 L 149.6 322.6 L 144.3 320.9 L 142.1 320.3 L 138.9 319.5 L 133.6 318.4 L 128.3 317.9 L 123 318 L 117.7 318.8 L 112.4 320 L 111.1 320.3 L 107.1 321.3 L 101.7 322.5 L 96.4 323.9 L 91.1 325.4 L 90.8 325.5 L 85.8 326.9 L 80.5 328.4 L 75.2 329.9 L 72.2 330.7 L 69.8 331.2 L 69.8 335.8 L 69.8 341 L 69.8 344 L 75.2 342.7 L 80.5 341.2 L 81.5 341 L 85.8 339.8 L 91.1 338.4 L 96.4 337.2 L 101.7 336 L 102.5 335.8 L 107.1 334.9 L 112.4 334 L 117.7 333.3 L 123 333 L 128.3 333.2 L 133.6 334 L 138.9 335 L 142.5 335.8 L 144.3 336.2 L 149.6 337.5 L 154.9 338.7 L 160.2 340.1 L 162.7 341 L 165.5 341.9 L 170.8 343.8 L 176.2 345.6 L 177.7 346.1 L 181.5 347.3 L 186.8 348.6 L 192.1 349.4 L 197.4 350 L 202.7 350.6 L 208 351.1 L 213.4 351.2 L 218.7 351 L 224 350.6 L 229.3 349.8 L 234.6 348.7 L 239.9 347.3 L 244.8 346.1 L 245.3 346 L 250.6 343.6 L 255.5 341 L 255.9 340.8 L 261.2 338.2 L 266.5 335.8 L 266.6 335.8 L 271.8 333.5 L 277.2 330.9 L 277.8 330.7 L 282.5 328.4 L 287.8 325.9 L 288.8 325.5 L 293.1 323.7 L 298.4 322.2 L 303.7 321.2 L 308.9 320.3 L 309 320.3 L 314.4 319.6 L 319.7 319.4 L 325 319.9 L 327.1 320.3 L 330.3 321 L 335.6 322.9 L 340.8 325.5 L 340.9 325.6 L 346.3 328.4 L 350.2 330.7 L 351.6 331.4 L 356.9 334.5 L 359 335.8 L 362.2 337.6 L 367.5 341 L 367.5 341 L 372.8 344.6 L 375.3 346.1 L 378.2 347.8 L 383.5 350.1 L 386.6 351.3 L 388.8 351.9 L 394.1 354 L 397.1 356.4 L 399.4 358.3 L 404.7 359.7 L 410 360.4 L 412.1 361.6 L 415.4 364.1 L 420.7 365.9 L 426 366.3 L 427.4 366.8 L 431.3 368 L 436.6 369.3 L 441.9 370.4 L 447.3 371.2 L 452.1 371.9 L 452.6 372 L 457.9 372.6 L 463.2 373.1 L 468.5 373.4 L 473.8 373.6 L 479.2 373.8 L 484.5 374 L 489.8 374.4 L 495.1 375.1 L 500.4 376.2 L 503.9 377.1 L 505.7 377.5 L 511 378.9 L 516.4 380.4 L 521.7 382 L 522.4 382.2 L 527 383.9 L 532.3 386 L 535.5 387.4 L 537.6 388.3 L 542.9 390.8 L 546.5 392.6 L 548.3 393.4 L 553.6 396.1 L 556.4 397.7 L 558.9 399.2 L 564.2 402.4 L 564.9 402.9 z M 314.4 223 L 319.7 223.4 L 325 222.8 L 326.5 222.3 L 330.3 221.3 L 335.6 218.9 L 338.4 217.2 L 340.9 215.7 L 346.2 212 L 346.3 212 L 351.6 208.9 L 354.6 206.8 L 356.9 205.4 L 362.2 201.8 L 362.4 201.7 L 367.5 198.7 L 371 196.5 L 372.8 195.4 L 378.2 192.1 L 379.5 191.4 L 383.5 189.3 L 388.8 186.9 L 390.3 186.2 L 394.1 184.6 L 399.4 182.1 L 402.1 181 L 404.7 180 L 410 178.7 L 415.4 177.4 L 420.5 175.9 L 420.7 175.8 L 426 174.4 L 431.3 173.3 L 436.6 172.4 L 441.9 171.7 L 447.3 171.4 L 452.6 171.2 L 457.9 171.3 L 463.2 171.6 L 468.5 172 L 473.8 172.4 L 479.2 172.7 L 484.5 172.8 L 489.8 172.5 L 495.1 172.1 L 500.4 171.4 L 504.1 170.7 L 505.7 170.4 L 511 168.9 L 516.4 167.7 L 521.7 167.3 L 527 165.9 L 527.9 165.6 L 532.3 163.9 L 537.6 162 L 542.4 160.4 L 542.9 160.2 L 548.3 157.9 L 553.6 155.6 L 554.3 155.3 L 558.9 153.3 L 564.2 151.2 L 566.7 150.1 L 569.5 148.6 L 569.5 144.9 L 569.5 139.8 L 569.5 134.6 L 569.5 129.5 L 569.5 124.3 L 569.5 121 L 564.9 124.3 L 564.2 124.7 L 558.9 128 L 556.4 129.5 L 553.6 131 L 548.3 133.8 L 546.5 134.6 L 542.9 136.3 L 537.6 138.8 L 535.5 139.8 L 532.3 141.1 L 527 143.3 L 522.4 144.9 L 521.7 145.2 L 516.4 146.8 L 511 148.3 L 505.7 149.6 L 503.9 150.1 L 500.4 151 L 495.1 152.1 L 489.8 152.8 L 484.5 153.2 L 479.2 153.4 L 473.8 153.6 L 468.5 153.8 L 463.2 154.1 L 457.9 154.5 L 452.6 155.2 L 452.1 155.3 L 447.3 156 L 441.9 156.8 L 436.6 157.8 L 431.3 159.2 L 427.4 160.4 L 426 160.9 L 420.7 161.3 L 415.4 163.1 L 412.1 165.6 L 410 166.8 L 404.7 167.5 L 399.4 168.9 L 397.1 170.7 L 394.1 173.2 L 388.8 175.3 L 386.6 175.9 L 383.5 177 L 378.2 179.4 L 375.3 181 L 372.8 182.5 L 367.5 186.2 L 367.5 186.2 L 362.2 189.5 L 359 191.4 L 356.9 192.7 L 351.6 195.8 L 350.2 196.5 L 346.3 198.8 L 340.9 201.6 L 340.8 201.7 L 335.6 204.3 L 330.3 206.2 L 327.1 206.8 L 325 207.3 L 319.7 207.8 L 314.4 207.5 L 309 206.9 L 308.9 206.8 L 303.7 206 L 298.4 204.9 L 293.1 203.5 L 288.8 201.7 L 287.8 201.3 L 282.5 198.8 L 277.8 196.5 L 277.2 196.2 L 271.8 193.7 L 266.6 191.4 L 266.5 191.3 L 261.2 189 L 255.9 186.4 L 255.5 186.2 L 250.6 183.5 L 245.3 181.2 L 244.8 181 L 239.9 179.8 L 234.6 178.5 L 229.3 177.4 L 224 176.6 L 218.7 176.2 L 213.4 176 L 208 176.1 L 202.7 176.6 L 197.4 177.2 L 192.1 177.8 L 186.8 178.6 L 181.5 179.9 L 177.7 181 L 176.2 181.5 L 170.8 183.4 L 165.5 185.3 L 162.7 186.2 L 160.2 187 L 154.9 188.4 L 149.6 189.7 L 144.3 191 L 142.5 191.4 L 138.9 192.2 L 133.6 193.2 L 128.3 193.9 L 123 194.2 L 117.7 193.9 L 112.4 193.2 L 107.1 192.3 L 102.5 191.4 L 101.7 191.2 L 96.4 190 L 91.1 188.8 L 85.8 187.4 L 81.5 186.2 L 80.5 185.9 L 75.2 184.5 L 69.8 183.2 L 69.8 186.2 L 69.8 191.4 L 69.8 196 L 72.2 196.5 L 75.2 197.3 L 80.5 198.7 L 85.8 200.2 L 90.8 201.7 L 91.1 201.8 L 96.4 203.3 L 101.7 204.7 L 107.1 205.9 L 111.1 206.8 L 112.4 207.2 L 117.7 208.4 L 123 209.2 L 128.3 209.3 L 133.6 208.8 L 138.9 207.7 L 142.1 206.8 L 144.3 206.3 L 149.6 204.6 L 154.9 202.7 L 157.6 201.7 L 160.2 200.8 L 165.5 198.8 L 170.8 196.8 L 171.4 196.5 L 176.2 194.8 L 181.5 193 L 186.8 191.5 L 187.2 191.4 L 192.1 190.2 L 197.4 189.2 L 202.7 188.5 L 208 188 L 213.4 187.9 L 218.7 188.2 L 224 188.8 L 229.3 189.7 L 234.6 190.8 L 236.7 191.4 L 239.9 192.2 L 245.3 193.9 L 250.6 196 L 251.6 196.5 L 255.9 198.5 L 261.2 200.8 L 263.2 201.7 L 266.5 203.2 L 271.8 205.5 L 274.6 206.8 L 277.2 208.1 L 282.5 211 L 284.5 212 L 287.8 213.8 L 293.1 216.3 L 295.4 217.2 L 298.4 218.5 L 303.7 220.4 L 309 221.9 L 311.1 222.3 z" clip-path="url(#p965ad97212)" style="fill: #00ff72; fill-opacity: 0.9"/>
<path d="M 569.5 378.5 L 569.5 377.1 L 569.5 371.9 L 569.5 366.8 L 569.5 361.6 L 569.5 359.6 L 564.2 357.7 L 560.6 356.4 L 558.9 355.8 L 553.6 353.4 L 549.1 351.3 L 548.3 350.9 L 542.9 348.4 L 537.9 346.1 L 537.6 346 L 532.3 344 L 527 342.6 L 521.7 341.6 L 517.9 341 L 516.4 340.7 L 511 339.2 L 505.7 337.9 L 500.4 337 L 495.1 336.5 L 489.8 336.4 L 484.5 336.5 L 479.2 336.9 L 473.8 337.5 L 468.5 338.3 L 463.2 339.2 L 457.9 340 L 452.6 340.5 L 447.3 340.7 L 441.9 340.6 L 436.6 340.1 L 431.3 339.2 L 426 338.2 L 420.7 337.1 L 416.9 335.8 L 415.4 335.3 L 410 333.2 L 404.7 331.2 L 403.4 330.7 L 399.4 329.1 L 394.1 326.9 L 391.1 325.5 L 388.8 324.3 L 383.5 321.2 L 382 320.3 L 378.2 318.1 L 373.4 315.2 L 372.8 314.8 L 367.5 310.9 L 366.4 310 L 362.2 306.5 L 359.9 304.9 L 356.9 302.5 L 353.3 299.7 L 351.6 298.2 L 347.4 294.5 L 346.3 293.4 L 341.6 289.4 L 340.9 288.7 L 335.6 284.2 L 335.6 284.2 L 330.3 280.2 L 328.2 279.1 L 325 277.4 L 319.7 276.3 L 314.4 277.7 L 311.9 279.1 L 309 280.7 L 304.2 284.2 L 303.7 284.5 L 298.4 288.4 L 297.3 289.4 L 293.1 292.4 L 290.4 294.5 L 287.8 296.4 L 283.4 299.7 L 282.5 300.3 L 277.2 304 L 276 304.9 L 271.8 307.4 L 267.5 310 L 266.5 310.5 L 261.2 313.3 L 257.6 315.2 L 255.9 316 L 250.6 318.3 L 245.7 320.3 L 245.3 320.5 L 239.9 322.2 L 234.6 323.6 L 229.3 324.6 L 224 325.4 L 222 325.5 L 218.7 325.7 L 213.4 325.8 L 208 325.6 L 207.3 325.5 L 202.7 324.9 L 197.4 323.9 L 192.1 322.5 L 186.8 320.9 L 184.9 320.3 L 181.5 319.2 L 176.2 317.3 L 170.8 315.3 L 170.6 315.2 L 165.5 313 L 160.2 310.7 L 158.7 310 L 154.9 307.9 L 149.6 305.1 L 149.1 304.9 L 144.3 302.2 L 138.9 299.9 L 138.3 299.7 L 133.6 298.1 L 128.3 297.2 L 123 297.8 L 117.7 299.2 L 116.3 299.7 L 112.4 300.9 L 107.1 302.9 L 102.1 304.9 L 101.7 305 L 96.4 306.9 L 91.1 308.9 L 88.3 310 L 85.8 311 L 80.5 313.3 L 75.7 315.2 L 75.2 315.4 L 69.8 317 L 69.8 320.3 L 69.8 325.5 L 69.8 330.7 L 69.8 331.2 L 72.2 330.7 L 75.2 329.9 L 80.5 328.4 L 85.8 326.9 L 90.8 325.5 L 91.1 325.4 L 96.4 323.9 L 101.7 322.5 L 107.1 321.3 L 111.1 320.3 L 112.4 320 L 117.7 318.8 L 123 318 L 128.3 317.9 L 133.6 318.4 L 138.9 319.5 L 142.1 320.3 L 144.3 320.9 L 149.6 322.6 L 154.9 324.5 L 157.6 325.5 L 160.2 326.4 L 165.5 328.4 L 170.8 330.4 L 171.4 330.7 L 176.2 332.4 L 181.5 334.1 L 186.8 335.7 L 187.2 335.8 L 192.1 337 L 197.4 338 L 202.7 338.7 L 208 339.1 L 213.4 339.2 L 218.7 339 L 224 338.4 L 229.3 337.5 L 234.6 336.4 L 236.7 335.8 L 239.9 335 L 245.3 333.3 L 250.6 331.1 L 251.6 330.7 L 255.9 328.7 L 261.2 326.3 L 263.2 325.5 L 266.5 324 L 271.8 321.6 L 274.6 320.3 L 277.2 319.1 L 282.5 316.2 L 284.5 315.2 L 287.8 313.4 L 293.1 310.9 L 295.4 310 L 298.4 308.7 L 303.7 306.8 L 309 305.3 L 311.1 304.9 L 314.4 304.1 L 319.7 303.8 L 325 304.4 L 326.5 304.9 L 330.3 305.9 L 335.6 308.3 L 338.4 310 L 340.9 311.5 L 346.2 315.2 L 346.3 315.2 L 351.6 318.3 L 354.6 320.3 L 356.9 321.7 L 362.2 325.4 L 362.4 325.5 L 367.5 328.5 L 371 330.7 L 372.8 331.8 L 378.2 335 L 379.5 335.8 L 383.5 337.9 L 388.8 340.3 L 390.3 341 L 394.1 342.6 L 399.4 345 L 402.1 346.1 L 404.7 347.2 L 410 348.5 L 415.4 349.8 L 420.5 351.3 L 420.7 351.4 L 426 352.7 L 431.3 353.8 L 436.6 354.8 L 441.9 355.4 L 447.3 355.8 L 452.6 356 L 457.9 355.9 L 463.2 355.6 L 468.5 355.2 L 473.8 354.8 L 479.2 354.4 L 484.5 354.4 L 489.8 354.6 L 495.1 355.1 L 500.4 355.8 L 504.1 356.4 L 505.7 356.8 L 511 358.3 L 516.4 359.5 L 521.7 359.8 L 527 361.3 L 527.9 361.6 L 532.3 363.3 L 537.6 365.2 L 542.4 366.8 L 542.9 367 L 548.3 369.3 L 553.6 371.6 L 554.3 371.9 L 558.9 373.8 L 564.2 376 L 566.7 377.1 z M 314.4 249.5 L 319.7 250.9 L 325 249.8 L 328.2 248.1 L 330.3 247 L 335.6 243 L 335.6 242.9 L 340.9 238.5 L 341.6 237.8 L 346.3 233.7 L 347.4 232.6 L 351.6 229 L 353.3 227.5 L 356.9 224.7 L 359.9 222.3 L 362.2 220.6 L 366.4 217.2 L 367.5 216.3 L 372.8 212.4 L 373.4 212 L 378.2 209.1 L 382 206.8 L 383.5 205.9 L 388.8 202.9 L 391.1 201.7 L 394.1 200.3 L 399.4 198.1 L 403.4 196.5 L 404.7 196 L 410 194 L 415.4 191.9 L 416.9 191.4 L 420.7 190.1 L 426 189 L 431.3 188 L 436.6 187.1 L 441.9 186.6 L 447.3 186.5 L 452.6 186.7 L 457.9 187.2 L 463.2 188 L 468.5 188.8 L 473.8 189.6 L 479.2 190.3 L 484.5 190.7 L 489.8 190.8 L 495.1 190.7 L 500.4 190.2 L 505.7 189.3 L 511 188 L 516.4 186.5 L 517.9 186.2 L 521.7 185.5 L 527 184.6 L 532.3 183.2 L 537.6 181.2 L 537.9 181 L 542.9 178.8 L 548.3 176.3 L 549.1 175.9 L 553.6 173.8 L 558.9 171.4 L 560.6 170.7 L 564.2 169.5 L 569.5 167.6 L 569.5 165.6 L 569.5 160.4 L 569.5 155.3 L 569.5 150.1 L 569.5 148.6 L 566.7 150.1 L 564.2 151.2 L 558.9 153.3 L 554.3 155.3 L 553.6 155.6 L 548.3 157.9 L 542.9 160.2 L 542.4 160.4 L 537.6 162 L 532.3 163.9 L 527.9 165.6 L 527 165.9 L 521.7 167.3 L 516.4 167.7 L 511 168.9 L 505.7 170.4 L 504.1 170.7 L 500.4 171.4 L 495.1 172.1 L 489.8 172.5 L 484.5 172.8 L 479.2 172.7 L 473.8 172.4 L 468.5 172 L 463.2 171.6 L 457.9 171.3 L 452.6 171.2 L 447.3 171.4 L 441.9 171.7 L 436.6 172.4 L 431.3 173.3 L 426 174.4 L 420.7 175.8 L 420.5 175.9 L 415.4 177.4 L 410 178.7 L 404.7 180 L 402.1 181 L 399.4 182.1 L 394.1 184.6 L 390.3 186.2 L 388.8 186.9 L 383.5 189.3 L 379.5 191.4 L 378.2 192.1 L 372.8 195.4 L 371 196.5 L 367.5 198.7 L 362.4 201.7 L 362.2 201.8 L 356.9 205.4 L 354.6 206.8 L 351.6 208.9 L 346.3 212 L 346.2 212 L 340.9 215.7 L 338.4 217.2 L 335.6 218.9 L 330.3 221.3 L 326.5 222.3 L 325 222.8 L 319.7 223.4 L 314.4 223 L 311.1 222.3 L 309 221.9 L 303.7 220.4 L 298.4 218.5 L 295.4 217.2 L 293.1 216.3 L 287.8 213.8 L 284.5 212 L 282.5 211 L 277.2 208.1 L 274.6 206.8 L 271.8 205.5 L 266.5 203.2 L 263.2 201.7 L 261.2 200.8 L 255.9 198.5 L 251.6 196.5 L 250.6 196 L 245.3 193.9 L 239.9 192.2 L 236.7 191.4 L 234.6 190.8 L 229.3 189.7 L 224 188.8 L 218.7 188.2 L 213.4 187.9 L 208 188 L 202.7 188.5 L 197.4 189.2 L 192.1 190.2 L 187.2 191.4 L 186.8 191.5 L 181.5 193 L 176.2 194.8 L 171.4 196.5 L 170.8 196.8 L 165.5 198.8 L 160.2 200.8 L 157.6 201.7 L 154.9 202.7 L 149.6 204.6 L 144.3 206.3 L 142.1 206.8 L 138.9 207.7 L 133.6 208.8 L 128.3 209.3 L 123 209.2 L 117.7 208.4 L 112.4 207.2 L 111.1 206.8 L 107.1 205.9 L 101.7 204.7 L 96.4 203.3 L 91.1 201.8 L 90.8 201.7 L 85.8 200.2 L 80.5 198.7 L 75.2 197.3 L 72.2 196.5 L 69.8 196 L 69.8 196.5 L 69.8 201.7 L 69.8 206.8 L 69.8 210.2 L 75.2 211.8 L 75.7 212 L 80.5 213.9 L 85.8 216.2 L 88.3 217.2 L 91.1 218.3 L 96.4 220.2 L 101.7 222.2 L 102.1 222.3 L 107.1 224.3 L 112.4 226.2 L 116.3 227.5 L 117.7 228 L 123 229.4 L 128.3 229.9 L 133.6 229.1 L 138.3 227.5 L 138.9 227.3 L 144.3 224.9 L 149.1 222.3 L 149.6 222.1 L 154.9 219.3 L 158.7 217.2 L 160.2 216.5 L 165.5 214.1 L 170.6 212 L 170.8 211.9 L 176.2 209.9 L 181.5 208 L 184.9 206.8 L 186.8 206.2 L 192.1 204.7 L 197.4 203.3 L 202.7 202.3 L 207.3 201.7 L 208 201.6 L 213.4 201.3 L 218.7 201.4 L 222 201.7 L 224 201.8 L 229.3 202.5 L 234.6 203.6 L 239.9 205 L 245.3 206.7 L 245.7 206.8 L 250.6 208.8 L 255.9 211.2 L 257.6 212 L 261.2 213.9 L 266.5 216.7 L 267.5 217.2 L 271.8 219.8 L 276 222.3 L 277.2 223.2 L 282.5 226.9 L 283.4 227.5 L 287.8 230.8 L 290.4 232.6 L 293.1 234.8 L 297.3 237.8 L 298.4 238.7 L 303.7 242.6 L 304.2 243 L 309 246.5 L 311.9 248.1 z" clip-path="url(#p965ad97212)" style="fill: #00ffe9; fill-opacity: 0.9"/>
<path d="M 564.2 357.7 L 569.5 359.6 L 569.5 356.4 L 569.5 351.3 L 569.5 346.1 L 569.5 341 L 569.5 340.2 L 564.2 338.2 L 558.9 336 L 558.5 335.8 L 553.6 333.5 L 548.3 331 L 547.4 330.7 L 542.9 328.4 L 537.6 326 L 536.5 325.5 L 532.3 323.6 L 527 321.6 L 523.3 320.3 L 521.7 319.7 L 516.4 317.9 L 511 316.3 L 505.7 315.2 L 505.6 315.2 L 500.4 314.8 L 495.1 315 L 493.1 315.2 L 489.8 315.5 L 484.5 316.1 L 479.2 317 L 473.8 318 L 468.5 319.1 L 463.5 320.3 L 463.2 320.4 L 457.9 321.6 L 452.6 322.7 L 447.3 323.4 L 441.9 323.6 L 436.6 323.3 L 431.3 322.5 L 426 321.7 L 420.7 321 L 418.3 320.3 L 415.4 319.5 L 410 317.5 L 404.7 315.4 L 404.3 315.2 L 399.4 312.8 L 394.4 310 L 394.1 309.9 L 388.8 306.5 L 386.2 304.9 L 383.5 302.9 L 379.1 299.7 L 378.2 298.9 L 373 294.5 L 372.8 294.4 L 368.4 289.4 L 367.5 288.2 L 364.5 284.2 L 362.2 280.3 L 361.5 279.1 L 359.1 273.9 L 357.4 268.7 L 356.9 264.6 L 356.8 263.6 L 356.9 262.6 L 357.4 258.4 L 359.1 253.3 L 361.5 248.1 L 362.2 246.9 L 364.5 243 L 367.5 238.9 L 368.4 237.8 L 372.8 232.8 L 373 232.6 L 378.2 228.2 L 379.1 227.5 L 383.5 224.3 L 386.2 222.3 L 388.8 220.7 L 394.1 217.3 L 394.4 217.2 L 399.4 214.4 L 404.3 212 L 404.7 211.8 L 410 209.7 L 415.4 207.7 L 418.3 206.8 L 420.7 206.2 L 426 205.5 L 431.3 204.7 L 436.6 203.9 L 441.9 203.5 L 447.3 203.8 L 452.6 204.5 L 457.9 205.5 L 463.2 206.8 L 463.5 206.8 L 468.5 208.1 L 473.8 209.2 L 479.2 210.2 L 484.5 211 L 489.8 211.7 L 493.1 212 L 495.1 212.2 L 500.4 212.4 L 505.6 212 L 505.7 212 L 511 210.8 L 516.4 209.2 L 521.7 207.4 L 523.3 206.8 L 527 205.6 L 532.3 203.5 L 536.5 201.7 L 537.6 201.2 L 542.9 198.7 L 547.4 196.5 L 548.3 196.2 L 553.6 193.7 L 558.5 191.4 L 558.9 191.2 L 564.2 189 L 569.5 187 L 569.5 186.2 L 569.5 181 L 569.5 175.9 L 569.5 170.7 L 569.5 167.6 L 564.2 169.5 L 560.6 170.7 L 558.9 171.4 L 553.6 173.8 L 549.1 175.9 L 548.3 176.3 L 542.9 178.8 L 537.9 181 L 537.6 181.2 L 532.3 183.2 L 527 184.6 L 521.7 185.5 L 517.9 186.2 L 516.4 186.5 L 511 188 L 505.7 189.3 L 500.4 190.2 L 495.1 190.7 L 489.8 190.8 L 484.5 190.7 L 479.2 190.3 L 473.8 189.6 L 468.5 188.8 L 463.2 188 L 457.9 187.2 L 452.6 186.7 L 447.3 186.5 L 441.9 186.6 L 436.6 187.1 L 431.3 188 L 426 189 L 420.7 190.1 L 416.9 191.4 L 415.4 191.9 L 410 194 L 404.7 196 L 403.4 196.5 L 399.4 198.1 L 394.1 200.3 L 391.1 201.7 L 388.8 202.9 L 383.5 205.9 L 382 206.8 L 378.2 209.1 L 373.4 212 L 372.8 212.4 L 367.5 216.3 L 366.4 217.2 L 362.2 220.6 L 359.9 222.3 L 356.9 224.7 L 353.3 227.5 L 351.6 229 L 347.4 232.6 L 346.3 233.7 L 341.6 237.8 L 340.9 238.5 L 335.6 242.9 L 335.6 243 L 330.3 247 L 328.2 248.1 L 325 249.8 L 319.7 250.9 L 314.4 249.5 L 311.9 248.1 L 309 246.5 L 304.2 243 L 303.7 242.6 L 298.4 238.7 L 297.3 237.8 L 293.1 234.8 L 290.4 232.6 L 287.8 230.8 L 283.4 227.5 L 282.5 226.9 L 277.2 223.2 L 276 222.3 L 271.8 219.8 L 267.5 217.2 L 266.5 216.7 L 261.2 213.9 L 257.6 212 L 255.9 211.2 L 250.6 208.8 L 245.7 206.8 L 245.3 206.7 L 239.9 205 L 234.6 203.6 L 229.3 202.5 L 224 201.8 L 222 201.7 L 218.7 201.4 L 213.4 201.3 L 208 201.6 L 207.3 201.7 L 202.7 202.3 L 197.4 203.3 L 192.1 204.7 L 186.8 206.2 L 184.9 206.8 L 181.5 208 L 176.2 209.9 L 170.8 211.9 L 170.6 212 L 165.5 214.1 L 160.2 216.5 L 158.7 217.2 L 154.9 219.3 L 149.6 222.1 L 149.1 222.3 L 144.3 224.9 L 138.9 227.3 L 138.3 227.5 L 133.6 229.1 L 128.3 229.9 L 123 229.4 L 117.7 228 L 116.3 227.5 L 112.4 226.2 L 107.1 224.3 L 102.1 222.3 L 101.7 222.2 L 96.4 220.2 L 91.1 218.3 L 88.3 217.2 L 85.8 216.2 L 80.5 213.9 L 75.7 212 L 75.2 211.8 L 69.8 210.2 L 69.8 212 L 69.8 217.2 L 69.8 222.3 L 69.8 227.5 L 69.8 227.6 L 75.2 230.7 L 78.3 232.6 L 80.5 234.3 L 85.3 237.8 L 85.8 238.2 L 91.1 242.8 L 91.3 243 L 96 248.1 L 96.4 248.9 L 99.3 253.3 L 101.4 258.4 L 101.7 259.7 L 102.7 263.6 L 101.7 267.5 L 101.4 268.7 L 99.3 273.9 L 96.4 278.3 L 96 279.1 L 91.3 284.2 L 91.1 284.4 L 85.8 288.9 L 85.3 289.4 L 80.5 292.9 L 78.3 294.5 L 75.2 296.5 L 69.8 299.5 L 69.8 299.7 L 69.8 304.9 L 69.8 310 L 69.8 315.2 L 69.8 317 L 75.2 315.4 L 75.7 315.2 L 80.5 313.3 L 85.8 311 L 88.3 310 L 91.1 308.9 L 96.4 306.9 L 101.7 305 L 102.1 304.9 L 107.1 302.9 L 112.4 300.9 L 116.3 299.7 L 117.7 299.2 L 123 297.8 L 128.3 297.2 L 133.6 298.1 L 138.3 299.7 L 138.9 299.9 L 144.3 302.2 L 149.1 304.9 L 149.6 305.1 L 154.9 307.9 L 158.7 310 L 160.2 310.7 L 165.5 313 L 170.6 315.2 L 170.8 315.3 L 176.2 317.3 L 181.5 319.2 L 184.9 320.3 L 186.8 320.9 L 192.1 322.5 L 197.4 323.9 L 202.7 324.9 L 207.3 325.5 L 208 325.6 L 213.4 325.8 L 218.7 325.7 L 222 325.5 L 224 325.4 L 229.3 324.6 L 234.6 323.6 L 239.9 322.2 L 245.3 320.5 L 245.7 320.3 L 250.6 318.3 L 255.9 316 L 257.6 315.2 L 261.2 313.3 L 266.5 310.5 L 267.5 310 L 271.8 307.4 L 276 304.9 L 277.2 304 L 282.5 300.3 L 283.4 299.7 L 287.8 296.4 L 290.4 294.5 L 293.1 292.4 L 297.3 289.4 L 298.4 288.4 L 303.7 284.5 L 304.2 284.2 L 309 280.7 L 311.9 279.1 L 314.4 277.7 L 319.7 276.3 L 325 277.4 L 328.2 279.1 L 330.3 280.2 L 335.6 284.2 L 335.6 284.2 L 340.9 288.7 L 341.6 289.4 L 346.3 293.4 L 347.4 294.5 L 351.6 298.2 L 353.3 299.7 L 356.9 302.5 L 359.9 304.9 L 362.2 306.5 L 366.4 310 L 367.5 310.9 L 372.8 314.8 L 373.4 315.2 L 378.2 318.1 L 382 320.3 L 383.5 321.2 L 388.8 324.3 L 391.1 325.5 L 394.1 326.9 L 399.4 329.1 L 403.4 330.7 L 404.7 331.2 L 410 333.2 L 415.4 335.3 L 416.9 335.8 L 420.7 337.1 L 426 338.2 L 431.3 339.2 L 436.6 340.1 L 441.9 340.6 L 447.3 340.7 L 452.6 340.5 L 457.9 340 L 463.2 339.2 L 468.5 338.3 L 473.8 337.5 L 479.2 336.9 L 484.5 336.5 L 489.8 336.4 L 495.1 336.5 L 500.4 337 L 505.7 337.9 L 511 339.2 L 516.4 340.7 L 517.9 341 L 521.7 341.6 L 527 342.6 L 532.3 344 L 537.6 346 L 537.9 346.1 L 542.9 348.4 L 548.3 350.9 L 549.1 351.3 L 553.6 353.4 L 558.9 355.8 L 560.6 356.4 z M 210.3 310 L 208 309.8 L 202.7 308.8 L 197.4 307.4 L 192.1 305.7 L 190 304.9 L 186.8 303.4 L 181.5 300.7 L 179.7 299.7 L 176.2 297.4 L 172.2 294.5 L 170.8 293.4 L 166.1 289.4 L 165.5 288.8 L 161.1 284.2 L 160.2 283 L 157.2 279.1 L 154.9 274.7 L 154.4 273.9 L 152.3 268.7 L 151.3 263.6 L 152.3 258.4 L 154.4 253.3 L 154.9 252.5 L 157.2 248.1 L 160.2 244.1 L 161.1 243 L 165.5 238.3 L 166.1 237.8 L 170.8 233.7 L 172.2 232.6 L 176.2 229.8 L 179.7 227.5 L 181.5 226.5 L 186.8 223.7 L 190 222.3 L 192.1 221.5 L 197.4 219.8 L 202.7 218.4 L 208 217.4 L 210.3 217.2 L 213.4 216.9 L 218.7 216.8 L 224 217.1 L 224.2 217.2 L 229.3 218 L 234.6 219.4 L 239.9 221.1 L 243.4 222.3 L 245.3 223.1 L 250.6 226 L 253 227.5 L 255.9 229.4 L 260.4 232.6 L 261.2 233.3 L 266.5 237.8 L 266.5 237.8 L 271.2 243 L 271.8 243.8 L 274.8 248.1 L 277.2 252.9 L 277.3 253.3 L 279.2 258.4 L 279.9 263.6 L 279.2 268.7 L 277.3 273.9 L 277.2 274.3 L 274.8 279.1 L 271.8 283.3 L 271.2 284.2 L 266.5 289.3 L 266.5 289.4 L 261.2 293.9 L 260.4 294.5 L 255.9 297.7 L 253 299.7 L 250.6 301.2 L 245.3 304.1 L 243.4 304.9 L 239.9 306.1 L 234.6 307.8 L 229.3 309.2 L 224.2 310 L 224 310.1 L 218.7 310.4 L 213.4 310.3 z" clip-path="url(#p965ad97212)" style="fill: #009eff; fill-opacity: 0.9"/>
<path d="M 558.9 336 L 564.2 338.2 L 569.5 340.2 L 569.5 335.8 L 569.5 330.7 L 569.5 325.5 L 569.5 320.3 L 569.5 318.4 L 564.2 315.2 L 564.2 315.1 L 558.9 311.4 L 556.7 310 L 553.6 307.9 L 549 304.9 L 548.3 304.3 L 542.9 300.7 L 541.3 299.7 L 537.6 297.1 L 533.8 294.5 L 532.3 293.3 L 527.6 289.4 L 527 288.8 L 521.8 284.2 L 521.7 284.1 L 516.4 279.2 L 516.1 279.1 L 511.1 273.9 L 511 273.8 L 506.4 268.7 L 505.7 266.4 L 500.4 265.4 L 499.2 268.7 L 495.1 271.8 L 493.5 273.9 L 489.8 276.6 L 487.4 279.1 L 484.5 281.1 L 480.8 284.2 L 479.2 285.3 L 473.8 288.8 L 473 289.4 L 468.5 291.8 L 463.2 294.4 L 463 294.5 L 457.9 296.6 L 452.6 298.4 L 448.2 299.7 L 447.3 299.9 L 441.9 300.8 L 436.6 301.2 L 431.3 301 L 426 300.4 L 422.4 299.7 L 420.7 299.3 L 415.4 297.7 L 410 295 L 409.4 294.5 L 404.7 290.4 L 403.5 289.4 L 399.4 285.8 L 397.6 284.2 L 394.1 280.4 L 392.9 279.1 L 389.6 273.9 L 388.8 272.2 L 387.4 268.7 L 386.6 263.6 L 387.4 258.4 L 388.8 255 L 389.6 253.3 L 392.9 248.1 L 394.1 246.7 L 397.6 243 L 399.4 241.3 L 403.5 237.8 L 404.7 236.7 L 409.4 232.6 L 410 232.2 L 415.4 229.4 L 420.7 227.9 L 422.4 227.5 L 426 226.8 L 431.3 226.2 L 436.6 226 L 441.9 226.4 L 447.3 227.2 L 448.2 227.5 L 452.6 228.7 L 457.9 230.6 L 463 232.6 L 463.2 232.7 L 468.5 235.4 L 473 237.8 L 473.8 238.4 L 479.2 241.9 L 480.8 243 L 484.5 246 L 487.4 248.1 L 489.8 250.5 L 493.5 253.3 L 495.1 255.4 L 499.2 258.4 L 500.4 261.7 L 505.7 260.8 L 506.4 258.4 L 511 253.4 L 511.1 253.3 L 516.1 248.1 L 516.4 248 L 521.7 243.1 L 521.8 243 L 527 238.4 L 527.6 237.8 L 532.3 233.9 L 533.8 232.6 L 537.6 230.1 L 541.3 227.5 L 542.9 226.4 L 548.3 222.8 L 549 222.3 L 553.6 219.3 L 556.7 217.2 L 558.9 215.8 L 564.2 212 L 564.2 212 L 569.5 208.8 L 569.5 206.8 L 569.5 201.7 L 569.5 196.5 L 569.5 191.4 L 569.5 187 L 564.2 189 L 558.9 191.2 L 558.5 191.4 L 553.6 193.7 L 548.3 196.2 L 547.4 196.5 L 542.9 198.7 L 537.6 201.2 L 536.5 201.7 L 532.3 203.5 L 527 205.6 L 523.3 206.8 L 521.7 207.4 L 516.4 209.2 L 511 210.8 L 505.7 212 L 505.6 212 L 500.4 212.4 L 495.1 212.2 L 493.1 212 L 489.8 211.7 L 484.5 211 L 479.2 210.2 L 473.8 209.2 L 468.5 208.1 L 463.5 206.8 L 463.2 206.8 L 457.9 205.5 L 452.6 204.5 L 447.3 203.8 L 441.9 203.5 L 436.6 203.9 L 431.3 204.7 L 426 205.5 L 420.7 206.2 L 418.3 206.8 L 415.4 207.7 L 410 209.7 L 404.7 211.8 L 404.3 212 L 399.4 214.4 L 394.4 217.2 L 394.1 217.3 L 388.8 220.7 L 386.2 222.3 L 383.5 224.3 L 379.1 227.5 L 378.2 228.2 L 373 232.6 L 372.8 232.8 L 368.4 237.8 L 367.5 238.9 L 364.5 243 L 362.2 246.9 L 361.5 248.1 L 359.1 253.3 L 357.4 258.4 L 356.9 262.6 L 356.8 263.6 L 356.9 264.6 L 357.4 268.7 L 359.1 273.9 L 361.5 279.1 L 362.2 280.3 L 364.5 284.2 L 367.5 288.2 L 368.4 289.4 L 372.8 294.4 L 373 294.5 L 378.2 298.9 L 379.1 299.7 L 383.5 302.9 L 386.2 304.9 L 388.8 306.5 L 394.1 309.9 L 394.4 310 L 399.4 312.8 L 404.3 315.2 L 404.7 315.4 L 410 317.5 L 415.4 319.5 L 418.3 320.3 L 420.7 321 L 426 321.7 L 431.3 322.5 L 436.6 323.3 L 441.9 323.6 L 447.3 323.4 L 452.6 322.7 L 457.9 321.6 L 463.2 320.4 L 463.5 320.3 L 468.5 319.1 L 473.8 318 L 479.2 317 L 484.5 316.1 L 489.8 315.5 L 493.1 315.2 L 495.1 315 L 500.4 314.8 L 505.6 315.2 L 505.7 315.2 L 511 316.3 L 516.4 317.9 L 521.7 319.7 L 523.3 320.3 L 527 321.6 L 532.3 323.6 L 536.5 325.5 L 537.6 326 L 542.9 328.4 L 547.4 330.7 L 548.3 331 L 553.6 333.5 L 558.5 335.8 z M 213.4 310.3 L 218.7 310.4 L 224 310.1 L 224.2 310 L 229.3 309.2 L 234.6 307.8 L 239.9 306.1 L 243.4 304.9 L 245.3 304.1 L 250.6 301.2 L 253 299.7 L 255.9 297.7 L 260.4 294.5 L 261.2 293.9 L 266.5 289.4 L 266.5 289.3 L 271.2 284.2 L 271.8 283.3 L 274.8 279.1 L 277.2 274.3 L 277.3 273.9 L 279.2 268.7 L 279.9 263.6 L 279.2 258.4 L 277.3 253.3 L 277.2 252.9 L 274.8 248.1 L 271.8 243.8 L 271.2 243 L 266.5 237.8 L 266.5 237.8 L 261.2 233.3 L 260.4 232.6 L 255.9 229.4 L 253 227.5 L 250.6 226 L 245.3 223.1 L 243.4 222.3 L 239.9 221.1 L 234.6 219.4 L 229.3 218 L 224.2 217.2 L 224 217.1 L 218.7 216.8 L 213.4 216.9 L 210.3 217.2 L 208 217.4 L 202.7 218.4 L 197.4 219.8 L 192.1 221.5 L 190 222.3 L 186.8 223.7 L 181.5 226.5 L 179.7 227.5 L 176.2 229.8 L 172.2 232.6 L 170.8 233.7 L 166.1 237.8 L 165.5 238.3 L 161.1 243 L 160.2 244.1 L 157.2 248.1 L 154.9 252.5 L 154.4 253.3 L 152.3 258.4 L 151.3 263.6 L 152.3 268.7 L 154.4 273.9 L 154.9 274.7 L 157.2 279.1 L 160.2 283 L 161.1 284.2 L 165.5 288.8 L 166.1 289.4 L 170.8 293.4 L 172.2 294.5 L 176.2 297.4 L 179.7 299.7 L 181.5 300.7 L 186.8 303.4 L 190 304.9 L 192.1 305.7 L 197.4 307.4 L 202.7 308.8 L 208 309.8 L 210.3 310 z M 206.5 284.2 L 202.7 282.2 L 198.1 279.1 L 197.4 278.4 L 193.8 273.9 L 192.1 270.8 L 191.2 268.7 L 190.3 263.6 L 191.2 258.4 L 192.1 256.4 L 193.8 253.3 L 197.4 248.8 L 198.1 248.1 L 202.7 244.9 L 206.5 243 L 208 242.4 L 213.4 241.1 L 218.7 240.6 L 224 241.1 L 229.3 242.5 L 230.2 243 L 234.6 245.6 L 238 248.1 L 239.9 250.2 L 242.5 253.3 L 245.3 258 L 245.5 258.4 L 246.8 263.6 L 245.5 268.7 L 245.3 269.2 L 242.5 273.9 L 239.9 276.9 L 238 279.1 L 234.6 281.6 L 230.2 284.2 L 229.3 284.6 L 224 286.1 L 218.7 286.6 L 213.4 286.1 L 208 284.8 z M 75.2 296.5 L 78.3 294.5 L 80.5 292.9 L 85.3 289.4 L 85.8 288.9 L 91.1 284.4 L 91.3 284.2 L 96 279.1 L 96.4 278.3 L 99.3 273.9 L 101.4 268.7 L 101.7 267.5 L 102.7 263.6 L 101.7 259.7 L 101.4 258.4 L 99.3 253.3 L 96.4 248.9 L 96 248.1 L 91.3 243 L 91.1 242.8 L 85.8 238.2 L 85.3 237.8 L 80.5 234.3 L 78.3 232.6 L 75.2 230.7 L 69.8 227.6 L 69.8 232.6 L 69.8 237.8 L 69.8 243 L 69.8 248.1 L 69.8 253.3 L 69.8 258.4 L 69.8 263.6 L 69.8 268.7 L 69.8 273.9 L 69.8 279.1 L 69.8 284.2 L 69.8 289.4 L 69.8 294.5 L 69.8 299.5 z" clip-path="url(#p965ad97212)" style="fill: #0027ff; fill-opacity: 0.9"/>
<path d="M 569.5 318.4 L 569.5 315.2 L 569.5 310 L 569.5 304.9 L 569.5 299.7 L 569.5 294.5 L 569.5 289.4 L 569.5 284.2 L 569.5 283.9 L 567.3 279.1 L 565.5 273.9 L 564.2 268.7 L 564.2 268.5 L 563.5 263.6 L 564.2 258.7 L 564.2 258.4 L 565.5 253.3 L 567.3 248.1 L 569.5 243.3 L 569.5 243 L 569.5 237.8 L 569.5 232.6 L 569.5 227.5 L 569.5 222.3 L 569.5 217.2 L 569.5 212 L 569.5 208.8 L 564.2 212 L 564.2 212 L 558.9 215.8 L 556.7 217.2 L 553.6 219.3 L 549 222.3 L 548.3 222.8 L 542.9 226.4 L 541.3 227.5 L 537.6 230.1 L 533.8 232.6 L 532.3 233.9 L 527.6 237.8 L 527 238.4 L 521.8 243 L 521.7 243.1 L 516.4 248 L 516.1 248.1 L 511.1 253.3 L 511 253.4 L 506.4 258.4 L 505.7 260.8 L 500.4 261.7 L 499.2 258.4 L 495.1 255.4 L 493.5 253.3 L 489.8 250.5 L 487.4 248.1 L 484.5 246 L 480.8 243 L 479.2 241.9 L 473.8 238.4 L 473 237.8 L 468.5 235.4 L 463.2 232.7 L 463 232.6 L 457.9 230.6 L 452.6 228.7 L 448.2 227.5 L 447.3 227.2 L 441.9 226.4 L 436.6 226 L 431.3 226.2 L 426 226.8 L 422.4 227.5 L 420.7 227.9 L 415.4 229.4 L 410 232.2 L 409.4 232.6 L 404.7 236.7 L 403.5 237.8 L 399.4 241.3 L 397.6 243 L 394.1 246.7 L 392.9 248.1 L 389.6 253.3 L 388.8 255 L 387.4 258.4 L 386.6 263.6 L 387.4 268.7 L 388.8 272.2 L 389.6 273.9 L 392.9 279.1 L 394.1 280.4 L 397.6 284.2 L 399.4 285.8 L 403.5 289.4 L 404.7 290.4 L 409.4 294.5 L 410 295 L 415.4 297.7 L 420.7 299.3 L 422.4 299.7 L 426 300.4 L 431.3 301 L 436.6 301.2 L 441.9 300.8 L 447.3 299.9 L 448.2 299.7 L 452.6 298.4 L 457.9 296.6 L 463 294.5 L 463.2 294.4 L 468.5 291.8 L 473 289.4 L 473.8 288.8 L 479.2 285.3 L 480.8 284.2 L 484.5 281.1 L 487.4 279.1 L 489.8 276.6 L 493.5 273.9 L 495.1 271.8 L 499.2 268.7 L 500.4 265.4 L 505.7 266.4 L 506.4 268.7 L 511 273.8 L 511.1 273.9 L 516.1 279.1 L 516.4 279.2 L 521.7 284.1 L 521.8 284.2 L 527 288.8 L 527.6 289.4 L 532.3 293.3 L 533.8 294.5 L 537.6 297.1 L 541.3 299.7 L 542.9 300.7 L 548.3 304.3 L 549 304.9 L 553.6 307.9 L 556.7 310 L 558.9 311.4 L 564.2 315.1 L 564.2 315.2 z M 208 284.8 L 213.4 286.1 L 218.7 286.6 L 224 286.1 L 229.3 284.6 L 230.2 284.2 L 234.6 281.6 L 238 279.1 L 239.9 276.9 L 242.5 273.9 L 245.3 269.2 L 245.5 268.7 L 246.8 263.6 L 245.5 258.4 L 245.3 258 L 242.5 253.3 L 239.9 250.2 L 238 248.1 L 234.6 245.6 L 230.2 243 L 229.3 242.5 L 224 241.1 L 218.7 240.6 L 213.4 241.1 L 208 242.4 L 206.5 243 L 202.7 244.9 L 198.1 248.1 L 197.4 248.8 L 193.8 253.3 L 192.1 256.4 L 191.2 258.4 L 190.3 263.6 L 191.2 268.7 L 192.1 270.8 L 193.8 273.9 L 197.4 278.4 L 198.1 279.1 L 202.7 282.2 L 206.5 284.2 z" clip-path="url(#p965ad97212)" style="fill: #0000d7; fill-opacity: 0.9"/>
<path d="M 569.5 283.9 L 569.5 279.1 L 569.5 273.9 L 569.5 268.7 L 569.5 263.6 L 569.5 258.4 L 569.5 253.3 L 569.5 248.1 L 569.5 243.3 L 567.3 248.1 L 565.5 253.3 L 564.2 258.4 L 564.2 258.7 L 563.5 263.6 L 564.2 268.5 L 564.2 268.7 L 565.5 273.9 L 567.3 279.1 z" clip-path="url(#p965ad97212)" style="fill: #00009c; fill-opacity: 0.9"/>
</g>
<g id="matplotlib.axis_1">
<g id="xtick_1">
<g id="line2d_1">
<path d="M 69.8 480.6 L 69.8 47.2" clip-path="url(#p965ad97212)" style="fill: none; stroke: #b0b0b0; stroke-opacity: 0.3; stroke-width: 0.8; stroke-linecap: square"/>
</g>
<g id="line2d_2">
<defs>
<path id="m574fcf24b0" d="M 0 0 L 0 4.5" style="stroke: #000000; stroke-width: 0.8"/>
</defs>
<g>
<use href="#m574fcf24b0" x="69.84" y="480.60" style="stroke: #000000; stroke-width: 0.8"/>
</g>
</g>
<g id="text_1">
<text style="font-size: 8px; font-family: 'DejaVu Sans', sans-serif; text-anchor: middle" x="69.84" y="495.28" transform="rotate(-0 69.84 495.27875)">0</text>
</g>
</g>
<g id="xtick_2">
<g id="line2d_3">
<path d="M 176.2 480.6 L 176.2 47.2" clip-path="url(#p965ad97212)" style="fill: none; stroke: #b0b0b0; stroke-opacity: 0.3; stroke-width: 0.8; stroke-linecap: square"/>
</g>
<g id="line2d_4">
<g>
<use href="#m574fcf24b0" x="176.16" y="480.60" style="stroke: #000000; stroke-width: 0.8"/>
</g>
</g>
<g id="text_2">
<text style="font-size: 8px; font-family: 'DejaVu Sans', sans-serif; text-anchor: middle" x="176.16" y="495.28" transform="rotate(-0 176.1552 495.27875)">2</text>
</g>
</g>
<g id="xtick_3">
<g id="line2d_5">
<path d="M 282.5 480.6 L 282.5 47.2" clip-path="url(#p965ad97212)" style="fill: none; stroke: #b0b0b0; stroke-opacity: 0.3; stroke-width: 0.8; stroke-linecap: square"/>
</g>
<g id="line2d_6">
<g>
<use href="#m574fcf24b0" x="282.47" y="480.60" style="stroke: #000000; stroke-width: 0.8"/>
</g>
</g>
<g id="text_3">
<text style="font-size: 8px; font-family: 'DejaVu Sans', sans-serif; text-anchor: middle" x="282.47" y="495.28" transform="rotate(-0 282.4704 495.27875)">4</text>
</g>
</g>
<g id="xtick_4">
<g id="line2d_7">
<path d="M 388.8 480.6 L 388.8 47.2" clip-path="url(#p965ad97212)" style="fill: none; stroke: #b0b0b0; stroke-opacity: 0.3; stroke-width: 0.8; stroke-linecap: square"/>
</g>
<g id="line2d_8">
<g>
<use href="#m574fcf24b0" x="388.79" y="480.60" style="stroke: #000000; stroke-width: 0.8"/>
</g>
</g>
<g id="text_4">
<text style="font-size: 8px; font-family: 'DejaVu Sans', sans-serif; text-anchor: middle" x="388.79" y="495.28" transform="rotate(-0 388.7856 495.27875)">6</text>
</g>
</g>
<g id="xtick_5">
<g id="line2d_9">
<path d="M 495.1 480.6 L 495.1 47.2" clip-path="url(#p965ad97212)" style="fill: none; stroke: #b0b0b0; stroke-opacity: 0.3; stroke-width: 0.8; stroke-linecap: square"/>
</g>
<g id="line2d_10">
<g>
<use href="#m574fcf24b0" x="495.10" y="480.60" style="stroke: #000000; stroke-width: 0.8"/>
</g>
</g>
<g id="text_5">
<text style="font-size: 8px; font-family: 'DejaVu Sans', sans-serif; text-anchor: middle" x="495.10" y="495.28" transform="rotate(-0 495.1008 495.27875)">8</text>
</g>
</g>
<g id="text_6">
<text style="font-size: 10px; font-family: 'DejaVu Sans', sans-serif; text-anchor: middle" x="320.04" y="509.84" transform="rotate(-0 320.04 509.840937)">X [m]</text>
</g>
</g>
<g id="matplotlib.axis_2">
<g id="ytick_1">
<g id="line2d_11">
<path d="M 43.6 454.5 L 596.5 454.5" clip-path="url(#p965ad97212)" style="fill: none; stroke: #b0b0b0; stroke-opacity: 0.3; stroke-width: 0.8; stroke-linecap: square"/>
</g>
<g id="line2d_12">
<defs>
<path id="md961aff218" d="M 0 0 L -4.5 0" style="stroke: #000000; stroke-width: 0.8"/>
</defs>
<g>
<use href="#md961aff218" x="43.56" y="454.46" style="stroke: #000000; stroke-width: 0.8"/>
</g>
</g>
<g id="text_7">
<text style="font-size: 8px; font-family: 'DejaVu Sans', sans-serif; text-anchor: end" x="34.41" y="457.50" transform="rotate(-0 34.41 457.503375)">0</text>
</g>
</g>
<g id="ytick_2">
<g id="line2d_13">
<path d="M 43.6 402.9 L 596.5 402.9" clip-path="url(#p965ad97212)" style="fill: none; stroke: #b0b0b0; stroke-opacity: 0.3; stroke-width: 0.8; stroke-linecap: square"/>
</g>
<g id="line2d_14">
<g>
<use href="#md961aff218" x="43.56" y="402.88" style="stroke: #000000; stroke-width: 0.8"/>
</g>
</g>
<g id="text_8">
<text style="font-size: 8px; font-family: 'DejaVu Sans', sans-serif; text-anchor: end" x="34.41" y="405.92" transform="rotate(-0 34.41 405.915375)">1</text>
</g>
</g>
<g id="ytick_3">
<g id="line2d_15">
<path d="M 43.6 351.3 L 596.5 351.3" clip-path="url(#p965ad97212)" style="fill: none; stroke: #b0b0b0; stroke-opacity: 0.3; stroke-width: 0.8; stroke-linecap: square"/>
</g>
<g id="line2d_16">
<g>
<use href="#md961aff218" x="43.56" y="351.29" style="stroke: #000000; stroke-width: 0.8"/>
</g>
</g>
<g id="text_9">
<text style="font-size: 8px; font-family: 'DejaVu Sans', sans-serif; text-anchor: end" x="34.41" y="354.33" transform="rotate(-0 34.41 354.327375)">2</text>
</g>
</g>
<g id="ytick_4">
<g id="line2d_17">
<path d="M 43.6 299.7 L 596.5 299.7" clip-path="url(#p965ad97212)" style="fill: none; stroke: #b0b0b0; stroke-opacity: 0.3; stroke-width: 0.8; stroke-linecap: square"/>
</g>
<g id="line2d_18">
<g>
<use href="#md961aff218" x="43.56" y="299.70" style="stroke: #000000; stroke-width: 0.8"/>
</g>
</g>
<g id="text_10">
<text style="font-size: 8px; font-family: 'DejaVu Sans', sans-serif; text-anchor: end" x="34.41" y="302.74" transform="rotate(-0 34.41 302.739375)">3</text>
</g>
</g>
<g id="ytick_5">
<g id="line2d_19">
<path d="M 43.6 248.1 L 596.5 248.1" clip-path="url(#p965ad97212)" style="fill: none; stroke: #b0b0b0; stroke-opacity: 0.3; stroke-width: 0.8; stroke-linecap: square"/>
</g>
<g id="line2d_20">
<g>
<use href="#md961aff218" x="43.56" y="248.11" style="stroke: #000000; stroke-width: 0.8"/>
</g>
</g>
<g id="text_11">
<text style="font-size: 8px; font-family: 'DejaVu Sans', sans-serif; text-anchor: end" x="34.41" y="251.15" transform="rotate(-0 34.41 251.151375)">4</text>
</g>
</g>
<g id="ytick_6">
<g id="line2d_21">
<path d="M 43.6 196.5 L 596.5 196.5" clip-path="url(#p965ad97212)" style="fill: none; stroke: #b0b0b0; stroke-opacity: 0.3; stroke-width: 0.8; stroke-linecap: square"/>
</g>
<g id="line2d_22">
<g>
<use href="#md961aff218" x="43.56" y="196.52" style="stroke: #000000; stroke-width: 0.8"/>
</g>
</g>
<g id="text_12">
<text style="font-size: 8px; font-family: 'DejaVu Sans', sans-serif; text-anchor: end" x="34.41" y="199.56" transform="rotate(-0 34.41 199.563375)">5</text>
</g>
</g>
<g id="ytick_7">
<g id="line2d_23">
<path d="M 43.6 144.9 L 596.5 144.9" clip-path="url(#p965ad97212)" style="fill: none; stroke: #b0b0b0; stroke-opacity: 0.3; stroke-width: 0.8; stroke-linecap: square"/>
</g>
<g id="line2d_24">
<g>
<use href="#md961aff218" x="43.56" y="144.94" style="stroke: #000000; stroke-width: 0.8"/>
</g>
</g>
<g id="text_13">
<text style="font-size: 8px; font-family: 'DejaVu Sans', sans-serif; text-anchor: end" x="34.41" y="147.98" transform="rotate(-0 34.41 147.975375)">6</text>
</g>
</g>
<g id="ytick_8">
<g id="line2d_25">
<path d="M 43.6 93.3 L 596.5 93.3" clip-path="url(#p965ad97212)" style="fill: none; stroke: #b0b0b0; stroke-opacity: 0.3; stroke-width: 0.8; stroke-linecap: square"/>
</g>
<g id="line2d_26">
<g>
<use href="#md961aff218" x="43.56" y="93.35" style="stroke: #000000; stroke-width: 0.8"/>
</g>
</g>
<g id="text_14">
<text style="font-size: 8px; font-family: 'DejaVu Sans', sans-serif; text-anchor: end" x="34.41" y="96.39" transform="rotate(-0 34.41 96.387375)">7</text>
</g>
</g>
<g id="text_15">
<text style="font-size: 10px; font-family: 'DejaVu Sans', sans-serif; text-anchor: middle" x="21.94" y="263.88" transform="rotate(-90 21.940312 263.88)">Y [m]</text>
</g>
</g>
<path d="M69.840 72.000V455.040M107.280 72.000V455.040M133.920 72.000V455.040M160.560 72.000V455.040M293.040 72.000V455.040M319.680 72.000V455.040M346.320 72.000V455.040M478.800 72.000V455.040M505.440 72.000V455.040M532.080 72.000V455.040M569.520 72.000V455.040M69.120 454.320H570.240M69.120 418.320H570.240M69.120 392.400H570.240M69.120 366.480H570.240M69.120 160.560H570.240M69.120 134.640H570.240M69.120 108.720H570.240M69.120 72.720H570.240M298.080 366.480V418.320M311.760 366.480V418.320M327.600 366.480V418.320M341.280 366.480V418.320M293.040 413.280H346.320M293.040 400.320H346.320M293.040 384.480H346.320M293.040 372.240H346.320M298.080 108.720V160.560M311.760 108.720V160.560M327.600 108.720V160.560M341.280 108.720V160.560M293.040 155.520H346.320M293.040 142.560H346.320M293.040 126.720H346.320M293.040 113.760H346.320" style="fill:none;stroke:#000;stroke-width:1.440"/><g id="patch_3">
<path d="M 43.6 480.6 L 43.6 47.2" style="fill: none; stroke: #000000; stroke-width: 0.9; stroke-linejoin: miter; stroke-linecap: square"/>
</g>
<g id="patch_4">
<path d="M 596.5 480.6 L 596.5 47.2" style="fill: none; stroke: #000000; stroke-width: 0.9; stroke-linejoin: miter; stroke-linecap: square"/>
</g>
<g id="patch_5">
<path d="M 43.6 480.6 L 596.5 480.6" style="fill: none; stroke: #000000; stroke-width: 0.9; stroke-linejoin: miter; stroke-linecap: square"/>
</g>
<g id="patch_6">
<path d="M 43.6 47.2 L 596.5 47.2" style="fill: none; stroke: #000000; stroke-width: 0.9; stroke-linejoin: miter; stroke-linecap: square"/>
</g>
<g id="text_16">
<g transform="translate(283.88572 447.049)">
<text>
<tspan x="0" y="-0.17" style="font-size: 11.5px; font-family: 'DejaVu Sans', sans-serif">−</tspan>
<tspan x="9.64" y="-0.17" style="font-size: 11.5px; font-family: 'DejaVu Sans', sans-serif">5</tspan>
<tspan x="16.95" y="-0.17" style="font-size: 11.5px; font-family: 'DejaVu Sans', sans-serif">.</tspan>
<tspan x="20.61" y="-0.17" style="font-size: 11.5px; font-family: 'DejaVu Sans', sans-serif">1</tspan>
<tspan x="27.92" y="-0.17" style="font-size: 11.5px; font-family: 'DejaVu Sans', sans-serif">9</tspan>
<tspan x="49.20" y="-0.17" style="font-size: 11.5px; font-family: 'DejaVu Sans', sans-serif">/</tspan>
<tspan x="35.24" y="-0.17" style="font-style: oblique; font-size: 11.5px; font-family: 'DejaVu Sans', sans-serif">k</tspan>
<tspan x="41.90" y="-0.17" style="font-style: oblique; font-size: 11.5px; font-family: 'DejaVu Sans', sans-serif">g</tspan>
<tspan x="53.08" y="-0.17" style="font-style: oblique; font-size: 11.5px; font-family: 'DejaVu Sans', sans-serif">c</tspan>
<tspan x="59.40" y="-0.17" style="font-style: oblique; font-size: 11.5px; font-family: 'DejaVu Sans', sans-serif">m</tspan>
<tspan x="71.16" y="-4.77" style="font-size: 8.05px; font-family: 'DejaVu Sans', sans-serif">2</tspan>
</text>
</g>
</g>
<g id="text_17">
<g transform="translate(533.72644 256.1734)">
<text>
<tspan x="0" y="-0.17" style="font-size: 11.5px; font-family: 'DejaVu Sans', sans-serif">−</tspan>
<tspan x="9.64" y="-0.17" style="font-size: 11.5px; font-family: 'DejaVu Sans', sans-serif">1</tspan>
<tspan x="16.95" y="-0.17" style="font-size: 11.5px; font-family: 'DejaVu Sans', sans-serif">.</tspan>
<tspan x="20.61" y="-0.17" style="font-size: 11.5px; font-family: 'DejaVu Sans', sans-serif">1</tspan>
<tspan x="27.92" y="-0.17" style="font-size: 11.5px; font-family: 'DejaVu Sans', sans-serif">5</tspan>
<tspan x="49.20" y="-0.17" style="font-size: 11.5px; font-family: 'DejaVu Sans', sans-serif">/</tspan>
<tspan x="35.24" y="-0.17" style="font-style: oblique; font-size: 11.5px; font-family: 'DejaVu Sans', sans-serif">k</tspan>
<tspan x="41.90" y="-0.17" style="font-style: oblique; font-size: 11.5px; font-family: 'DejaVu Sans', sans-serif">g</tspan>
<tspan x="53.08" y="-0.17" style="font-style: oblique; font-size: 11.5px; font-family: 'DejaVu Sans', sans-serif">c</tspan>
<tspan x="59.40" y="-0.17" style="font-style: oblique; font-size: 11.5px; font-family: 'DejaVu Sans', sans-serif">m</tspan>
<tspan x="71.16" y="-4.77" style="font-size: 8.05px; font-family: 'DejaVu Sans', sans-serif">2</tspan>
</text>
</g>
</g>
<g id="text_18">
<text style="font-weight: 700; font-size: 13px; font-family: 'DejaVu Sans', sans-serif" transform="translate(215.39 24.602844)">Presion de suelo - SERVICIO</text>
<text style="font-weight: 700; font-size: 13px; font-family: 'DejaVu Sans', sans-serif" transform="translate(289.34 39.16)">SAP2000</text>
</g>
</g>
<defs><linearGradient id="cbg" x1="0" y1="0" x2="0" y2="1"><stop offset="0.0000" stop-color="#000080"/><stop offset="0.1429" stop-color="#0000ff"/><stop offset="0.2857" stop-color="#00ffff"/><stop offset="0.4286" stop-color="#00ff00"/><stop offset="0.5714" stop-color="#ffff00"/><stop offset="0.7143" stop-color="#ff8000"/><stop offset="0.8571" stop-color="#ff0000"/><stop offset="1.0000" stop-color="#ff00ff"/></linearGradient></defs><rect x="623.16" y="90.36" width="17.28" height="346.10" fill="url(#cbg)" fill-opacity="0.9"/><g id="axes_2">
<g id="patch_7">
<path d="M 623.2 436.5 L 640.4 436.5 L 640.4 90.4 L 623.2 90.4 L 623.2 436.5 z" style="fill: none"/>
</g>
<g id="matplotlib.axis_3"/>
<g id="matplotlib.axis_4">
<g id="ytick_9">
<g id="line2d_27">
<defs>
<path id="m65f5682453" d="M 0 0 L 4.5 0" style="stroke: #000000; stroke-width: 0.9"/>
</defs>
<g>
<use href="#m65f5682453" x="640.44" y="420.36" style="stroke: #000000; stroke-width: 0.9"/>
</g>
</g>
<g id="text_19">
<text style="font-size: 10px; font-family: 'DejaVu Sans', sans-serif; text-anchor: start" x="650.09" y="424.16" transform="rotate(-0 650.09 424.161375)">−5.0</text>
</g>
</g>
<g id="ytick_10">
<g id="line2d_28">
<g>
<use href="#m65f5682453" x="640.44" y="377.54" style="stroke: #000000; stroke-width: 0.9"/>
</g>
</g>
<g id="text_20">
<text style="font-size: 10px; font-family: 'DejaVu Sans', sans-serif; text-anchor: start" x="650.09" y="381.34" transform="rotate(-0 650.09 381.337321)">−4.5</text>
</g>
</g>
<g id="ytick_11">
<g id="line2d_29">
<g>
<use href="#m65f5682453" x="640.44" y="334.71" style="stroke: #000000; stroke-width: 0.9"/>
</g>
</g>
<g id="text_21">
<text style="font-size: 10px; font-family: 'DejaVu Sans', sans-serif; text-anchor: start" x="650.09" y="338.51" transform="rotate(-0 650.09 338.513268)">−4.0</text>
</g>
</g>
<g id="ytick_12">
<g id="line2d_30">
<g>
<use href="#m65f5682453" x="640.44" y="291.89" style="stroke: #000000; stroke-width: 0.9"/>
</g>
</g>
<g id="text_22">
<text style="font-size: 10px; font-family: 'DejaVu Sans', sans-serif; text-anchor: start" x="650.09" y="295.69" transform="rotate(-0 650.09 295.689214)">−3.5</text>
</g>
</g>
<g id="ytick_13">
<g id="line2d_31">
<g>
<use href="#m65f5682453" x="640.44" y="249.07" style="stroke: #000000; stroke-width: 0.9"/>
</g>
</g>
<g id="text_23">
<text style="font-size: 10px; font-family: 'DejaVu Sans', sans-serif; text-anchor: start" x="650.09" y="252.87" transform="rotate(-0 650.09 252.865161)">−3.0</text>
</g>
</g>
<g id="ytick_14">
<g id="line2d_32">
<g>
<use href="#m65f5682453" x="640.44" y="206.24" style="stroke: #000000; stroke-width: 0.9"/>
</g>
</g>
<g id="text_24">
<text style="font-size: 10px; font-family: 'DejaVu Sans', sans-serif; text-anchor: start" x="650.09" y="210.04" transform="rotate(-0 650.09 210.041107)">−2.5</text>
</g>
</g>
<g id="ytick_15">
<g id="line2d_33">
<g>
<use href="#m65f5682453" x="640.44" y="163.42" style="stroke: #000000; stroke-width: 0.9"/>
</g>
</g>
<g id="text_25">
<text style="font-size: 10px; font-family: 'DejaVu Sans', sans-serif; text-anchor: start" x="650.09" y="167.22" transform="rotate(-0 650.09 167.217054)">−2.0</text>
</g>
</g>
<g id="ytick_16">
<g id="line2d_34">
<g>
<use href="#m65f5682453" x="640.44" y="120.59" style="stroke: #000000; stroke-width: 0.9"/>
</g>
</g>
<g id="text_26">
<text style="font-size: 10px; font-family: 'DejaVu Sans', sans-serif; text-anchor: start" x="650.09" y="124.39" transform="rotate(-0 650.09 124.393)">−1.5</text>
</g>
</g>
<g id="text_27">
<g transform="translate(698.936813 327.112) rotate(-90)">
<text>
<tspan x="0" y="-0.98" style="font-size: 10.4px; font-family: 'DejaVu Sans', sans-serif">P</tspan>
<tspan x="6.26" y="-0.98" style="font-size: 10.4px; font-family: 'DejaVu Sans', sans-serif">r</tspan>
<tspan x="10.52" y="-0.98" style="font-size: 10.4px; font-family: 'DejaVu Sans', sans-serif">e</tspan>
<tspan x="16.90" y="-0.98" style="font-size: 10.4px; font-family: 'DejaVu Sans', sans-serif">s</tspan>
<tspan x="22.31" y="-0.98" style="font-size: 10.4px; font-family: 'DejaVu Sans', sans-serif">i</tspan>
<tspan x="25.19" y="-0.98" style="font-size: 10.4px; font-family: 'DejaVu Sans', sans-serif">o</tspan>
<tspan x="31.54" y="-0.98" style="font-size: 10.4px; font-family: 'DejaVu Sans', sans-serif">n</tspan>
<tspan x="38.12" y="-0.98" style="font-size: 10.4px; font-family: 'DejaVu Sans', sans-serif"> </tspan>
<tspan x="41.41" y="-0.98" style="font-size: 10.4px; font-family: 'DejaVu Sans', sans-serif">d</tspan>
<tspan x="48.00" y="-0.98" style="font-size: 10.4px; font-family: 'DejaVu Sans', sans-serif">e</tspan>
<tspan x="54.38" y="-0.98" style="font-size: 10.4px; font-family: 'DejaVu Sans', sans-serif"> </tspan>
<tspan x="57.68" y="-0.98" style="font-size: 10.4px; font-family: 'DejaVu Sans', sans-serif">S</tspan>
<tspan x="64.27" y="-0.98" style="font-size: 10.4px; font-family: 'DejaVu Sans', sans-serif">u</tspan>
<tspan x="70.84" y="-0.98" style="font-size: 10.4px; font-family: 'DejaVu Sans', sans-serif">e</tspan>
<tspan x="77.22" y="-0.98" style="font-size: 10.4px; font-family: 'DejaVu Sans', sans-serif">l</tspan>
<tspan x="80.11" y="-0.98" style="font-size: 10.4px; font-family: 'DejaVu Sans', sans-serif">o</tspan>
<tspan x="86.45" y="-0.98" style="font-size: 10.4px; font-family: 'DejaVu Sans', sans-serif"> </tspan>
<tspan x="102.35" y="-0.98" style="font-size: 10.4px; font-family: 'DejaVu Sans', sans-serif">/</tspan>
<tspan x="89.75" y="-0.98" style="font-style: oblique; font-size: 10.4px; font-family: 'DejaVu Sans', sans-serif">k</tspan>
<tspan x="95.76" y="-0.98" style="font-style: oblique; font-size: 10.4px; font-family: 'DejaVu Sans', sans-serif">g</tspan>
<tspan x="105.84" y="-0.98" style="font-style: oblique; font-size: 10.4px; font-family: 'DejaVu Sans', sans-serif">c</tspan>
<tspan x="111.55" y="-0.98" style="font-style: oblique; font-size: 10.4px; font-family: 'DejaVu Sans', sans-serif">m</tspan>
<tspan x="122.12" y="-4.80" style="font-size: 7.28px; font-family: 'DejaVu Sans', sans-serif">2</tspan>
</text>
</g>
</g>
</g>
<g id="LineCollection_1"/>
<g id="patch_8">
<path d="M 623.2 436.5 L 631.8 436.5 L 640.4 436.5 L 640.4 90.4 L 631.8 90.4 L 623.2 90.4 L 623.2 436.5 z" style="fill: none; stroke: #000000; stroke-width: 0.9; stroke-linejoin: miter; stroke-linecap: square"/>
</g>
</g>
</g>
<defs>
<clipPath id="p965ad97212">
<rect x="43.56" y="47.16" width="552.96" height="433.44"/>
</clipPath>
</defs>
</svg>

 </div>
 <div id="figtool" class="abs"></div>
 <svg class="abs" style="left:0;top:760px" width="240" height="42" viewBox="7 917 240 42">
<defs><pattern id="stip" width="2" height="2" patternUnits="userSpaceOnUse"><rect x="0" y="0" width="1" height="1" fill="#111"/><rect x="1" y="1" width="1" height="1" fill="#111"/></pattern></defs>
<!-- home -->
<path d="M12.800,939.500L23,930.800L26.200,933.500V931.300H28.700V935.600L33.200,939.500L32,940.900L23,933.200L14,940.900Z" fill="#000"/>
<path d="M15.800,940.600L23,934.500L30.200,940.600V948.200H25.300V943H20.700V948.200H15.800Z" fill="#000"/>
<!-- back / forward (disabled, stippled) -->
<path d="M42,938.700L52.500,928.500L56,932L51.800,936.200H61V941.200H51.800L56,945.400L52.500,948.900Z" fill="url(#stip)"/>
<path d="M88.300,938.700L77.800,928.500L74.300,932L78.500,936.200H69.300V941.200H78.500L74.300,945.400L77.800,948.900Z" fill="url(#stip)"/>
<path d="M97.500,926.500V949.500M194.500,926.500V949.500" stroke="#b4b4b4" stroke-width="1"/>
<!-- move -->
<path d="M117.200,927.300L121.500,932.300H118.700V937.200H123.500V934.400L128.500,938.700L123.500,943V940.200H118.700V945.100H121.500L117.200,950.100L112.900,945.100H115.700V940.200H110.900V943L105.900,938.700L110.900,934.400V937.200H115.700V932.300H112.900Z" fill="#000"/>
<!-- zoom -->
<circle cx="145" cy="936.800" r="7.300" fill="none" stroke="#000" stroke-width="3"/>
<path d="M150.300,942.300L156.500,947.800" stroke="#000" stroke-width="3.400" stroke-linecap="round"/>
<!-- sliders -->
<path d="M166.300,932.300H186M166.300,938.900H186M166.300,945.500H186" stroke="#000" stroke-width="1.700"/>
<rect x="170.300" y="929.900" width="3.800" height="4.800" rx=".8" fill="#000"/><rect x="178.300" y="936.500" width="3.800" height="4.800" rx=".8" fill="#000"/><rect x="172.300" y="943.100" width="3.800" height="4.800" rx=".8" fill="#000"/>
<!-- save -->
<path d="M204.200,930.400H217.500L221.900,934.800V946.800H204.200Z" fill="none" stroke="#000" stroke-width="2.300" stroke-linejoin="round"/>
<rect x="207.800" y="930.400" width="8" height="5.300" fill="#000"/><rect x="212.300" y="931" width="2" height="3.400" fill="#f0f0f0"/>
<rect x="207" y="940.300" width="12" height="6.500" fill="none" stroke="#000" stroke-width="1.600"/>
</svg>

</div>

<!-- ===== Tk window ===== -->
<div id="tkwin" class="abs">
 <div id="tktitle" class="abs"></div>
 <svg class="abs" style="left:0;top:0" width="399" height="407" viewBox="952 15 399 407">
<defs>
<linearGradient id="sh" x1="0" y1="0" x2="1" y2="1"><stop offset="0" stop-color="#0f84e4"/><stop offset="1" stop-color="#0a72cc"/></linearGradient>
</defs>
<!-- feather -->
<path d="M964,35.500Q964.500,27 971.500,22.500Q972.500,27 968,32.500L965,34.500Z" fill="#2d4f86" stroke="#1b2f52" stroke-width=".7"/>
<path d="M963,37L969.500,25.500" stroke="#1b2f52" stroke-width=".9"/>
<!-- controls -->
<g stroke="#111" stroke-width="1" fill="none"><path d="M1232,29.500H1242"/><rect x="1277.500" y="24.500" width="9" height="9" rx="1"/><path d="M1323,24L1333,34M1333,24L1323,34"/></g>

<!-- ETABS logo -->
<g>
<path d="M1024.700,73.500L1025.500,72H1070.200L1071,73.500V129Q1071,134 1066,134H1029.700Q1024.700,134 1024.700,129Z" fill="#526e82"/>
<path d="M1027.500,72H1068.500L1063.700,93.800L1059.700,109.800L1057.300,124.100L1056.500,134H1039.800L1037.400,122.500L1031.800,88.300Z" fill="#91b1c6"/>
<path d="M1035.400,78.300H1060.900L1054.100,97H1043Z" fill="#f0f0f0"/>
<path d="M1026.600,72L1031,88.300L1036.600,122.500L1039,134M1069.600,72L1064.600,93.800L1060.600,109.800L1058.200,124.100L1057.400,134" stroke="#f0f0f0" stroke-width="1.500" fill="none"/>
<rect x="1012" y="88" width="33.600" height="33.400" rx="1" fill="#3c3c3c" opacity=".7"/>
<rect x="1010" y="85.900" width="33.600" height="33.400" fill="url(#sh)" stroke="#d8ecfb" stroke-width=".8"/>
<text x="1027" y="113.700" font-family="Liberation Sans, sans-serif" font-weight="bold" font-size="31" fill="#fff" text-anchor="middle">E</text>
</g>
<!-- SAP2000 logo -->
<g>
<path d="M1126.500,72.300Q1154,92 1181.500,72.300Q1166,103 1181.500,133.700Q1154,114 1126.500,133.700Q1142,103 1126.500,72.300Z" fill="#546e82" stroke="#8fb1c9" stroke-width=".8"/>
<path d="M1139,86Q1154,95.500 1169,86Q1163,103 1169,120Q1154,110.500 1139,120Q1145,103 1139,86Z" fill="#8fb1c9"/>
<path d="M1127,73L1139,86M1181,73L1169,86M1127,133L1139,120M1181,133L1169,120" stroke="#8fb1c9" stroke-width="1"/>
<path d="M1153.500,103.300H1155.500M1158,103.300H1163" stroke="#546e82" stroke-width=".8"/>
<rect x="1121.600" y="88.700" width="32.500" height="33.300" fill="#5a5a5a" opacity=".55"/>
<rect x="1119.900" y="87" width="32.500" height="33.300" fill="url(#sh)" stroke="#e8f2fb" stroke-width=".8"/>
<text x="1136.200" y="115.500" font-family="Liberation Sans, sans-serif" font-weight="bold" font-size="32" fill="#fff" text-anchor="middle">S</text>
</g>
<!-- SAFE logo -->
<g>
<rect x="1219" y="72.200" width="63" height="61.600" fill="#9cc4d8"/>
<rect x="1219" y="72.200" width="10.600" height="61.600" fill="#0a78d7"/>
<g fill="#6b8d9f">
<rect x="1233.500" y="77" width="12.500" height="14"/><rect x="1249.300" y="77" width="12.500" height="14"/><rect x="1265" y="77" width="12.500" height="14"/>
<rect x="1233.500" y="96" width="12.500" height="14.500"/><rect x="1249.300" y="96" width="12.500" height="14.500"/><rect x="1265" y="96" width="12.500" height="14.500"/>
<rect x="1233.500" y="115" width="12.500" height="14.500"/><rect x="1249.300" y="115" width="12.500" height="14.500"/><rect x="1265" y="115" width="12.500" height="14.500"/>
</g>
<g fill="#4d6f85">
<rect x="1236.500" y="80.500" width="6.500" height="7"/><rect x="1252.300" y="80.500" width="6.500" height="7"/><rect x="1268" y="80.500" width="6.500" height="7"/>
<rect x="1236.500" y="99.500" width="6.500" height="7.500"/><rect x="1252.300" y="99.500" width="6.500" height="7.500"/><rect x="1268" y="99.500" width="6.500" height="7.500"/>
<rect x="1236.500" y="118.500" width="6.500" height="7.500"/><rect x="1252.300" y="118.500" width="6.500" height="7.500"/><rect x="1268" y="118.500" width="6.500" height="7.500"/>
</g>
<rect x="1221" y="88.700" width="33.200" height="33.300" fill="#4a4a4a" opacity=".55"/>
<rect x="1219.300" y="87" width="33.200" height="33.300" fill="url(#sh)" stroke="#e8f2fb" stroke-width=".8"/>
<text x="1236" y="115.500" font-family="Liberation Sans, sans-serif" font-weight="bold" font-size="32" fill="#fff" text-anchor="middle">S</text>
</g>
</svg>
<div class="tkbtn" style="left:65.0px;top:145.3px;width:59.0px;height:25.7px;"></div>
<div class="tkbtn" style="left:165.0px;top:145.3px;width:76.0px;height:25.7px;"></div>
<div class="tkbtn" style="left:270.0px;top:145.3px;width:57.0px;height:25.7px;"></div>
<div class="tkbtn" style="left:189.0px;top:229.4px;width:106.2px;height:20.2px;"></div>
<div class="tkbtn" style="left:120.0px;top:265.4px;width:162.0px;height:25.1px;"></div>
<div class="tkbtn" style="left:190.0px;top:340.0px;width:29.7px;height:25.7px;"></div>
<div class="abs" style="left:190.0px;top:200.0px;width:80.0px;height:19.7px;background:#fff;border:1px solid;border-color:#a0a0a0 #fff #fff #a0a0a0;box-sizing:border-box"></div>
<div class="abs" style="left:272.0px;top:237.0px;width:16px;height:5px;box-sizing:border-box;border:1px solid;border-color:#fff #696969 #696969 #fff;background:#f0f0f0"></div>
<div class="t" style="left:30.0px;top:8.7px;font-size:12px;color:#111;font-weight:normal;letter-spacing:-0.192px">Graph API CSI - Python</div>
<div class="t" style="left:70.0px;top:152.4px;font-size:12px;color:#000;font-weight:normal;letter-spacing:-0.637px">CSI Etabs</div>
<div class="t" style="left:170.0px;top:152.4px;font-size:12px;color:#000;font-weight:normal;letter-spacing:-0.777px">CSI SAP2000</div>
<div class="t" style="left:275.0px;top:152.4px;font-size:12px;color:#000;font-weight:normal;letter-spacing:-1.048px">CSI SAFE</div>
<div class="t" style="left:143.2px;top:179.7px;font-size:11.3px;color:#0000ff;font-weight:bold;letter-spacing:-0.064px">Connected to SAP2000</div>
<div class="t" style="left:150.3px;top:204.2px;font-size:12px;color:#000;font-weight:normal;letter-spacing:-0.547px">Levels:</div>
<div class="t" style="left:224.0px;top:204.0px;font-size:12px;color:#000;font-weight:normal;letter-spacing:-0.580px">15</div>
<div class="t" style="left:96.0px;top:234.0px;font-size:12px;color:#000;font-weight:normal;letter-spacing:-0.761px">Load Combination:</div>
<div class="t" style="left:204.0px;top:233.7px;font-size:12px;color:#000;font-weight:normal;letter-spacing:-1.043px">SERVICIO</div>
<div class="t" style="left:125.0px;top:272.2px;font-size:12px;color:#000;font-weight:normal;letter-spacing:-0.361px">Generate Graph Soil Pressure</div>
<div class="t" style="left:151.0px;top:309.8px;font-size:11.3px;color:#0000ff;font-weight:bold;letter-spacing:0.091px">Grafico generado</div>
<div class="t" style="left:195.3px;top:347.2px;font-size:12px;color:#000;font-weight:normal;letter-spacing:-0.329px">Exit</div>
</div>
</body>
</html>
